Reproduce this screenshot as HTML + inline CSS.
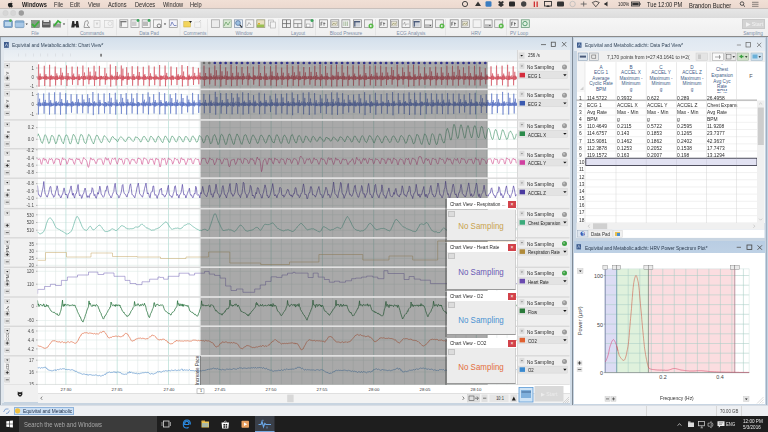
<!DOCTYPE html><html><head><meta charset="utf-8"><style>
html,body{margin:0;padding:0;width:768px;height:432px;overflow:hidden;background:#cfd9e4;font-family:"Liberation Sans", sans-serif;}
.t{position:absolute;white-space:nowrap;line-height:1;}
.r{position:absolute;box-sizing:border-box;}
svg{position:absolute;left:0;top:0;}
</style></head><body>
<div class="r" style="left:0px;top:0px;width:768px;height:8px;background:linear-gradient(#f1e0d6,#ecd9cf);"></div>
<svg width="768" height="18" style="left:0;top:0"><path d="M10.6,2.2 C10.9,1.7 11.3,1.4 11.6,1.4 C11.7,1.9 11.4,2.4 10.9,2.6 Z M8.5,3.2 C9.3,2.6 10.1,3.1 10.6,3.1 C11.1,3.1 11.9,2.6 12.7,3.3 C12.3,3.6 12.0,4.1 12.1,4.7 C12.2,5.4 12.6,5.7 12.9,5.9 C12.6,6.6 12.1,7.4 11.5,7.4 C11.0,7.4 10.9,7.1 10.5,7.1 C10.1,7.1 9.9,7.4 9.4,7.4 C8.8,7.4 8.0,6.1 7.9,5.1 C7.8,4.2 8.0,3.6 8.5,3.2 Z" fill="#222"/></svg>
<div class="t" style="left:22.00px;top:2.04px;font-size:20px;color:#1a1a1a;font-weight:bold;transform-origin:0 0;transform:scale(0.2835,0.3150);filter:grayscale(1);">Windows</div>
<div class="t" style="left:54.00px;top:2.04px;font-size:20px;color:#2a2a2a;font-weight:normal;transform-origin:0 0;transform:scale(0.2835,0.3150);filter:grayscale(1);">File</div>
<div class="t" style="left:70.00px;top:2.04px;font-size:20px;color:#2a2a2a;font-weight:normal;transform-origin:0 0;transform:scale(0.2835,0.3150);filter:grayscale(1);">Edit</div>
<div class="t" style="left:88.00px;top:2.04px;font-size:20px;color:#2a2a2a;font-weight:normal;transform-origin:0 0;transform:scale(0.2835,0.3150);filter:grayscale(1);">View</div>
<div class="t" style="left:108.00px;top:2.04px;font-size:20px;color:#2a2a2a;font-weight:normal;transform-origin:0 0;transform:scale(0.2835,0.3150);filter:grayscale(1);">Actions</div>
<div class="t" style="left:135.00px;top:2.04px;font-size:20px;color:#2a2a2a;font-weight:normal;transform-origin:0 0;transform:scale(0.2835,0.3150);filter:grayscale(1);">Devices</div>
<div class="t" style="left:163.00px;top:2.04px;font-size:20px;color:#2a2a2a;font-weight:normal;transform-origin:0 0;transform:scale(0.2835,0.3150);filter:grayscale(1);">Window</div>
<div class="t" style="left:190.00px;top:2.04px;font-size:20px;color:#2a2a2a;font-weight:normal;transform-origin:0 0;transform:scale(0.2835,0.3150);filter:grayscale(1);">Help</div>
<svg width="768" height="10" style="left:0;top:0"><circle cx="465" cy="4" r="2.6" fill="none" stroke="#333" stroke-width="0.9"/><path d="M475,6 L478,1.5 L481,6 Z" fill="#333"/><rect x="485.5" y="1.2" width="6" height="5.6" rx="1.2" fill="#3a7cc0"/><path d="M498,2 L499.5,1 L501,2 L502.5,1 L504,2 L502.5,3.5 L504,5 L501,7 L498,5 L499.5,3.5 Z" fill="#333"/><rect x="509" y="1.5" width="6" height="5" rx="1" fill="#2a2a2a"/><circle cx="523.7" cy="4" r="2.7" fill="#444"/><rect x="533.7" y="1.5" width="1.3" height="5.5" fill="#d03030"/><rect x="536.5" y="1.5" width="1.3" height="5.5" fill="#d03030"/><rect x="544.5" y="1.5" width="7" height="4.5" fill="none" stroke="#333" stroke-width="0.9"/><path d="M546,7 L548,5 L550,7Z" fill="#333"/><rect x="557.0" y="1.5" width="7" height="5" rx="1" fill="#333"/><circle cx="572.6" cy="4" r="2.7" fill="none" stroke="#bbb" stroke-width="0.8"/><path d="M580.7,4 L586.7,4 M583.7,1.5 L583.7,6.5" stroke="#555" stroke-width="0.8"/><path d="M592.3,2.5 Q595.8,0 599.3,2.5 L595.8,6.8 Z" fill="none" stroke="#333" stroke-width="0.8"/><path d="M604.5,3 L605.5,3 L607.5,1.5 L607.5,6.5 L605.5,5 L604.5,5 Z" fill="#333"/><rect x="631.5" y="2" width="8" height="4" fill="none" stroke="#333" stroke-width="0.8"/><rect x="632.3" y="2.8" width="6.4" height="2.4" fill="#333"/><rect x="639.7" y="3.2" width="0.9" height="1.6" fill="#333"/><circle cx="742" cy="3.6" r="1.8" fill="none" stroke="#333" stroke-width="0.8"/><path d="M743.3,5 L745,6.7" stroke="#333" stroke-width="0.9"/><path d="M752,2.3 H758.5 M752,4.3 H758.5 M752,6.3 H758.5" stroke="#333" stroke-width="0.55"/></svg>
<div class="t" style="left:617.70px;top:2.44px;font-size:20px;color:#222;font-weight:normal;transform-origin:0 0;transform:scale(0.2207,0.2508);">100%</div>
<div class="t" style="left:646.70px;top:1.78px;font-size:20px;color:#222;font-weight:normal;transform-origin:0 0;transform:scale(0.2829,0.3214);">Tue 12:00 PM</div>
<div class="t" style="left:688.50px;top:1.68px;font-size:20px;color:#222;font-weight:normal;transform-origin:0 0;transform:scale(0.2918,0.3316);">Brandon Bucher</div>
<div class="r" style="left:0px;top:8px;width:768px;height:9.5px;background:linear-gradient(#e6e6e6,#dcdcdc);border-top:0.5px solid #c8c0bc"></div>
<svg width="40" height="18" style="left:0;top:0"><circle cx="5.5" cy="13" r="2.7" fill="#d6d6d6" stroke="#cdcdcd" stroke-width="0.4"/><circle cx="13.2" cy="13" r="2.7" fill="#d6d6d6" stroke="#cdcdcd" stroke-width="0.4"/><circle cx="21.3" cy="13" r="2.7" fill="#9c9c9c"/></svg>
<div class="r" style="left:0px;top:17.5px;width:768px;height:19.5px;background:linear-gradient(#f6f6f6,#efefef);border-bottom:1px solid #8a8a8a"></div>
<svg width="768" height="40" style="left:0;top:0"><rect x="3.8" y="20.5" width="8.6" height="7" rx="0.8" fill="#7fa8d0" stroke="#5a7fa8" stroke-width="0.6"/><rect x="5" y="22" width="6" height="4" fill="#bcd6ec"/><circle cx="10.5" cy="20.6" r="1.4" fill="#4caf50"/><rect x="15.2" y="20.8" width="8.8" height="6.8" rx="0.8" fill="#8bb2d6" stroke="#5d86ad" stroke-width="0.6"/><rect x="15.5" y="23" width="8.2" height="3.8" fill="#a9c8e6"/><path d="M25.5,23.6 L27.9,23.6 L26.7,25 Z" fill="#333"/><rect x="31.5" y="20.5" width="8" height="7.2" fill="#8a9a8a" stroke="#607060" stroke-width="0.5"/><path d="M32,24 L34.5,26.5 L39,21.5" stroke="#3cae3c" stroke-width="1.8" fill="none"/><rect x="42" y="20.2" width="8.6" height="7.4" rx="0.8" fill="#5e5e5e"/><rect x="43.5" y="20" width="5.6" height="2" fill="#e8e8e8"/><rect x="43" y="23" width="6.6" height="2" fill="#8a8a8a"/><rect x="53" y="23.5" width="8" height="4" fill="#a0a0a0"/><path d="M54,26 L58,21 L61,23" stroke="#3cae3c" stroke-width="1.8" fill="none"/><path d="M62.8,23.6 L65.2,23.6 L64,25 Z" fill="#333"/><path d="M71.2,27.5 L72.3,21 L74.2,21 L74.6,24 L75.8,24 L76.2,21 L78.1,21 L79.2,27.5 L76,27.5 L75.5,25.5 L74.9,25.5 L74.4,27.5 Z" fill="#2a2a2a"/><path d="M84,27.5 L85,21.5 L87.5,20.5 L88.5,23 L87,25 L89.8,27.5 Z" fill="none" stroke="#8a8a8a" stroke-width="0.8"/><rect x="94" y="20.5" width="6" height="7" fill="none" stroke="#c4c4c4" stroke-width="0.6"/><path d="M95.5,22.5 L98.5,22.5 L97,25.5 Z" fill="#d0d0d0"/><rect x="104.5" y="20.5" width="8.5" height="7" fill="none" stroke="#cacaca" stroke-width="0.6"/><circle cx="110" cy="23.5" r="2" fill="none" stroke="#cfcfcf" stroke-width="0.6"/><rect x="119.8" y="19.8" width="8" height="7.6" fill="#f4f4f4" stroke="#9c9c9c" stroke-width="0.8"/><rect x="120.5" y="21" width="6" height="1.3" fill="#777"/><rect x="120.5" y="21" width="1.2" height="5.6" fill="#777"/><rect x="131.0" y="19.8" width="8" height="7.6" fill="#f4f4f4" stroke="#9c9c9c" stroke-width="0.8"/><circle cx="138" cy="20.5" r="1.4" fill="#3aa65a"/><rect x="131.5" y="21.5" width="5" height="4.5" fill="#ccc"/><rect x="142.2" y="19.8" width="8" height="7.6" fill="#f4f4f4" stroke="#9c9c9c" stroke-width="0.8"/><circle cx="149" cy="20.5" r="1.4" fill="#3aa65a"/><rect x="143" y="21.5" width="5" height="4.5" fill="#bbb"/><rect x="153.5" y="19.8" width="8" height="7.6" fill="#f4f4f4" stroke="#9c9c9c" stroke-width="0.8"/><circle cx="159" cy="25.8" r="1.8" fill="none" stroke="#666" stroke-width="0.8"/><path d="M163.8,23.6 L166.2,23.6 L165,25 Z" fill="#333"/><rect x="169.3" y="19.8" width="8" height="7.6" fill="#f2f2fa" stroke="#9c9c9c" stroke-width="0.8"/><path d="M170.5,26 L172,22 L174,25.5 L176.5,25.5" stroke="#5a6ab0" stroke-width="0.7" fill="none"/><rect x="183.8" y="21.5" width="6.5" height="5.5" fill="#f2d45c" stroke="#c8a830" stroke-width="0.5"/><path d="M189,21 L192,21 L190.5,23 Z" fill="#222"/><rect x="194.8" y="22" width="6" height="5.5" fill="none" stroke="#d4d4d4" stroke-width="0.6"/><path d="M199,22 L201,20" stroke="#bbb" stroke-width="0.6"/><rect x="211.5" y="19.8" width="8" height="7.6" fill="#ececec" stroke="#a8a8a8" stroke-width="0.8"/><rect x="223.3" y="19.8" width="8" height="7.6" fill="#d8ead2" stroke="#9aaa9a" stroke-width="0.8"/><path d="M224,26 L226,22 L228,25 L230,21.5" stroke="#4a8a4a" stroke-width="0.6" fill="none"/><rect x="234.5" y="19.8" width="8" height="7.6" fill="#e6eef6" stroke="#8a9ab0" stroke-width="0.8"/><circle cx="238" cy="23" r="2.4" fill="#9cc0e0" stroke="#4a6a9a" stroke-width="0.7"/><path d="M239.8,24.8 L242,27.3" stroke="#222" stroke-width="1.1"/><rect x="245.8" y="19.8" width="8" height="7.6" fill="#f2f2f2" stroke="#a0a0a0" stroke-width="0.8"/><path d="M247,26 L249,22.5 L251,25" stroke="#888" stroke-width="0.6" fill="none"/><rect x="256.8" y="19.8" width="8" height="7.6" fill="#e8e0c0" stroke="#9a9a7a" stroke-width="0.8"/><rect x="257" y="24.5" width="7" height="2.6" fill="#9ac050"/><rect x="258" y="23" width="2" height="1.5" fill="#e0b030"/><rect x="268.3" y="20" width="5" height="6" fill="#f0f0f0" stroke="#aaa" stroke-width="0.6"/><rect x="270.5" y="22" width="5" height="6" fill="#f4f4f4" stroke="#aaa" stroke-width="0.6"/><rect x="282.5" y="19.8" width="8" height="7.6" fill="#f0f0f0" stroke="#777" stroke-width="0.8"/><path d="M286.5,20 V27.5 M282.5,23.6 H290.5" stroke="#666" stroke-width="0.8"/><rect x="293.8" y="19.8" width="8" height="7.6" fill="#f0f0f0" stroke="#888" stroke-width="0.8"/><path d="M297.8,23.6 V27.5 M293.8,23.6 H301.8" stroke="#777" stroke-width="0.7"/><rect x="305.0" y="19.8" width="8" height="7.6" fill="#f0f0f0" stroke="#888" stroke-width="0.8"/><circle cx="312" cy="20.5" r="1.5" fill="#3aa65a"/><rect x="306.5" y="24" width="3.5" height="3" fill="#fff" stroke="#888" stroke-width="0.5"/><rect x="319.5" y="19.8" width="8" height="7.6" fill="#f2f2f2" stroke="#8c8c8c" stroke-width="0.8"/><path d="M321,25.8 V22.2 H322.6 M321,24 H322.2 M324,22.2 V25.8 M323.4,23.5 L325.4,23.5" stroke="#444" stroke-width="0.6" fill="none"/><rect x="330.8" y="19.8" width="8" height="7.6" fill="#f2f2f2" stroke="#8c8c8c" stroke-width="0.8"/><rect x="331.90000000000003" y="21.4" width="5.4" height="4.6" fill="#e8e4d0" stroke="#888" stroke-width="0.4"/><path d="M332.3,25 L333.8,23 L335.3,24.5 L336.8,22.5" stroke="#6a6a3a" stroke-width="0.5" fill="none"/><rect x="341.9" y="19.8" width="8" height="7.6" fill="#f2f2f2" stroke="#8c8c8c" stroke-width="0.8"/><path d="M343.9,21.5 V26 M345.7,21.5 V26 M347.4,21.5 V26" stroke="#7a9a6a" stroke-width="0.6"/><rect x="353.5" y="19.8" width="8" height="7.6" fill="#f2f2f2" stroke="#8c8c8c" stroke-width="0.8"/><rect x="354.2" y="21" width="6" height="5.6" fill="#d0d4dc"/><rect x="354.2" y="21" width="6" height="1.4" fill="#4a5a7a"/><rect x="354.2" y="21" width="1.2" height="5.6" fill="#4a5a7a"/><rect x="364.5" y="19.8" width="8" height="7.6" fill="#f0f0f0" stroke="#9a9a9a" stroke-width="0.8"/><circle cx="371" cy="26" r="2.5" fill="#5ab84a"/><path d="M370.2,24.8 L372.2,26 L370.2,27.2Z" fill="#fff"/><rect x="379.3" y="19.8" width="8" height="7.6" fill="#f2f2f2" stroke="#8c8c8c" stroke-width="0.8"/><path d="M380.8,25.8 V22.2 H382.40000000000003 M380.8,24 H382.0 M383.8,22.2 V25.8 M383.2,23.5 L385.2,23.5" stroke="#444" stroke-width="0.6" fill="none"/><rect x="390.5" y="19.8" width="8" height="7.6" fill="#f2f2f2" stroke="#8c8c8c" stroke-width="0.8"/><rect x="391.6" y="21.4" width="5.4" height="4.6" fill="#e8e4d0" stroke="#888" stroke-width="0.4"/><path d="M392,25 L393.5,23 L395,24.5 L396.5,22.5" stroke="#6a6a3a" stroke-width="0.5" fill="none"/><rect x="402.0" y="19.8" width="8" height="7.6" fill="#f2f2f2" stroke="#8c8c8c" stroke-width="0.8"/><path d="M402.7,24 L404.0,24 L404.7,22 L405.5,25.5 L406.3,24 L408.9,24" stroke="#888" stroke-width="0.5" fill="none"/><rect x="413.0" y="19.8" width="8" height="7.6" fill="#f2f2f2" stroke="#8c8c8c" stroke-width="0.8"/><rect x="413.7" y="21" width="6" height="5.6" fill="#d0d4dc"/><rect x="413.7" y="21" width="6" height="1.4" fill="#4a5a7a"/><rect x="413.7" y="21" width="1.2" height="5.6" fill="#4a5a7a"/><rect x="424.5" y="19.8" width="8" height="7.6" fill="#f2f2f2" stroke="#8c8c8c" stroke-width="0.8"/><rect x="425" y="24.2" width="6.5" height="2.6" fill="#bbb"/><path d="M429.5,25 L431,25 L430.25,26Z" fill="#111"/><rect x="435.5" y="19.8" width="8" height="7.6" fill="#f0f0f0" stroke="#9a9a9a" stroke-width="0.8"/><circle cx="442" cy="26" r="2.5" fill="#5ab84a"/><path d="M441.2,24.8 L443.2,26 L441.2,27.2Z" fill="#fff"/><rect x="450.2" y="19.8" width="8" height="7.6" fill="#f2f2f2" stroke="#8c8c8c" stroke-width="0.8"/><path d="M451.7,25.8 V22.2 H453.3 M451.7,24 H452.9 M454.7,22.2 V25.8 M454.09999999999997,23.5 L456.09999999999997,23.5" stroke="#444" stroke-width="0.6" fill="none"/><rect x="461.3" y="19.8" width="8" height="7.6" fill="#f2f2f2" stroke="#8c8c8c" stroke-width="0.8"/><rect x="462.40000000000003" y="21.4" width="5.4" height="4.6" fill="#e8e4d0" stroke="#888" stroke-width="0.4"/><path d="M462.8,25 L464.3,23 L465.8,24.5 L467.3,22.5" stroke="#6a6a3a" stroke-width="0.5" fill="none"/><rect x="473.1" y="19.8" width="8" height="7.6" fill="#f2f2f2" stroke="#c0c0c0" stroke-width="0.8"/><rect x="484.1" y="19.8" width="8" height="7.6" fill="#f2f2f2" stroke="#8c8c8c" stroke-width="0.8"/><rect x="484.6" y="24.2" width="6.5" height="2.6" fill="#bbb"/><path d="M489.1,25 L490.6,25 L489.85,26Z" fill="#111"/><rect x="494.7" y="19.8" width="8" height="7.6" fill="#f0f0f0" stroke="#9a9a9a" stroke-width="0.8"/><circle cx="501.2" cy="26" r="2.5" fill="#5ab84a"/><path d="M500.4,24.8 L502.4,26 L500.4,27.2Z" fill="#fff"/><rect x="510.1" y="19.8" width="8" height="7.6" fill="#f2f2f2" stroke="#8c8c8c" stroke-width="0.8"/><path d="M511.6,25.8 V22.2 H513.2 M511.6,24 H512.8000000000001 M514.6,22.2 V25.8 M514.0,23.5 L516.0,23.5" stroke="#444" stroke-width="0.6" fill="none"/><rect x="521.3" y="19.8" width="8" height="7.6" fill="#e0f0e0" stroke="#6a9a7a" stroke-width="0.8"/><circle cx="525" cy="23.6" r="2.2" fill="none" stroke="#3a8a5a" stroke-width="0.8"/><rect x="67.5" y="19" width="0.6" height="16.5" fill="#dcdcdc"/><rect x="116.3" y="19" width="0.6" height="16.5" fill="#dcdcdc"/><rect x="179.7" y="19" width="0.6" height="16.5" fill="#dcdcdc"/><rect x="207.3" y="19" width="0.6" height="16.5" fill="#dcdcdc"/><rect x="278.6" y="19" width="0.6" height="16.5" fill="#dcdcdc"/><rect x="315.2" y="19" width="0.6" height="16.5" fill="#dcdcdc"/><rect x="375.4" y="19" width="0.6" height="16.5" fill="#dcdcdc"/><rect x="445.2" y="19" width="0.6" height="16.5" fill="#dcdcdc"/><rect x="506" y="19" width="0.6" height="16.5" fill="#dcdcdc"/></svg>
<div class="t" style="left:34.75px;top:30.53px;font-size:20px;color:#7d8fa8;font-weight:normal;transform-origin:0 0;transform:scale(0.2363,0.2625) translateX(-50%);">File</div>
<div class="t" style="left:91.70px;top:30.53px;font-size:20px;color:#7d8fa8;font-weight:normal;transform-origin:0 0;transform:scale(0.2363,0.2625) translateX(-50%);">Commands</div>
<div class="t" style="left:148.50px;top:30.53px;font-size:20px;color:#7d8fa8;font-weight:normal;transform-origin:0 0;transform:scale(0.2363,0.2625) translateX(-50%);">Data Pad</div>
<div class="t" style="left:194.65px;top:30.53px;font-size:20px;color:#7d8fa8;font-weight:normal;transform-origin:0 0;transform:scale(0.2363,0.2625) translateX(-50%);">Comments</div>
<div class="t" style="left:243.60px;top:30.53px;font-size:20px;color:#7d8fa8;font-weight:normal;transform-origin:0 0;transform:scale(0.2363,0.2625) translateX(-50%);">Window</div>
<div class="t" style="left:297.75px;top:30.53px;font-size:20px;color:#7d8fa8;font-weight:normal;transform-origin:0 0;transform:scale(0.2363,0.2625) translateX(-50%);">Layout</div>
<div class="t" style="left:346.35px;top:30.53px;font-size:20px;color:#7d8fa8;font-weight:normal;transform-origin:0 0;transform:scale(0.2363,0.2625) translateX(-50%);">Blood Pressure</div>
<div class="t" style="left:411.20px;top:30.53px;font-size:20px;color:#7d8fa8;font-weight:normal;transform-origin:0 0;transform:scale(0.2363,0.2625) translateX(-50%);">ECG Analysis</div>
<div class="t" style="left:476.40px;top:30.53px;font-size:20px;color:#7d8fa8;font-weight:normal;transform-origin:0 0;transform:scale(0.2363,0.2625) translateX(-50%);">HRV</div>
<div class="t" style="left:519.20px;top:30.53px;font-size:20px;color:#7d8fa8;font-weight:normal;transform-origin:0 0;transform:scale(0.2363,0.2625) translateX(-50%);">PV Loop</div>
<div class="t" style="left:753.05px;top:30.53px;font-size:20px;color:#7d8fa8;font-weight:normal;transform-origin:0 0;transform:scale(0.2363,0.2625) translateX(-50%);">Sampling</div>
<div class="r" style="left:741.5px;top:19px;width:23.5px;height:9.5px;background:#d3d3d3;border:0.5px solid #c8c8c8"></div>
<div class="t" style="left:746.00px;top:21.21px;font-size:20px;color:#f2f2f2;font-weight:normal;transform-origin:0 0;transform:scale(0.2750,0.2750);filter:grayscale(1);">&#9654; Start</div>
<div class="r" style="left:0px;top:37px;width:572px;height:368px;background:#c6d3e0;"></div>
<div class="r" style="left:0px;top:37px;width:1px;height:368px;background:#9ba5b0;"></div>
<div class="r" style="left:1px;top:37.6px;width:570.5px;height:12px;background:linear-gradient(#d4e0ec,#e0e8f0);"></div>
<svg width="20" height="60" style="left:0;top:0"><rect x="4" y="42" width="4.8" height="5.8" fill="#3b5a8c"/><path d="M5,46.5 L6.5,43.5 L7.8,46.5" stroke="#dfe8f4" stroke-width="0.6" fill="none"/></svg>
<div class="t" style="left:12.00px;top:41.74px;font-size:20px;color:#34465a;font-weight:normal;transform-origin:0 0;transform:scale(0.2396,0.2723);">Equivital and Metabolic.adicht: Chart View*</div>
<svg width="768" height="60" style="left:0;top:0"><path d="M541,44.6 H546" stroke="#555" stroke-width="0.8"/><rect x="551.3" y="42.2" width="4" height="4.2" fill="none" stroke="#555" stroke-width="0.8"/><path d="M562,42 L566.3,46.5 M566.3,42 L562,46.5" stroke="#555" stroke-width="0.8"/></svg>
<div class="r" style="left:2px;top:49.6px;width:568px;height:12px;background:linear-gradient(#e6ecf2,#eff2f5);"></div>
<svg width="768" height="64" style="left:0;top:0"><rect x="18" y="53.5" width="0.6" height="3" fill="#d4d8dc"/><rect x="25.5" y="53.5" width="0.6" height="3" fill="#d4d8dc"/><rect x="33" y="53.5" width="0.6" height="3" fill="#d4d8dc"/><rect x="40" y="53.5" width="0.6" height="3" fill="#d4d8dc"/><rect x="47.5" y="53.5" width="0.6" height="3" fill="#d4d8dc"/><rect x="55" y="53.5" width="0.6" height="3" fill="#d4d8dc"/><rect x="62.5" y="53.5" width="0.6" height="3" fill="#d4d8dc"/><rect x="70" y="53.5" width="0.6" height="3" fill="#d4d8dc"/><rect x="100.3" y="53.8" width="1.5" height="2.8" fill="#666"/></svg>
<div class="r" style="left:3.5px;top:61.5px;width:34px;height:324px;background:#f1f1f1;"></div>
<div class="r" style="left:37.5px;top:61.5px;width:479.5px;height:323.5px;background:#ffffff;"></div>
<div class="r" style="left:517px;top:49.6px;width:52.5px;height:335.5px;background:#efefef;border-left:0.6px solid #d8d8d8"></div>
<div class="r" style="left:569.5px;top:37.6px;width:2.5px;height:367px;background:#d2dde8;"></div>
<svg width="768" height="432" style="left:0;top:0"><defs><clipPath id="pc"><rect x="37.5" y="61.5" width="479.5" height="323.5"/></clipPath></defs><g clip-path="url(#pc)"><line x1="37.5" x2="517" y1="68" y2="68" stroke="#dde9e6" stroke-width="0.6"/><line x1="37.5" x2="517" y1="77" y2="77" stroke="#dde9e6" stroke-width="0.6"/><line x1="37.5" x2="517" y1="86" y2="86" stroke="#dde9e6" stroke-width="0.6"/><line x1="37.5" x2="517" y1="94.5" y2="94.5" stroke="#dde9e6" stroke-width="0.6"/><line x1="37.5" x2="517" y1="104.5" y2="104.5" stroke="#dde9e6" stroke-width="0.6"/><line x1="37.5" x2="517" y1="114" y2="114" stroke="#dde9e6" stroke-width="0.6"/><line x1="37.5" x2="517" y1="127.6" y2="127.6" stroke="#dde9e6" stroke-width="0.6"/><line x1="37.5" x2="517" y1="139.3" y2="139.3" stroke="#dde9e6" stroke-width="0.6"/><line x1="37.5" x2="517" y1="149.8" y2="149.8" stroke="#dde9e6" stroke-width="0.6"/><line x1="37.5" x2="517" y1="158" y2="158" stroke="#dde9e6" stroke-width="0.6"/><line x1="37.5" x2="517" y1="165.2" y2="165.2" stroke="#dde9e6" stroke-width="0.6"/><line x1="37.5" x2="517" y1="172.5" y2="172.5" stroke="#dde9e6" stroke-width="0.6"/><line x1="37.5" x2="517" y1="183.6" y2="183.6" stroke="#dde9e6" stroke-width="0.6"/><line x1="37.5" x2="517" y1="191" y2="191" stroke="#dde9e6" stroke-width="0.6"/><line x1="37.5" x2="517" y1="198.2" y2="198.2" stroke="#dde9e6" stroke-width="0.6"/><line x1="37.5" x2="517" y1="205.4" y2="205.4" stroke="#dde9e6" stroke-width="0.6"/><line x1="37.5" x2="517" y1="214.8" y2="214.8" stroke="#dde9e6" stroke-width="0.6"/><line x1="37.5" x2="517" y1="222.5" y2="222.5" stroke="#dde9e6" stroke-width="0.6"/><line x1="37.5" x2="517" y1="230.2" y2="230.2" stroke="#dde9e6" stroke-width="0.6"/><line x1="37.5" x2="517" y1="244" y2="244" stroke="#dde9e6" stroke-width="0.6"/><line x1="37.5" x2="517" y1="251.2" y2="251.2" stroke="#dde9e6" stroke-width="0.6"/><line x1="37.5" x2="517" y1="258.3" y2="258.3" stroke="#dde9e6" stroke-width="0.6"/><line x1="37.5" x2="517" y1="265.3" y2="265.3" stroke="#dde9e6" stroke-width="0.6"/><line x1="37.5" x2="517" y1="271.3" y2="271.3" stroke="#dde9e6" stroke-width="0.6"/><line x1="37.5" x2="517" y1="284.2" y2="284.2" stroke="#dde9e6" stroke-width="0.6"/><line x1="37.5" x2="517" y1="306.3" y2="306.3" stroke="#dde9e6" stroke-width="0.6"/><line x1="37.5" x2="517" y1="320.5" y2="320.5" stroke="#dde9e6" stroke-width="0.6"/><line x1="37.5" x2="517" y1="331" y2="331" stroke="#dde9e6" stroke-width="0.6"/><line x1="37.5" x2="517" y1="340" y2="340" stroke="#dde9e6" stroke-width="0.6"/><line x1="37.5" x2="517" y1="348.9" y2="348.9" stroke="#dde9e6" stroke-width="0.6"/><line x1="37.5" x2="517" y1="360.2" y2="360.2" stroke="#dde9e6" stroke-width="0.6"/><line x1="37.5" x2="517" y1="372" y2="372" stroke="#dde9e6" stroke-width="0.6"/><line x1="37.5" x2="517" y1="384.4" y2="384.4" stroke="#dde9e6" stroke-width="0.6"/><line x1="45.38" x2="45.38" y1="61.5" y2="385" stroke="#dfe7e6" stroke-width="0.6"/><line x1="55.64" x2="55.64" y1="61.5" y2="385" stroke="#dfe7e6" stroke-width="0.6"/><line x1="65.90" x2="65.90" y1="61.5" y2="385" stroke="#b4dcd4" stroke-width="0.7"/><line x1="76.16" x2="76.16" y1="61.5" y2="385" stroke="#dfe7e6" stroke-width="0.6"/><line x1="86.42" x2="86.42" y1="61.5" y2="385" stroke="#dfe7e6" stroke-width="0.6"/><line x1="96.68" x2="96.68" y1="61.5" y2="385" stroke="#dfe7e6" stroke-width="0.6"/><line x1="106.94" x2="106.94" y1="61.5" y2="385" stroke="#dfe7e6" stroke-width="0.6"/><line x1="117.20" x2="117.20" y1="61.5" y2="385" stroke="#b4dcd4" stroke-width="0.7"/><line x1="127.46" x2="127.46" y1="61.5" y2="385" stroke="#dfe7e6" stroke-width="0.6"/><line x1="137.72" x2="137.72" y1="61.5" y2="385" stroke="#dfe7e6" stroke-width="0.6"/><line x1="147.98" x2="147.98" y1="61.5" y2="385" stroke="#dfe7e6" stroke-width="0.6"/><line x1="158.24" x2="158.24" y1="61.5" y2="385" stroke="#dfe7e6" stroke-width="0.6"/><line x1="168.50" x2="168.50" y1="61.5" y2="385" stroke="#b4dcd4" stroke-width="0.7"/><line x1="178.76" x2="178.76" y1="61.5" y2="385" stroke="#dfe7e6" stroke-width="0.6"/><line x1="189.02" x2="189.02" y1="61.5" y2="385" stroke="#dfe7e6" stroke-width="0.6"/><line x1="199.28" x2="199.28" y1="61.5" y2="385" stroke="#dfe7e6" stroke-width="0.6"/><line x1="209.54" x2="209.54" y1="61.5" y2="385" stroke="#dfe7e6" stroke-width="0.6"/><line x1="219.80" x2="219.80" y1="61.5" y2="385" stroke="#b4dcd4" stroke-width="0.7"/><line x1="230.06" x2="230.06" y1="61.5" y2="385" stroke="#dfe7e6" stroke-width="0.6"/><line x1="240.32" x2="240.32" y1="61.5" y2="385" stroke="#dfe7e6" stroke-width="0.6"/><line x1="250.58" x2="250.58" y1="61.5" y2="385" stroke="#dfe7e6" stroke-width="0.6"/><line x1="260.84" x2="260.84" y1="61.5" y2="385" stroke="#dfe7e6" stroke-width="0.6"/><line x1="271.10" x2="271.10" y1="61.5" y2="385" stroke="#b4dcd4" stroke-width="0.7"/><line x1="281.36" x2="281.36" y1="61.5" y2="385" stroke="#dfe7e6" stroke-width="0.6"/><line x1="291.62" x2="291.62" y1="61.5" y2="385" stroke="#dfe7e6" stroke-width="0.6"/><line x1="301.88" x2="301.88" y1="61.5" y2="385" stroke="#dfe7e6" stroke-width="0.6"/><line x1="312.14" x2="312.14" y1="61.5" y2="385" stroke="#dfe7e6" stroke-width="0.6"/><line x1="322.40" x2="322.40" y1="61.5" y2="385" stroke="#b4dcd4" stroke-width="0.7"/><line x1="332.66" x2="332.66" y1="61.5" y2="385" stroke="#dfe7e6" stroke-width="0.6"/><line x1="342.92" x2="342.92" y1="61.5" y2="385" stroke="#dfe7e6" stroke-width="0.6"/><line x1="353.18" x2="353.18" y1="61.5" y2="385" stroke="#dfe7e6" stroke-width="0.6"/><line x1="363.44" x2="363.44" y1="61.5" y2="385" stroke="#dfe7e6" stroke-width="0.6"/><line x1="373.70" x2="373.70" y1="61.5" y2="385" stroke="#b4dcd4" stroke-width="0.7"/><line x1="383.96" x2="383.96" y1="61.5" y2="385" stroke="#dfe7e6" stroke-width="0.6"/><line x1="394.22" x2="394.22" y1="61.5" y2="385" stroke="#dfe7e6" stroke-width="0.6"/><line x1="404.48" x2="404.48" y1="61.5" y2="385" stroke="#dfe7e6" stroke-width="0.6"/><line x1="414.74" x2="414.74" y1="61.5" y2="385" stroke="#dfe7e6" stroke-width="0.6"/><line x1="425.00" x2="425.00" y1="61.5" y2="385" stroke="#b4dcd4" stroke-width="0.7"/><line x1="435.26" x2="435.26" y1="61.5" y2="385" stroke="#dfe7e6" stroke-width="0.6"/><line x1="445.52" x2="445.52" y1="61.5" y2="385" stroke="#dfe7e6" stroke-width="0.6"/><line x1="455.78" x2="455.78" y1="61.5" y2="385" stroke="#dfe7e6" stroke-width="0.6"/><line x1="466.04" x2="466.04" y1="61.5" y2="385" stroke="#dfe7e6" stroke-width="0.6"/><line x1="476.30" x2="476.30" y1="61.5" y2="385" stroke="#b4dcd4" stroke-width="0.7"/><line x1="486.56" x2="486.56" y1="61.5" y2="385" stroke="#dfe7e6" stroke-width="0.6"/><line x1="496.82" x2="496.82" y1="61.5" y2="385" stroke="#dfe7e6" stroke-width="0.6"/><line x1="507.08" x2="507.08" y1="61.5" y2="385" stroke="#dfe7e6" stroke-width="0.6"/><path d="M36.9,78.2 37.2,76.3 37.5,79.3 37.9,77.4 38.3,79.6 38.6,64.4 39.0,86.7 39.3,75.8 39.6,80.0 39.9,76.8 40.2,73.6 40.5,79.7 40.8,76.2 41.2,79.3 41.6,76.8 41.9,79.2 42.6,78.1 42.6,77.8 42.9,76.3 43.2,79.1 43.6,77.1 44.0,79.0 44.3,65.8 44.7,86.0 45.0,75.7 45.3,79.6 45.6,76.9 45.9,74.1 46.2,79.5 46.5,76.1 46.9,79.7 47.3,76.7 47.6,78.8 47.9,78.4 47.9,78.1 48.2,76.6 48.5,78.8 48.9,77.4 49.3,79.5 49.6,64.8 50.0,86.6 50.3,76.0 50.6,80.0 50.9,76.9 51.2,74.9 51.5,79.3 51.8,76.2 52.2,79.6 52.6,76.4 52.9,79.1 53.4,78.2 53.4,78.4 53.8,76.0 54.0,79.3 54.4,77.4 54.8,79.5 55.2,66.5 55.6,85.5 55.9,76.0 56.2,79.8 56.5,77.0 56.8,73.4 57.1,80.0 57.4,75.6 57.7,79.6 58.1,76.9 58.5,79.0 59.1,78.0 59.1,78.6 59.4,75.5 59.7,79.1 60.1,77.1 60.5,79.5 60.8,67.9 61.2,85.2 61.5,75.4 61.8,79.7 62.1,77.0 62.4,72.7 62.7,79.7 63.0,75.8 63.4,79.5 63.8,76.8 64.1,78.9 64.8,78.1 64.8,78.2 65.1,75.9 65.4,79.1 65.8,77.7 66.2,79.4 66.5,65.5 66.9,86.0 67.2,75.9 67.5,80.3 67.8,76.8 68.1,73.0 68.4,79.2 68.7,76.3 69.1,80.0 69.5,76.6 69.8,78.8 70.3,78.4 70.3,78.3 70.7,76.6 70.9,79.2 71.3,77.6 71.7,79.3 72.1,66.6 72.5,84.8 72.8,75.4 73.1,80.0 73.4,76.7 73.7,73.6 74.0,79.7 74.3,76.3 74.6,79.6 75.0,77.1 75.4,79.0 75.7,78.1 75.7,78.2 76.1,76.7 76.3,79.3 76.7,77.3 77.1,78.9 77.5,66.7 77.9,85.2 78.2,76.1 78.5,79.9 78.8,76.6 79.1,74.3 79.4,80.1 79.7,76.2 80.0,79.9 80.4,77.3 80.8,78.8 81.1,78.4 81.1,78.4 81.5,76.0 81.7,78.8 82.1,77.4 82.5,79.2 82.9,65.6 83.3,85.8 83.6,76.0 83.9,80.0 84.2,76.9 84.5,72.5 84.8,79.6 85.1,75.9 85.4,79.4 85.8,76.7 86.2,79.1 86.7,78.3 86.7,78.1 87.1,75.6 87.3,79.2 87.7,77.3 88.1,79.5 88.5,67.5 88.9,84.3 89.2,75.6 89.5,80.1 89.8,76.8 90.1,71.7 90.4,79.6 90.7,75.6 91.0,79.8 91.4,76.4 91.8,79.1 92.3,78.4 92.3,78.4 92.7,75.8 92.9,79.4 93.3,77.4 93.7,79.5 94.1,65.8 94.5,85.9 94.8,75.6 95.1,80.0 95.4,76.7 95.7,71.5 96.0,79.7 96.3,76.4 96.6,79.6 97.0,76.7 97.4,79.2 97.7,78.2 97.7,78.3 98.0,77.0 98.3,79.0 98.7,77.0 99.1,79.0 99.4,65.9 99.8,85.8 100.1,76.2 100.4,79.8 100.7,77.1 101.0,75.8 101.3,79.1 101.6,76.0 102.0,79.5 102.4,76.7 102.7,79.1 103.2,78.4 103.2,78.2 103.5,76.2 103.8,79.4 104.2,77.8 104.6,79.3 104.9,67.9 105.3,84.7 105.6,76.0 105.9,80.1 106.2,76.7 106.5,73.5 106.8,80.1 107.1,76.2 107.5,79.2 107.9,77.0 108.2,79.3 108.6,78.4 108.6,78.4 108.9,76.8 109.2,78.9 109.6,77.7 110.0,79.5 110.3,64.5 110.7,86.6 111.0,75.7 111.3,79.3 111.6,76.6 111.9,74.7 112.2,79.8 112.5,76.0 112.9,79.4 113.3,76.9 113.6,78.9 114.0,78.6 114.0,78.0 114.3,75.8 114.6,79.6 115.0,77.5 115.4,79.3 115.7,66.0 116.1,85.6 116.4,75.9 116.7,79.6 117.0,76.9 117.3,72.0 117.6,79.9 117.9,75.9 118.3,79.0 118.7,76.7 119.0,78.9 119.5,78.3 119.5,78.0 119.9,74.7 120.1,79.1 120.5,77.4 120.9,78.9 121.3,65.5 121.7,85.9 122.0,75.8 122.3,80.2 122.6,76.6 122.9,68.6 123.2,80.3 123.5,75.8 123.8,79.2 124.2,76.8 124.6,79.0 124.9,78.5 124.9,79.0 125.3,76.4 125.5,78.5 125.9,77.4 126.3,79.2 126.7,67.2 127.1,84.9 127.4,76.3 127.7,80.0 128.0,77.0 128.3,72.8 128.6,79.6 128.9,76.1 129.2,79.7 129.6,76.9 130.0,78.9 130.4,78.6 130.4,78.2 130.8,76.4 131.0,78.5 131.4,77.7 131.8,79.5 132.2,66.2 132.6,85.7 132.9,75.9 133.2,79.9 133.5,76.2 133.8,74.0 134.1,79.7 134.4,76.4 134.7,79.9 135.1,77.2 135.5,78.7 136.0,77.8 136.0,78.3 136.3,75.8 136.6,78.8 137.0,77.5 137.4,79.3 137.7,66.3 138.1,85.6 138.4,75.8 138.7,79.9 139.0,76.8 139.3,72.0 139.6,79.7 139.9,75.9 140.3,79.3 140.7,77.2 141.0,79.0 141.6,78.5 141.6,78.3 141.9,76.6 142.2,79.4 142.6,77.1 143.0,79.3 143.3,66.8 143.7,85.5 144.0,75.2 144.3,79.9 144.6,76.7 144.9,74.1 145.2,79.5 145.5,76.1 145.9,79.8 146.3,76.9 146.6,79.1 147.2,78.4 147.2,78.1 147.5,76.3 147.8,79.1 148.2,77.6 148.6,79.4 148.9,65.5 149.3,86.2 149.6,76.0 149.9,80.1 150.2,77.0 150.5,73.3 150.8,79.5 151.1,75.9 151.5,79.6 151.9,76.8 152.2,78.6 152.6,78.3 152.6,78.0 152.9,76.8 153.2,79.2 153.6,77.0 154.0,79.6 154.3,66.6 154.7,85.2 155.0,76.3 155.3,79.6 155.6,76.7 155.9,74.5 156.2,79.2 156.5,76.3 156.9,79.5 157.3,76.6 157.6,78.9 157.9,77.9 157.9,78.2 158.2,77.0 158.5,79.5 158.9,77.7 159.3,79.3 159.6,65.0 160.0,86.2 160.3,75.7 160.6,79.7 160.9,77.1 161.2,75.6 161.5,79.7 161.8,76.0 162.2,79.5 162.6,76.3 162.9,79.0 163.4,78.0 163.4,78.3 163.7,75.5 164.0,79.4 164.4,77.8 164.8,79.2 165.1,65.6 165.5,86.2 165.8,75.4 166.1,80.0 166.4,77.1 166.7,72.9 167.0,79.6 167.3,76.2 167.7,79.0 168.1,76.8 168.4,79.3 169.2,78.0 169.2,78.3 169.6,76.9 169.8,79.3 170.2,77.1 170.6,79.7 171.0,66.5 171.4,85.3 171.7,75.7 172.0,79.7 172.3,77.1 172.6,75.7 172.9,79.5 173.2,75.7 173.5,79.7 173.9,77.0 174.3,78.9 174.9,78.4 174.9,78.4 175.2,76.6 175.5,79.0 175.9,77.6 176.3,79.6 176.6,67.3 177.0,85.1 177.3,75.7 177.6,79.8 177.9,76.9 178.2,74.1 178.5,79.8 178.8,75.7 179.2,79.8 179.6,76.6 179.9,79.0 180.3,78.0 180.3,78.5 180.6,75.3 180.9,79.0 181.3,77.3 181.7,79.2 182.0,65.1 182.4,86.4 182.7,75.8 183.0,79.9 183.3,76.6 183.6,71.5 183.9,79.4 184.2,76.1 184.6,79.5 185.0,76.9 185.3,79.3 185.9,78.0 185.9,78.2 186.2,77.1 186.5,79.5 186.9,77.7 187.3,79.4 187.6,66.0 188.0,85.9 188.3,75.7 188.6,79.9 188.9,77.1 189.2,74.6 189.5,79.4 189.8,76.0 190.2,79.5 190.6,76.9 190.9,79.0 191.3,78.4 191.3,78.1 191.7,75.8 191.9,78.9 192.3,77.2 192.7,79.4 193.1,66.9 193.5,85.0 193.8,76.2 194.1,79.8 194.4,77.1 194.7,72.9 195.0,79.3 195.3,75.9 195.6,79.2 196.0,77.0 196.4,78.7 196.6,78.6 196.6,78.7 197.0,75.6 197.2,79.4 197.6,77.0 198.0,79.5 198.4,67.9 198.8,84.3 199.1,75.4 199.4,79.1 199.7,76.9 200.0,72.6 200.3,79.5 200.6,76.2 200.9,79.4 201.3,76.7 201.7,79.2 202.2,78.7 202.2,77.9 202.6,76.4 202.8,79.7 203.2,77.2 203.6,79.8 204.0,65.6 204.4,85.8 204.7,76.2 205.0,79.9 205.3,76.9 205.6,73.0 205.9,79.9 206.2,76.2 206.5,79.0 206.9,76.4 207.3,79.3 207.6,78.1 207.6,78.0 207.9,76.7 208.2,78.9 208.6,77.4 209.0,79.4 209.3,67.6 209.7,84.4 210.0,75.8 210.3,79.7 210.6,76.9 210.9,73.4 211.2,79.5 211.5,76.1 211.9,79.3 212.3,76.9 212.6,79.0 213.1,78.1 213.1,78.2 213.4,75.3 213.7,79.6 214.1,76.9 214.5,79.0 214.8,65.5 215.2,85.7 215.5,76.4 215.8,79.9 216.1,77.1 216.4,70.2 216.7,79.0 217.0,75.4 217.4,79.7 217.8,76.8 218.1,78.7 218.6,78.6 218.6,78.1 219.0,75.3 219.2,79.4 219.6,77.1 220.0,79.6 220.4,64.7 220.8,86.5 221.1,75.8 221.4,79.7 221.7,76.6 222.0,71.3 222.3,79.1 222.6,75.9 222.9,79.3 223.3,77.0 223.7,78.7 223.9,78.7 223.9,78.7 224.3,75.5 224.5,79.0 224.9,77.4 225.3,79.2 225.7,67.3 226.1,85.1 226.4,75.9 226.7,79.8 227.0,76.9 227.3,71.3 227.6,79.8 227.9,76.2 228.2,79.3 228.6,76.8 229.0,79.6 229.4,78.4 229.4,78.0 229.7,76.4 230.0,79.0 230.4,77.3 230.8,79.5 231.1,64.8 231.5,86.2 231.8,75.7 232.1,79.7 232.4,77.1 232.7,72.9 233.0,79.5 233.3,76.5 233.7,79.3 234.1,77.2 234.4,79.3 234.9,78.3 234.9,78.5 235.2,75.9 235.5,79.5 235.9,77.7 236.3,79.1 236.6,66.1 237.0,85.8 237.3,75.7 237.6,79.7 237.9,77.3 238.2,72.5 238.5,79.2 238.8,76.0 239.2,79.4 239.6,76.8 239.9,78.9 240.2,77.9 240.2,78.1 240.6,76.2 240.8,79.4 241.2,77.5 241.6,79.2 242.0,67.0 242.4,84.7 242.7,76.0 243.0,79.8 243.3,76.9 243.6,73.4 243.9,79.5 244.2,76.1 244.5,78.9 244.9,77.2 245.3,78.8 245.8,78.2 245.8,78.2 246.2,75.8 246.4,79.2 246.8,77.7 247.2,79.2 247.6,66.3 248.0,85.4 248.3,75.6 248.6,79.9 248.9,76.8 249.2,73.2 249.5,79.4 249.8,75.7 250.1,78.9 250.5,76.5 250.9,78.7 251.6,77.9 251.6,78.9 251.9,76.9 252.2,78.9 252.6,77.7 253.0,79.7 253.3,66.6 253.7,84.7 254.0,75.5 254.3,80.1 254.6,76.7 254.9,75.3 255.2,79.6 255.5,76.3 255.9,79.1 256.3,76.7 256.6,78.7 257.1,78.8 257.1,78.5 257.5,75.7 257.7,79.3 258.1,77.1 258.5,79.1 258.9,65.0 259.3,86.1 259.6,75.9 259.9,80.0 260.2,76.9 260.5,73.0 260.8,79.8 261.1,76.0 261.4,79.7 261.8,76.6 262.2,78.3 262.9,78.2 262.9,78.5 263.2,76.4 263.5,79.3 263.9,77.3 264.3,79.4 264.6,65.8 265.0,85.7 265.3,75.5 265.6,79.8 265.9,77.0 266.2,73.4 266.5,79.7 266.8,76.1 267.2,80.0 267.6,76.9 267.9,79.3 268.7,78.8 268.7,78.7 269.1,75.8 269.3,79.3 269.7,77.4 270.1,79.1 270.5,66.2 270.9,85.6 271.2,75.4 271.5,79.8 271.8,76.4 272.1,71.5 272.4,79.6 272.7,75.8 273.0,79.7 273.4,76.4 273.8,79.1 274.2,78.4 274.2,78.3 274.6,76.1 274.8,79.5 275.2,77.2 275.6,79.5 276.0,65.2 276.4,86.2 276.7,75.7 277.0,80.3 277.3,76.6 277.6,72.8 277.9,79.7 278.2,76.2 278.5,79.5 278.9,76.9 279.3,79.2 280.0,77.9 280.0,78.0 280.3,75.9 280.6,79.2 281.0,77.8 281.4,79.5 281.7,67.6 282.1,85.0 282.4,75.6 282.7,79.3 283.0,76.7 283.3,72.7 283.6,79.9 283.9,76.5 284.3,79.1 284.7,77.4 285.0,79.4 285.5,78.5 285.5,78.2 285.8,76.2 286.1,78.9 286.5,77.5 286.9,79.4 287.2,64.9 287.6,86.5 287.9,75.5 288.2,80.1 288.5,76.5 288.8,73.2 289.1,79.2 289.4,76.1 289.8,79.2 290.2,76.8 290.5,78.8 291.0,77.8 291.0,77.9 291.4,75.4 291.6,79.0 292.0,77.4 292.4,79.2 292.8,65.9 293.2,85.8 293.5,76.0 293.8,80.0 294.1,76.6 294.4,72.3 294.7,79.6 295.0,75.6 295.3,79.6 295.7,76.8 296.1,78.9 296.4,78.7 296.4,78.5 296.8,75.3 297.0,79.1 297.4,77.7 297.8,79.2 298.2,65.3 298.6,86.2 298.9,76.2 299.2,80.1 299.5,77.0 299.8,71.5 300.1,79.8 300.4,76.1 300.7,79.4 301.1,77.1 301.5,79.1 302.0,78.1 302.0,77.9 302.4,75.9 302.6,79.0 303.0,77.2 303.4,78.9 303.8,67.0 304.2,85.3 304.5,75.9 304.8,80.1 305.1,76.8 305.4,72.4 305.7,79.3 306.0,76.1 306.3,79.3 306.7,76.9 307.1,79.0 307.7,78.0 307.7,78.4 308.1,76.0 308.3,78.7 308.7,76.7 309.1,79.2 309.5,67.2 309.9,84.7 310.2,75.9 310.5,79.8 310.8,76.5 311.1,71.9 311.4,79.6 311.7,76.0 312.0,79.4 312.4,77.4 312.8,78.9 313.0,78.3 313.0,78.4 313.4,75.9 313.6,79.3 314.0,77.4 314.4,78.9 314.8,65.8 315.2,85.8 315.5,76.0 315.8,79.8 316.1,76.4 316.4,72.1 316.7,79.9 317.0,75.3 317.3,79.3 317.7,77.0 318.1,79.0 318.4,78.5 318.4,78.0 318.7,76.7 319.0,79.6 319.4,77.4 319.8,79.7 320.1,64.7 320.5,86.1 320.8,76.1 321.1,80.2 321.4,77.2 321.7,74.2 322.0,79.3 322.3,75.7 322.7,79.3 323.1,76.9 323.4,79.1 323.9,77.9 323.9,78.3 324.2,76.1 324.5,79.3 324.9,77.4 325.3,79.5 325.6,66.0 326.0,85.6 326.3,75.8 326.6,79.3 326.9,76.9 327.2,72.9 327.5,79.8 327.8,76.0 328.2,79.4 328.6,76.9 328.9,79.0 329.4,78.2 329.4,78.2 329.8,77.1 330.0,79.3 330.4,77.5 330.8,79.6 331.2,65.1 331.6,86.5 331.9,76.5 332.2,79.5 332.5,76.9 332.8,74.9 333.1,79.5 333.4,76.1 333.7,79.8 334.1,76.6 334.5,78.8 334.7,78.5 334.7,78.4 335.1,75.7 335.3,79.3 335.7,77.4 336.1,79.1 336.5,64.8 336.9,86.4 337.2,75.7 337.5,79.7 337.8,77.2 338.1,71.9 338.4,79.8 338.7,75.8 339.0,79.1 339.4,76.7 339.8,79.1 340.3,78.2 340.3,78.1 340.7,76.0 340.9,79.0 341.3,77.4 341.7,79.1 342.1,65.1 342.5,86.3 342.8,75.8 343.1,79.6 343.4,76.6 343.7,72.7 344.0,79.7 344.3,76.2 344.6,79.4 345.0,76.5 345.4,79.4 345.8,78.4 345.8,78.2 346.2,76.7 346.4,79.5 346.8,77.4 347.2,78.6 347.6,65.8 348.0,85.8 348.3,76.1 348.6,80.0 348.9,77.4 349.2,74.7 349.5,79.9 349.8,76.2 350.1,79.1 350.5,77.0 350.9,79.1 351.4,78.2 351.4,78.3 351.7,76.3 352.0,79.3 352.4,77.3 352.8,79.5 353.1,65.3 353.5,85.7 353.8,75.4 354.1,79.7 354.4,76.9 354.7,73.6 355.0,79.6 355.3,76.0 355.7,79.8 356.1,76.5 356.4,79.2 357.0,77.9 357.0,78.4 357.3,76.8 357.6,78.9 358.0,77.4 358.4,79.3 358.7,65.5 359.1,85.6 359.4,75.6 359.7,80.1 360.0,76.6 360.3,74.5 360.6,79.5 360.9,76.5 361.3,79.5 361.7,76.9 362.0,79.2 362.4,78.5 362.4,78.0 362.8,75.7 363.0,79.1 363.4,77.6 363.8,79.5 364.2,64.8 364.6,86.3 364.9,75.6 365.2,79.7 365.5,76.9 365.8,73.0 366.1,79.8 366.4,75.6 366.7,79.4 367.1,76.6 367.5,78.9 368.1,78.0 368.1,78.9 368.5,76.6 368.7,79.0 369.1,77.3 369.5,79.1 369.9,65.8 370.3,85.3 370.6,75.9 370.9,79.4 371.2,76.8 371.5,74.1 371.8,79.6 372.1,76.1 372.4,79.5 372.8,76.9 373.2,78.8 373.5,78.5 373.5,78.2 373.9,75.6 374.1,79.4 374.5,77.1 374.9,79.2 375.3,65.6 375.7,85.9 376.0,75.8 376.3,79.2 376.6,77.0 376.9,72.7 377.2,80.0 377.5,75.9 377.8,79.4 378.2,76.9 378.6,79.2 379.0,78.3 379.0,78.0 379.3,75.8 379.6,79.3 380.0,77.4 380.4,79.5 380.7,65.6 381.1,86.1 381.4,75.8 381.7,79.5 382.0,77.0 382.3,72.6 382.6,80.1 382.9,76.0 383.3,79.4 383.7,77.2 384.0,79.4 384.3,78.4 384.3,78.1 384.7,75.9 384.9,79.2 385.3,77.3 385.7,78.9 386.1,66.8 386.5,85.1 386.8,75.8 387.1,79.7 387.4,76.9 387.7,72.5 388.0,79.8 388.3,75.8 388.6,79.4 389.0,76.7 389.4,78.8 389.9,77.9 389.9,78.3 390.3,75.2 390.5,79.1 390.9,77.9 391.3,79.2 391.7,67.1 392.1,84.7 392.4,75.8 392.7,79.8 393.0,77.1 393.3,70.0 393.6,79.6 393.9,76.4 394.2,79.3 394.6,76.8 395.0,78.8 395.5,77.6 395.5,77.8 395.8,76.5 396.1,79.2 396.5,77.6 396.9,79.6 397.2,64.9 397.6,86.4 397.9,75.3 398.2,80.1 398.5,76.8 398.8,73.9 399.1,79.9 399.4,75.9 399.8,79.4 400.2,76.6 400.5,78.5 401.0,78.3 401.0,78.3 401.3,76.0 401.6,79.0 402.0,77.0 402.4,79.6 402.7,67.5 403.1,84.7 403.4,75.7 403.7,79.7 404.0,76.8 404.3,72.1 404.6,79.1 404.9,76.2 405.3,79.0 405.7,76.7 406.0,78.9 406.5,78.4 406.5,78.5 406.8,76.2 407.1,79.0 407.5,76.6 407.9,79.5 408.2,65.3 408.6,86.6 408.9,75.7 409.2,79.8 409.5,76.9 409.8,71.8 410.1,79.4 410.4,75.8 410.8,79.8 411.2,76.6 411.5,79.4 411.8,78.3 411.8,78.5 412.1,77.1 412.4,79.1 412.8,77.1 413.2,79.7 413.5,64.8 413.9,86.1 414.2,75.5 414.5,79.7 414.8,77.0 415.1,74.2 415.4,79.8 415.7,76.4 416.1,79.7 416.5,77.2 416.8,79.3 417.1,77.9 417.1,78.0 417.4,75.9 417.7,78.9 418.1,77.4 418.5,79.1 418.8,65.6 419.2,85.6 419.5,76.0 419.8,79.7 420.1,76.8 420.4,73.5 420.7,79.5 421.0,76.1 421.4,79.1 421.8,76.9 422.1,79.0 422.8,78.3 422.8,78.2 423.1,76.6 423.4,79.4 423.8,77.1 424.2,79.6 424.5,67.2 424.9,84.9 425.2,75.7 425.5,79.4 425.8,77.1 426.1,73.5 426.4,79.3 426.7,75.5 427.1,79.3 427.5,76.5 427.8,78.9 428.2,78.5 428.2,78.6 428.6,75.5 428.8,78.8 429.2,77.6 429.6,79.6 430.0,67.2 430.4,85.6 430.7,76.0 431.0,80.2 431.3,76.5 431.6,71.4 431.9,79.5 432.2,76.4 432.5,79.5 432.9,76.0 433.3,79.3 433.9,78.1 433.9,78.5 434.3,76.1 434.5,79.0 434.9,77.8 435.3,79.5 435.7,66.7 436.1,85.4 436.4,75.7 436.7,80.3 437.0,76.9 437.3,72.8 437.6,79.7 437.9,75.8 438.2,79.1 438.6,76.9 439.0,79.1 439.6,78.6 439.6,78.5 439.9,76.2 440.2,79.3 440.6,77.1 441.0,79.7 441.3,67.2 441.7,84.9 442.0,75.4 442.3,80.0 442.6,76.6 442.9,72.6 443.2,80.0 443.5,76.3 443.9,79.1 444.3,76.6 444.6,78.8 445.2,78.5 445.2,78.4 445.5,76.2 445.8,79.6 446.2,77.4 446.6,79.5 446.9,65.6 447.3,85.3 447.6,75.6 447.9,79.5 448.2,76.9 448.5,72.9 448.8,79.5 449.1,75.9 449.5,79.3 449.9,76.8 450.2,78.9 450.7,78.4 450.7,78.3 451.1,75.9 451.3,79.6 451.7,77.4 452.1,79.6 452.5,65.8 452.9,85.6 453.2,75.7 453.5,79.6 453.8,76.8 454.1,71.9 454.4,79.5 454.7,76.3 455.0,79.4 455.4,77.1 455.8,79.1 456.3,78.5 456.3,78.5 456.6,75.3 456.9,79.3 457.3,77.6 457.7,79.1 458.0,65.8 458.4,85.7 458.7,76.0 459.0,79.7 459.3,76.8 459.6,69.7 459.9,79.6 460.2,75.7 460.6,79.0 461.0,76.8 461.3,78.6 461.7,78.1 461.7,78.2 462.1,76.1 462.3,78.9 462.7,77.2 463.1,79.5 463.5,67.4 463.9,84.7 464.2,75.9 464.5,79.8 464.8,76.8 465.1,73.2 465.4,79.5 465.7,76.1 466.0,79.5 466.4,76.7 466.8,78.7 467.2,78.5 467.2,78.3 467.5,76.0 467.8,79.3 468.2,76.9 468.6,79.4 468.9,65.8 469.3,85.4 469.6,76.0 469.9,79.7 470.2,76.7 470.5,73.2 470.8,79.5 471.1,75.9 471.5,79.3 471.9,77.2 472.2,79.2 472.7,78.4 472.7,78.4 473.1,76.5 473.3,79.7 473.7,77.0 474.1,79.7 474.5,65.8 474.9,85.4 475.2,75.7 475.5,80.1 475.8,77.1 476.1,74.3 476.4,79.5 476.7,75.7 477.0,79.1 477.4,76.6 477.8,79.4 478.1,78.3 478.1,78.5 478.4,75.7 478.7,79.6 479.1,77.1 479.5,79.3 479.8,66.7 480.2,85.6 480.5,75.7 480.8,79.9 481.1,77.1 481.4,72.4 481.7,79.9 482.0,76.2 482.4,79.4 482.8,76.9 483.1,79.2 483.5,78.3 483.5,78.6 483.9,76.7 484.1,79.0 484.5,77.5 484.9,79.7 485.3,68.2 485.7,84.3 486.0,75.8 486.3,79.8 486.6,76.8 486.9,74.5 487.2,79.3 487.5,75.9 487.8,79.5 488.2,76.5 488.6,78.6 489.3,78.4 489.3,78.0 489.6,76.9 489.9,78.9 490.3,77.3 490.7,79.0 491.0,66.3 491.4,85.7 491.7,75.8 492.0,79.9 492.3,76.7 492.6,73.4 492.9,79.6 493.2,75.7 493.6,79.6 494.0,76.7 494.3,79.1 494.8,78.3 494.8,77.9 495.1,76.9 495.4,79.2 495.8,77.5 496.2,79.3 496.5,65.6 496.9,85.2 497.2,76.1 497.5,79.6 497.8,76.7 498.1,73.9 498.4,79.5 498.7,75.9 499.1,79.3 499.5,76.8 499.8,78.8 500.3,78.1 500.3,78.7 500.7,76.3 500.9,79.2 501.3,77.2 501.7,79.6 502.1,65.7 502.5,85.3 502.8,75.5 503.1,79.9 503.4,76.5 503.7,73.6 504.0,79.6 504.3,75.6 504.6,79.3 505.0,77.2 505.4,78.8 505.8,78.0 505.8,78.2 506.2,75.8 506.4,79.3 506.8,77.7 507.2,79.9 507.6,64.8 508.0,86.6 508.3,75.7 508.6,79.9 508.9,76.5 509.2,71.7 509.5,79.7 509.8,75.8 510.1,79.6 510.5,76.6 510.9,79.0 511.4,78.3 511.4,79.1 511.8,75.4 512.0,79.3 512.4,77.3 512.8,79.2 513.2,66.2 513.6,85.3 513.9,75.8 514.2,80.1 514.5,76.3 514.8,71.8 515.1,79.7 515.4,75.7 515.7,79.5 516.1,76.9 516.5,78.9 516.9,78.6 516.9,78.0 517.2,76.3 517.5,79.1 517.9,77.6 518.3,79.0 518.6,65.5 519.0,85.8 519.3,76.2 519.6,79.5 519.9,77.0 520.2,73.0 520.5,79.7 520.8,75.9 521.2,79.5 521.6,76.6 521.9,78.5 522.2,77.9 522.2,78.5 522.6,76.4 522.8,79.0 523.2,77.1 523.6,79.7 524.0,66.5 524.4,85.3 524.7,75.9 525.0,80.0 525.3,77.3 525.6,73.6 525.9,79.6 526.2,76.1 526.5,79.0 526.9,76.9 527.3,79.0 527.9,78.5" fill="none" stroke="#cc3646" stroke-width="0.5" stroke-linejoin="round"/><path d="M36.2,105.1 36.6,102.0 36.8,105.4 37.2,103.5 37.6,105.8 38.0,92.9 38.4,114.5 38.7,102.3 39.0,105.7 39.3,103.2 39.6,98.7 39.9,106.4 40.2,102.6 40.5,106.0 40.9,103.2 41.3,105.6 41.9,104.9 41.9,104.5 42.3,102.5 42.5,105.5 42.9,103.6 43.3,106.0 43.7,93.5 44.1,113.7 44.4,102.0 44.7,106.1 45.0,102.9 45.3,99.9 45.6,105.9 45.9,102.4 46.2,105.7 46.6,103.2 47.0,105.9 47.4,104.8 47.4,104.8 47.7,102.8 48.0,105.5 48.4,103.3 48.8,105.7 49.1,92.6 49.5,114.6 49.8,102.3 50.1,106.4 50.4,103.1 50.7,100.2 51.0,106.4 51.3,102.7 51.7,106.1 52.1,103.5 52.4,106.0 52.8,104.7 52.8,104.3 53.2,102.8 53.4,105.7 53.8,103.9 54.2,105.4 54.6,92.3 55.0,114.3 55.3,102.2 55.6,106.2 55.9,103.4 56.2,101.1 56.5,106.1 56.8,102.6 57.1,105.5 57.5,102.9 57.9,105.5 58.3,104.9 58.3,104.9 58.7,101.8 58.9,105.4 59.3,103.9 59.7,105.9 60.1,92.4 60.5,114.7 60.8,102.1 61.1,106.1 61.4,103.3 61.7,99.1 62.0,105.6 62.3,102.6 62.6,105.8 63.0,103.0 63.4,105.3 64.0,104.2 64.0,104.6 64.3,102.9 64.6,105.6 65.0,104.1 65.4,105.8 65.7,93.2 66.1,114.2 66.4,102.7 66.7,106.1 67.0,103.3 67.3,100.2 67.6,106.3 67.9,102.6 68.3,106.1 68.7,103.2 69.0,105.1 69.4,104.9 69.4,104.8 69.7,103.2 70.0,106.3 70.4,103.6 70.8,105.7 71.1,94.2 71.5,112.7 71.8,102.0 72.1,106.6 72.4,103.2 72.7,101.3 73.0,105.7 73.3,102.5 73.7,106.0 74.1,103.3 74.4,105.3 75.0,104.8 75.0,104.2 75.4,102.0 75.6,105.5 76.0,103.8 76.4,105.5 76.8,94.2 77.2,113.6 77.5,102.3 77.8,106.3 78.1,103.4 78.4,99.2 78.7,105.7 79.0,102.3 79.3,106.1 79.7,102.9 80.1,105.4 80.6,104.6 80.6,104.8 80.9,102.6 81.2,105.2 81.6,103.7 82.0,105.9 82.3,94.6 82.7,113.2 83.0,102.4 83.3,106.5 83.6,103.4 83.9,99.5 84.2,106.0 84.5,102.2 84.9,105.2 85.3,102.8 85.6,105.9 86.0,104.4 86.0,104.7 86.3,102.0 86.6,105.5 87.0,103.8 87.4,106.1 87.7,94.2 88.1,113.4 88.4,102.4 88.7,106.5 89.0,103.1 89.3,98.1 89.6,106.1 89.9,102.2 90.3,106.1 90.7,103.2 91.0,105.2 91.2,104.3 91.2,104.8 91.5,103.0 91.8,105.7 92.2,104.0 92.6,105.6 92.9,92.0 93.3,115.1 93.6,102.2 93.9,106.2 94.2,103.1 94.5,101.3 94.8,106.3 95.1,102.5 95.5,105.6 95.9,103.3 96.2,105.4 96.5,104.8 96.5,104.5 96.9,102.5 97.1,105.5 97.5,104.2 97.9,105.9 98.3,93.5 98.7,114.2 99.0,101.9 99.3,106.4 99.6,103.5 99.9,99.9 100.2,105.9 100.5,102.4 100.8,105.7 101.2,103.4 101.6,104.8 102.3,104.6 102.3,104.6 102.7,103.2 102.9,105.8 103.3,104.1 103.7,105.8 104.1,93.5 104.5,113.4 104.8,102.0 105.1,106.4 105.4,103.6 105.7,102.0 106.0,106.5 106.3,102.8 106.6,106.0 107.0,103.0 107.4,105.5 107.9,104.4 107.9,104.8 108.2,101.5 108.5,105.8 108.9,104.1 109.3,106.3 109.6,93.0 110.0,113.9 110.3,102.3 110.6,106.0 110.9,102.9 111.2,97.8 111.5,106.7 111.8,102.3 112.2,105.6 112.6,103.1 112.9,105.4 113.5,105.0 113.5,104.8 113.9,102.4 114.1,105.2 114.5,104.3 114.9,105.7 115.3,92.8 115.7,114.6 116.0,102.2 116.3,106.2 116.6,102.9 116.9,99.6 117.2,106.1 117.5,102.6 117.8,105.9 118.2,103.5 118.6,105.5 119.2,104.7 119.2,104.8 119.6,102.1 119.8,105.6 120.2,103.7 120.6,106.3 121.0,94.0 121.4,113.9 121.7,102.4 122.0,106.1 122.3,102.7 122.6,97.9 122.9,105.6 123.2,101.9 123.5,106.1 123.9,103.4 124.3,105.6 124.5,104.7 124.5,104.7 124.8,102.7 125.1,105.0 125.5,104.0 125.9,105.7 126.2,93.1 126.6,114.6 126.9,102.0 127.2,106.4 127.5,103.4 127.8,99.3 128.1,105.9 128.4,102.4 128.8,105.2 129.2,103.1 129.5,105.5 130.0,104.6 130.0,105.0 130.3,101.9 130.6,105.4 131.0,103.8 131.4,105.8 131.7,93.6 132.1,113.5 132.4,102.4 132.7,106.4 133.0,102.6 133.3,98.3 133.6,106.0 133.9,102.7 134.3,105.8 134.7,103.3 135.0,105.8 135.3,104.0 135.3,104.0 135.6,103.5 135.9,105.3 136.3,104.1 136.7,105.9 137.0,93.2 137.4,114.3 137.7,102.2 138.0,106.4 138.3,103.4 138.6,102.0 138.9,106.2 139.2,102.6 139.6,105.5 140.0,103.1 140.3,105.4 141.0,104.6 141.0,104.7 141.4,102.8 141.6,105.4 142.0,103.7 142.4,105.7 142.8,93.9 143.2,113.3 143.5,101.7 143.8,106.3 144.1,103.4 144.4,99.7 144.7,105.7 145.0,102.4 145.3,106.3 145.7,103.2 146.1,105.5 146.3,104.7 146.3,104.8 146.7,101.7 146.9,105.3 147.3,103.7 147.7,105.6 148.1,92.4 148.5,114.4 148.8,102.5 149.1,105.9 149.4,103.3 149.7,96.8 150.0,106.1 150.3,102.8 150.6,105.6 151.0,103.3 151.4,105.4 152.0,104.8 152.0,104.6 152.3,102.5 152.6,105.3 153.0,104.0 153.4,105.6 153.7,94.2 154.1,113.5 154.4,102.0 154.7,106.5 155.0,103.0 155.3,100.1 155.6,106.4 155.9,102.2 156.3,105.6 156.7,103.0 157.0,106.0 157.6,104.6 157.6,104.7 157.9,102.4 158.2,105.0 158.6,103.6 159.0,105.5 159.3,92.2 159.7,114.3 160.0,102.0 160.3,106.4 160.6,103.4 160.9,100.1 161.2,105.9 161.5,102.1 161.9,105.9 162.3,103.3 162.6,105.6 162.9,104.7 162.9,104.5 163.3,103.2 163.5,105.3 163.9,103.8 164.3,106.0 164.7,93.2 165.1,114.3 165.4,101.9 165.7,106.2 166.0,103.1 166.3,101.0 166.6,106.1 166.9,102.4 167.2,106.3 167.6,103.3 168.0,105.3 168.4,104.5 168.4,104.8 168.8,101.8 169.0,105.4 169.4,103.5 169.8,105.7 170.2,94.3 170.6,113.6 170.9,102.2 171.2,106.2 171.5,102.7 171.8,98.1 172.1,106.0 172.4,102.8 172.7,105.8 173.1,103.1 173.5,105.5 173.9,104.5 173.9,104.8 174.3,102.3 174.5,105.7 174.9,103.9 175.3,106.3 175.7,93.1 176.1,114.3 176.4,102.1 176.7,106.1 177.0,103.1 177.3,99.7 177.6,106.0 177.9,102.7 178.2,105.8 178.6,103.1 179.0,104.9 179.6,104.9 179.6,104.9 180.0,101.8 180.2,105.8 180.6,103.6 181.0,105.7 181.4,93.9 181.8,113.8 182.1,101.9 182.4,106.6 182.7,103.0 183.0,98.0 183.3,105.9 183.6,102.4 183.9,105.6 184.3,102.8 184.7,105.9 185.5,104.5 185.5,105.0 185.8,102.9 186.1,106.3 186.5,104.2 186.9,105.9 187.2,95.6 187.6,112.4 187.9,102.2 188.2,106.3 188.5,103.0 188.8,99.6 189.1,106.5 189.4,102.4 189.8,105.9 190.2,102.6 190.5,105.8 190.9,104.8 190.9,104.4 191.2,103.1 191.5,105.6 191.9,103.6 192.3,105.8 192.6,92.9 193.0,114.4 193.3,102.1 193.6,105.9 193.9,103.2 194.2,100.5 194.5,106.4 194.8,102.3 195.2,105.5 195.6,103.2 195.9,105.3 196.6,104.8 196.6,104.7 196.9,102.3 197.2,105.4 197.6,103.8 198.0,105.4 198.3,94.2 198.7,112.9 199.0,102.2 199.3,106.3 199.6,102.8 199.9,99.9 200.2,106.1 200.5,102.8 200.9,105.7 201.3,103.0 201.6,105.0 202.1,104.8 202.1,104.9 202.5,102.7 202.7,105.5 203.1,103.9 203.5,105.8 203.9,93.9 204.3,113.3 204.6,102.3 204.9,106.0 205.2,103.3 205.5,99.9 205.8,105.6 206.1,102.6 206.4,106.0 206.8,103.2 207.2,105.5 207.8,104.6 207.8,104.2 208.2,102.7 208.4,105.7 208.8,103.4 209.2,105.6 209.6,94.4 210.0,113.0 210.3,101.9 210.6,105.6 210.9,103.3 211.2,100.4 211.5,105.9 211.8,102.5 212.1,105.9 212.5,103.2 212.9,105.4 213.5,104.7 213.5,104.8 213.9,101.8 214.1,105.4 214.5,103.7 214.9,106.1 215.3,91.8 215.7,114.7 216.0,102.3 216.3,105.7 216.6,103.6 216.9,96.9 217.2,106.1 217.5,102.6 217.8,105.6 218.2,103.0 218.6,105.6 218.9,104.9 218.9,105.0 219.3,102.5 219.5,105.4 219.9,103.7 220.3,105.4 220.7,93.1 221.1,113.6 221.4,102.5 221.7,106.7 222.0,103.3 222.3,100.0 222.6,105.8 222.9,102.4 223.2,105.7 223.6,103.1 224.0,105.5 224.5,104.2 224.5,104.8 224.8,102.3 225.1,105.6 225.5,103.6 225.9,105.8 226.2,93.1 226.6,113.9 226.9,102.5 227.2,106.5 227.5,103.1 227.8,99.1 228.1,106.3 228.4,102.5 228.8,105.8 229.2,103.3 229.5,105.0 229.9,104.4 229.9,104.6 230.3,102.3 230.5,105.9 230.9,104.3 231.3,105.6 231.7,93.0 232.1,114.3 232.4,102.3 232.7,106.0 233.0,103.1 233.3,97.8 233.6,106.6 233.9,102.4 234.2,105.8 234.6,103.1 235.0,105.4 235.5,104.9 235.5,104.9 235.9,101.7 236.1,105.5 236.5,103.8 236.9,105.6 237.3,93.5 237.7,113.8 238.0,102.0 238.3,106.1 238.6,102.9 238.9,97.3 239.2,106.6 239.5,102.3 239.8,105.4 240.2,103.4 240.6,105.4 241.0,105.2 241.0,104.3 241.3,102.9 241.6,105.8 242.0,103.6 242.4,105.4 242.7,92.3 243.1,114.6 243.4,102.1 243.7,106.2 244.0,103.8 244.3,100.7 244.6,105.9 244.9,102.1 245.3,106.0 245.7,102.8 246.0,105.7 246.6,104.7 246.6,105.0 246.9,102.3 247.2,105.6 247.6,103.8 248.0,106.0 248.3,93.0 248.7,113.8 249.0,102.7 249.3,106.3 249.6,102.8 249.9,100.1 250.2,105.8 250.5,102.2 250.9,105.5 251.3,103.4 251.6,105.2 251.9,104.7 251.9,104.9 252.2,102.6 252.5,105.6 252.9,103.8 253.3,105.9 253.6,95.1 254.0,112.7 254.3,102.2 254.6,106.2 254.9,103.0 255.2,100.6 255.5,106.2 255.8,102.2 256.2,106.0 256.6,103.4 256.9,105.2 257.4,104.8 257.4,104.8 257.7,103.0 258.0,105.3 258.4,104.3 258.8,106.0 259.1,92.7 259.5,114.2 259.8,102.1 260.1,106.7 260.4,103.2 260.7,100.8 261.0,105.9 261.3,102.5 261.7,105.7 262.1,103.0 262.4,105.3 262.8,104.6 262.8,104.6 263.1,102.6 263.4,105.6 263.8,103.3 264.2,105.7 264.5,93.6 264.9,113.8 265.2,102.0 265.5,106.2 265.8,103.0 266.1,100.1 266.4,106.2 266.7,102.2 267.1,106.3 267.5,103.3 267.8,105.4 268.4,104.5 268.4,104.9 268.7,102.6 269.0,105.5 269.4,103.9 269.8,106.0 270.1,95.6 270.5,112.1 270.8,102.5 271.1,106.3 271.4,103.1 271.7,99.5 272.0,106.0 272.3,102.0 272.7,105.8 273.1,103.2 273.4,104.9 273.9,104.3 273.9,104.6 274.2,102.4 274.5,105.7 274.9,103.6 275.3,105.9 275.6,93.7 276.0,114.6 276.3,102.3 276.6,106.1 276.9,103.0 277.2,98.4 277.5,106.3 277.8,102.4 278.2,105.8 278.6,103.4 278.9,105.5 279.6,104.8 279.6,104.7 280.0,102.4 280.2,105.7 280.6,103.7 281.0,105.9 281.4,93.9 281.8,113.4 282.1,102.3 282.4,106.1 282.7,103.6 283.0,97.5 283.3,106.0 283.6,102.0 283.9,105.5 284.3,103.2 284.7,105.2 284.9,104.6 284.9,104.7 285.3,103.4 285.5,105.4 285.9,103.5 286.3,105.6 286.7,93.3 287.1,114.4 287.4,102.6 287.7,106.1 288.0,103.5 288.3,101.0 288.6,105.9 288.9,102.4 289.2,106.2 289.6,103.3 290.0,105.7 290.5,104.6 290.5,105.0 290.8,102.3 291.1,105.5 291.5,104.3 291.9,105.8 292.2,92.5 292.6,115.2 292.9,101.8 293.2,105.7 293.5,102.8 293.8,98.1 294.1,106.3 294.4,102.3 294.8,106.0 295.2,102.9 295.5,105.2 296.0,104.5 296.0,104.8 296.3,102.5 296.6,105.4 297.0,103.7 297.4,105.5 297.7,94.3 298.1,113.1 298.4,102.3 298.7,105.8 299.0,103.1 299.3,100.0 299.6,106.2 299.9,102.6 300.3,106.0 300.7,103.2 301.0,105.4 301.5,104.6 301.5,105.0 301.8,101.6 302.1,105.2 302.5,103.5 302.9,105.6 303.2,92.7 303.6,114.3 303.9,101.7 304.2,106.2 304.5,103.4 304.8,97.9 305.1,106.4 305.4,102.4 305.8,105.7 306.2,103.1 306.5,105.1 307.2,104.5 307.2,104.8 307.5,102.0 307.8,105.7 308.2,103.3 308.6,105.9 308.9,92.3 309.3,115.0 309.6,102.2 309.9,105.8 310.2,103.4 310.5,98.5 310.8,105.3 311.1,102.2 311.5,105.9 311.9,103.6 312.2,105.2 312.8,104.7 312.8,104.6 313.2,102.7 313.4,105.4 313.8,104.0 314.2,105.6 314.6,93.1 315.0,114.5 315.3,102.5 315.6,106.2 315.9,103.2 316.2,100.2 316.5,106.0 316.8,102.7 317.1,105.8 317.5,103.7 317.9,106.1 318.6,104.6 318.6,104.8 318.9,102.2 319.2,105.4 319.6,103.8 320.0,106.3 320.3,94.9 320.7,113.1 321.0,102.1 321.3,106.2 321.6,103.0 321.9,98.5 322.2,105.8 322.5,102.6 322.9,105.9 323.3,103.3 323.6,105.1 324.2,104.4 324.2,104.5 324.5,102.3 324.8,105.7 325.2,103.7 325.6,105.7 325.9,94.2 326.3,113.9 326.6,102.1 326.9,106.3 327.2,102.8 327.5,98.8 327.8,106.4 328.1,102.3 328.5,105.9 328.9,102.5 329.2,105.7 329.8,104.8 329.8,104.5 330.2,102.3 330.4,105.6 330.8,104.0 331.2,105.8 331.6,92.4 332.0,114.7 332.3,101.9 332.6,106.7 332.9,103.3 333.2,99.2 333.5,106.0 333.8,102.7 334.1,105.9 334.5,103.7 334.9,105.0 335.4,105.1 335.4,104.4 335.7,101.5 336.0,105.5 336.4,103.4 336.8,105.3 337.1,92.5 337.5,114.9 337.8,102.1 338.1,106.3 338.4,104.1 338.7,97.9 339.0,105.9 339.3,102.4 339.7,105.9 340.1,103.1 340.4,105.6 340.9,104.8 340.9,104.5 341.2,102.3 341.5,105.5 341.9,103.7 342.3,105.9 342.6,93.2 343.0,113.9 343.3,102.8 343.6,106.3 343.9,103.5 344.2,99.6 344.5,106.3 344.8,102.7 345.2,105.9 345.6,103.0 345.9,105.7 346.5,104.5 346.5,104.6 346.9,102.8 347.1,105.8 347.5,104.1 347.9,105.9 348.3,95.0 348.7,112.5 349.0,102.0 349.3,106.0 349.6,103.0 349.9,99.8 350.2,105.8 350.5,102.4 350.8,106.1 351.2,102.6 351.6,105.2 351.9,104.4 351.9,105.3 352.2,102.6 352.5,105.6 352.9,103.8 353.3,105.7 353.6,94.6 354.0,112.9 354.3,101.7 354.6,105.9 354.9,103.1 355.2,100.4 355.5,106.3 355.8,102.3 356.2,106.3 356.6,103.2 356.9,105.8 357.4,104.8 357.4,104.5 357.7,102.1 358.0,105.4 358.4,103.3 358.8,105.9 359.1,93.9 359.5,113.3 359.8,102.3 360.1,106.1 360.4,102.7 360.7,98.4 361.0,106.1 361.3,102.6 361.7,105.9 362.1,103.9 362.4,105.5 362.8,104.5 362.8,104.6 363.2,102.6 363.4,105.4 363.8,103.7 364.2,105.9 364.6,92.2 365.0,115.1 365.3,102.4 365.6,106.1 365.9,102.9 366.2,100.4 366.5,105.5 366.8,102.6 367.1,105.9 367.5,103.3 367.9,105.1 368.1,104.6 368.1,104.6 368.5,103.1 368.7,105.4 369.1,104.1 369.5,106.4 369.9,94.6 370.3,113.0 370.6,102.1 370.9,106.6 371.2,103.3 371.5,101.2 371.8,106.1 372.1,102.3 372.4,106.2 372.8,103.1 373.2,105.4 373.7,104.2 373.7,104.5 374.0,102.5 374.3,105.2 374.7,103.9 375.1,105.6 375.4,92.8 375.8,114.7 376.1,102.7 376.4,106.3 376.7,103.3 377.0,100.0 377.3,105.8 377.6,102.3 378.0,105.9 378.4,103.5 378.7,105.6 379.5,104.6 379.5,105.1 379.8,103.3 380.1,105.5 380.5,103.5 380.9,105.7 381.2,94.2 381.6,113.6 381.9,102.8 382.2,106.2 382.5,103.5 382.8,101.5 383.1,105.9 383.4,102.3 383.8,105.8 384.2,102.9 384.5,105.1 385.2,104.8 385.2,104.5 385.5,102.8 385.8,105.9 386.2,103.5 386.6,105.8 386.9,93.1 387.3,113.8 387.6,102.6 387.9,106.5 388.2,103.3 388.5,100.0 388.8,105.9 389.1,102.5 389.5,106.2 389.9,103.1 390.2,105.5 390.9,104.5 390.9,104.5 391.2,103.0 391.5,106.0 391.9,103.7 392.3,105.6 392.6,92.1 393.0,115.3 393.3,101.8 393.6,106.2 393.9,103.5 394.2,100.8 394.5,105.9 394.8,102.6 395.2,105.5 395.6,103.7 395.9,105.5 396.5,104.6 396.5,104.4 396.9,102.7 397.1,105.2 397.5,104.1 397.9,105.5 398.3,93.2 398.7,113.7 399.0,102.4 399.3,106.2 399.6,103.6 399.9,100.0 400.2,106.0 400.5,102.4 400.8,105.7 401.2,103.5 401.6,105.7 402.0,105.0 402.0,104.4 402.4,102.7 402.6,105.4 403.0,103.9 403.4,106.1 403.8,93.5 404.2,114.0 404.5,102.0 404.8,106.3 405.1,103.2 405.4,101.1 405.7,105.6 406.0,102.4 406.3,105.9 406.7,103.3 407.1,105.4 407.4,104.5 407.4,105.0 407.7,102.8 408.0,105.3 408.4,104.0 408.8,105.9 409.1,92.4 409.5,115.0 409.8,102.1 410.1,106.0 410.4,103.2 410.7,99.1 411.0,106.0 411.3,102.5 411.7,105.7 412.1,103.0 412.4,105.3 412.9,104.6 412.9,104.1 413.2,102.9 413.5,105.6 413.9,103.6 414.3,105.7 414.6,92.7 415.0,114.6 415.3,101.9 415.6,106.2 415.9,102.4 416.2,100.1 416.5,106.2 416.8,102.5 417.2,105.9 417.6,103.1 417.9,105.3 418.5,105.4 418.5,104.8 418.8,103.3 419.1,105.6 419.5,103.2 419.9,105.7 420.2,92.5 420.6,115.1 420.9,102.0 421.2,106.4 421.5,102.7 421.8,101.4 422.1,106.1 422.4,102.2 422.8,105.5 423.2,102.8 423.5,105.3 424.0,105.1 424.0,104.5 424.4,102.3 424.6,104.9 425.0,103.7 425.4,105.7 425.8,93.0 426.2,114.2 426.5,102.3 426.8,106.0 427.1,103.4 427.4,98.7 427.7,106.2 428.0,102.4 428.3,106.0 428.7,103.3 429.1,105.2 429.6,104.7 429.6,104.6 430.0,102.4 430.2,105.8 430.6,104.1 431.0,106.1 431.4,93.3 431.8,113.8 432.1,102.4 432.4,106.4 432.7,102.7 433.0,99.9 433.3,106.3 433.6,102.1 433.9,106.1 434.3,103.1 434.7,105.4 435.0,104.4 435.0,104.4 435.3,102.6 435.6,105.4 436.0,103.7 436.4,105.6 436.7,93.7 437.1,113.9 437.4,101.8 437.7,105.9 438.0,103.2 438.3,99.6 438.6,105.7 438.9,102.5 439.3,105.5 439.7,103.2 440.0,105.6 440.4,104.8 440.4,104.8 440.7,102.3 441.0,105.9 441.4,104.0 441.8,106.3 442.1,93.6 442.5,114.1 442.8,101.4 443.1,106.1 443.4,103.7 443.7,99.7 444.0,105.9 444.3,102.6 444.7,105.8 445.1,103.3 445.4,105.2 445.8,104.8 445.8,104.5 446.2,102.5 446.4,105.5 446.8,103.4 447.2,105.7 447.6,93.1 448.0,114.2 448.3,102.4 448.6,106.1 448.9,103.1 449.2,99.5 449.5,105.8 449.8,102.3 450.1,105.7 450.5,103.1 450.9,105.2 451.6,105.1 451.6,104.6 451.9,103.4 452.2,105.1 452.6,104.4 453.0,105.8 453.3,93.6 453.7,113.9 454.0,101.8 454.3,106.2 454.6,103.2 454.9,101.7 455.2,105.7 455.5,102.5 455.9,106.1 456.3,103.3 456.6,105.3 457.2,104.5 457.2,105.1 457.6,102.6 457.8,105.9 458.2,103.7 458.6,105.7 459.0,93.6 459.4,113.2 459.7,101.9 460.0,106.1 460.3,103.4 460.6,99.2 460.9,105.9 461.2,102.6 461.5,106.2 461.9,103.5 462.3,105.0 462.5,105.1 462.5,104.9 462.8,102.1 463.1,105.9 463.5,103.8 463.9,105.9 464.2,94.5 464.6,112.5 464.9,101.9 465.2,106.5 465.5,103.0 465.8,100.3 466.1,105.8 466.4,102.0 466.8,106.0 467.2,103.5 467.5,105.8 467.9,104.6 467.9,104.7 468.3,103.0 468.5,105.5 468.9,104.0 469.3,105.7 469.7,93.1 470.1,114.4 470.4,101.9 470.7,106.4 471.0,103.2 471.3,99.3 471.6,105.9 471.9,102.2 472.2,105.9 472.6,103.3 473.0,105.8 473.4,104.5 473.4,105.1 473.8,102.8 474.0,105.7 474.4,103.3 474.8,105.9 475.2,92.8 475.6,114.3 475.9,101.7 476.2,106.0 476.5,103.5 476.8,101.6 477.1,106.0 477.4,102.4 477.7,105.6 478.1,103.6 478.5,105.4 479.2,105.0 479.2,104.5 479.5,101.9 479.8,105.7 480.2,104.0 480.6,106.0 480.9,95.1 481.3,113.0 481.6,102.3 481.9,106.4 482.2,103.2 482.5,98.2 482.8,106.5 483.1,102.3 483.5,105.2 483.9,103.2 484.2,105.5 484.5,105.2 484.5,105.2 484.8,102.4 485.1,105.9 485.5,103.9 485.9,106.0 486.2,94.3 486.6,113.0 486.9,102.0 487.2,106.2 487.5,103.0 487.8,99.9 488.1,105.9 488.4,102.3 488.8,105.2 489.2,102.9 489.5,106.0 489.9,104.6 489.9,104.6 490.3,102.6 490.5,105.5 490.9,104.0 491.3,105.5 491.7,93.5 492.1,114.1 492.4,102.0 492.7,106.8 493.0,103.2 493.3,100.1 493.6,105.8 493.9,102.6 494.2,105.4 494.6,103.3 495.0,105.9 495.2,104.8 495.2,104.5 495.6,102.1 495.8,105.6 496.2,104.3 496.6,105.7 497.0,93.9 497.4,113.1 497.7,102.4 498.0,106.4 498.3,103.3 498.6,99.2 498.9,106.2 499.2,102.6 499.5,105.7 499.9,102.8 500.3,105.8 500.9,104.5 500.9,104.6 501.2,103.2 501.5,105.9 501.9,103.6 502.3,105.7 502.6,91.9 503.0,114.7 503.3,102.2 503.6,106.1 503.9,102.7 504.2,101.2 504.5,105.9 504.8,102.3 505.2,105.5 505.6,103.4 505.9,105.5 506.6,104.8 506.6,104.8 506.9,101.9 507.2,105.5 507.6,104.0 508.0,105.7 508.3,92.8 508.7,114.5 509.0,102.2 509.3,106.0 509.6,103.0 509.9,97.8 510.2,105.7 510.5,102.8 510.9,106.0 511.3,102.9 511.6,105.7 512.1,104.6 512.1,104.8 512.4,102.6 512.7,105.8 513.1,103.2 513.5,105.7 513.8,93.7 514.2,113.5 514.5,101.8 514.8,106.1 515.1,103.1 515.4,98.7 515.7,105.8 516.0,102.6 516.4,105.6 516.8,103.1 517.1,105.4 517.7,104.8 517.7,104.7 518.0,102.5 518.3,105.6 518.7,103.8 519.1,106.0 519.4,92.6 519.8,114.4 520.1,101.6 520.4,106.3 520.7,103.1 521.0,99.3 521.3,106.2 521.6,102.8 522.0,105.5 522.4,103.0 522.7,105.2 523.3,104.5" fill="none" stroke="#4460bc" stroke-width="0.5" stroke-linejoin="round"/><path d="M37.5,136.4 38.2,133.8 38.9,135.4 39.6,136.7 40.3,138.9 41.0,141.3 41.7,142.7 42.4,143.4 43.1,141.1 43.8,139.1 44.5,135.6 45.2,134.7 45.9,135.6 46.6,137.1 47.3,139.0 48.0,141.5 48.7,143.5 49.4,143.1 50.1,141.2 50.8,137.7 51.5,135.5 52.2,135.4 52.9,136.0 53.6,137.3 54.3,139.4 55.0,141.9 55.7,143.9 56.4,143.1 57.1,140.9 57.8,138.1 58.5,135.2 59.2,134.8 59.9,136.0 60.6,137.4 61.3,139.3 62.0,141.7 62.7,142.5 63.4,143.8 64.1,141.3 64.8,137.9 65.5,135.9 66.2,134.9 66.9,135.1 67.6,136.3 68.3,138.6 69.0,140.8 69.7,143.4 70.4,144.1 71.1,142.8 71.8,140.2 72.5,136.7 73.2,134.5 73.9,134.7 74.6,135.8 75.3,137.3 76.0,139.3 76.7,141.9 77.4,142.9 78.1,144.1 78.8,142.2 79.5,138.5 80.2,136.1 80.9,134.3 81.6,134.9 82.3,135.3 83.0,137.4 83.7,140.0 84.4,142.4 85.1,143.0 85.8,143.6 86.5,142.0 87.2,138.7 87.9,136.7 88.6,134.4 89.3,135.0 90.0,135.6 90.7,138.0 91.4,139.5 92.1,141.4 92.8,142.6 93.5,144.0 94.2,142.4 94.9,139.8 95.6,137.3 96.3,135.5 97.0,135.0 97.7,135.8 98.4,137.1 99.1,139.2 99.8,140.0 100.5,141.9 101.2,142.8 101.9,142.4 102.6,140.6 103.3,137.7 104.0,135.8 104.7,135.8 105.4,136.7 106.1,137.4 106.8,138.3 107.5,139.4 108.2,140.9 108.9,141.9 109.6,142.4 110.3,140.8 111.0,139.2 111.7,137.3 112.4,136.7 113.1,136.7 113.8,138.1 114.5,138.5 115.2,139.3 115.9,139.2 116.6,140.9 117.3,141.5 118.0,141.4 118.7,139.2 119.4,138.5 120.1,137.4 120.8,136.5 121.5,137.1 122.2,137.8 122.9,138.6 123.6,139.5 124.3,141.0 125.0,141.2 125.7,141.6 126.4,140.3 127.1,139.1 127.8,137.5 128.5,137.3 129.2,136.9 129.9,137.8 130.6,138.2 131.3,139.7 132.0,140.5 132.7,141.2 133.4,141.4 134.1,140.6 134.8,138.5 135.5,136.9 136.2,136.8 136.9,137.8 137.6,137.6 138.3,138.3 139.0,139.1 139.7,140.3 140.4,141.9 141.1,141.9 141.8,140.3 142.5,138.3 143.2,136.8 143.9,136.4 144.6,136.5 145.3,137.6 146.0,138.8 146.7,139.8 147.4,141.4 148.1,142.0 148.8,141.3 149.5,139.6 150.2,137.1 150.9,136.1 151.6,136.6 152.3,137.4 153.0,138.8 153.7,139.0 154.4,141.5 155.1,142.2 155.8,142.0 156.5,140.2 157.2,137.9 157.9,136.5 158.6,136.2 159.3,137.5 160.0,138.0 160.7,139.4 161.4,141.3 162.1,142.1 162.8,142.7 163.5,140.4 164.2,138.4 164.9,136.2 165.6,136.1 166.3,137.1 167.0,138.3 167.7,139.3 168.4,141.1 169.1,142.2 169.8,142.3 170.5,139.7 171.2,137.9 171.9,136.1 172.6,136.2 173.3,137.1 174.0,138.0 174.7,139.6 175.4,141.4 176.1,142.1 176.8,141.6 177.5,139.9 178.2,137.4 178.9,136.4 179.6,136.7 180.3,137.1 181.0,138.8 181.7,139.3 182.4,141.5 183.1,142.0 183.8,141.4 184.5,138.9 185.2,136.7 185.9,136.5 186.6,136.7 187.3,137.7 188.0,138.8 188.7,140.2 189.4,141.6 190.1,141.9 190.8,140.8 191.5,137.9 192.2,136.6 192.9,135.8 193.6,137.1 194.3,138.1 195.0,138.4 195.7,140.7 196.4,142.1 197.1,142.1 197.8,141.0 198.5,138.2 199.2,135.8 199.9,135.6 200.6,136.3 201.3,137.5 202.0,138.6 202.7,141.1 203.4,142.8 204.1,142.6 204.8,141.2 205.5,138.5 206.2,135.9 206.9,135.6 207.6,135.6 208.3,136.6 209.0,138.4 209.7,140.8 210.4,143.6 211.1,143.6 211.8,142.5 212.5,139.7 213.2,136.5 213.9,135.4 214.6,134.5 215.3,136.0 216.0,137.7 216.7,140.2 217.4,142.1 218.1,144.6 218.8,143.8 219.5,141.5 220.2,137.8 220.9,135.0 221.6,134.2 222.3,134.8 223.0,136.3 223.7,138.6 224.4,141.0 225.1,143.2 225.8,144.7 226.5,143.9 227.2,141.0 227.9,137.8 228.6,135.3 229.3,134.0 230.0,134.4 230.7,136.4 231.4,138.9 232.1,140.8 232.8,143.1 233.5,144.4 234.2,144.2 234.9,140.7 235.6,138.1 236.3,135.7 237.0,133.9 237.7,135.0 238.4,136.1 239.1,137.7 239.8,140.2 240.5,141.9 241.2,143.7 241.9,144.4 242.6,141.8 243.3,139.6 244.0,136.2 244.7,135.0 245.4,134.7 246.1,135.0 246.8,137.1 247.5,139.2 248.2,140.9 248.9,142.6 249.6,143.8 250.3,142.5 251.0,139.8 251.7,137.3 252.4,135.8 253.1,134.8 253.8,135.7 254.5,137.1 255.2,138.2 255.9,139.7 256.6,141.6 257.3,143.2 258.0,143.4 258.7,141.6 259.4,139.0 260.1,136.3 260.8,135.3 261.5,135.1 262.2,136.1 262.9,137.2 263.6,138.7 264.3,140.9 265.0,142.4 265.7,143.0 266.4,142.5 267.1,139.9 267.8,138.1 268.5,135.8 269.2,134.9 269.9,136.0 270.6,137.2 271.3,138.5 272.0,140.9 272.7,142.2 273.4,142.5 274.1,143.0 274.8,140.3 275.5,138.1 276.2,135.4 276.9,134.6 277.6,136.0 278.3,136.5 279.0,138.6 279.7,141.1 280.4,142.6 281.1,143.5 281.8,142.8 282.5,140.6 283.2,137.1 283.9,135.5 284.6,135.0 285.3,136.4 286.0,137.0 286.7,138.7 287.4,141.4 288.1,142.9 288.8,143.6 289.5,142.2 290.2,139.6 290.9,136.3 291.6,135.0 292.3,134.4 293.0,136.1 293.7,138.5 294.4,139.8 295.1,141.9 295.8,142.9 296.5,142.9 297.2,140.5 297.9,137.1 298.6,135.8 299.3,135.4 300.0,136.5 300.7,137.5 301.4,139.9 302.1,141.4 302.8,142.7 303.5,142.4 304.2,140.6 304.9,138.2 305.6,136.0 306.3,136.1 307.0,136.8 307.7,138.2 308.4,139.4 309.1,140.8 309.8,141.5 310.5,142.2 311.2,140.6 311.9,138.1 312.6,136.7 313.3,136.3 314.0,137.1 314.7,137.9 315.4,139.6 316.1,140.6 316.8,141.5 317.5,141.1 318.2,139.8 318.9,138.3 319.6,137.0 320.3,136.8 321.0,138.2 321.7,138.9 322.4,139.6 323.1,140.7 323.8,141.7 324.5,141.1 325.2,139.6 325.9,137.5 326.6,137.5 327.3,137.5 328.0,138.7 328.7,138.0 329.4,139.6 330.1,140.8 330.8,141.1 331.5,140.8 332.2,139.2 332.9,137.7 333.6,136.9 334.3,137.5 335.0,138.5 335.7,139.1 336.4,139.6 337.1,140.8 337.8,141.4 338.5,140.9 339.2,138.5 339.9,136.9 340.6,136.9 341.3,137.1 342.0,137.9 342.7,138.8 343.4,140.0 344.1,140.8 344.8,141.9 345.5,140.2 346.2,138.9 346.9,136.6 347.6,136.1 348.3,137.2 349.0,137.6 349.7,138.4 350.4,139.8 351.1,141.6 351.8,142.1 352.5,141.3 353.2,139.5 353.9,136.9 354.6,136.0 355.3,136.2 356.0,137.6 356.7,138.6 357.4,140.0 358.1,141.2 358.8,142.3 359.5,142.4 360.2,140.2 360.9,138.1 361.6,136.4 362.3,135.6 363.0,136.5 363.7,137.5 364.4,139.4 365.1,141.2 365.8,142.0 366.5,142.7 367.2,141.1 367.9,139.6 368.6,137.2 369.3,135.6 370.0,136.1 370.7,136.2 371.4,137.7 372.1,139.1 372.8,140.3 373.5,142.4 374.2,143.0 374.9,141.2 375.6,139.1 376.3,137.4 377.0,136.0 377.7,135.6 378.4,136.6 379.1,137.6 379.8,138.9 380.5,140.6 381.2,142.0 381.9,143.1 382.6,142.3 383.3,140.2 384.0,138.1 384.7,136.7 385.4,136.2 386.1,136.1 386.8,137.7 387.5,138.5 388.2,140.3 388.9,141.3 389.6,142.5 390.3,142.3 391.0,141.3 391.7,138.7 392.4,136.7 393.1,136.0 393.8,136.0 394.5,137.0 395.2,138.0 395.9,139.3 396.6,141.3 397.3,142.0 398.0,142.7 398.7,141.7 399.4,139.9 400.1,137.1 400.8,135.8 401.5,135.6 402.2,136.4 402.9,137.2 403.6,138.4 404.3,139.9 405.0,142.0 405.7,143.4 406.4,142.9 407.1,141.0 407.8,138.5 408.5,135.9 409.2,135.0 409.9,135.3 410.6,136.4 411.3,137.8 412.0,139.3 412.7,142.1 413.4,143.8 414.1,143.5 414.8,142.2 415.5,139.3 416.2,136.6 416.9,134.3 417.6,135.1 418.3,135.4 419.0,137.6 419.7,139.4 420.4,141.7 421.1,143.7 421.8,144.5 422.5,142.4 423.2,139.4 423.9,136.2 424.6,133.8 425.3,134.5 426.0,135.4 426.7,137.2 427.4,140.0 428.1,142.0 428.8,144.2 429.5,144.9 430.2,142.6 430.9,138.2 431.6,134.6 432.3,133.6 433.0,134.4 433.7,135.5 434.4,137.9 435.1,140.8 435.8,143.0 436.5,144.7 437.2,144.0 437.9,140.8 438.6,137.1 439.3,134.1 440.0,133.8 440.7,134.4 441.4,136.9 442.1,139.8 442.8,141.5 443.5,142.9 444.2,143.0 444.9,140.2 445.6,135.8 446.3,131.5 447.0,128.6 447.7,128.6 448.4,131.0 449.1,133.4 449.8,137.6 450.5,139.8 451.2,139.9 451.9,136.5 452.6,131.3 453.3,126.7 454.0,124.3 454.7,125.5 455.4,128.2 456.1,132.1 456.8,136.3 457.5,138.4 458.2,138.2 458.9,134.9 459.6,130.1 460.3,126.5 461.0,124.7 461.7,126.4 462.4,128.9 463.1,132.3 463.8,135.5 464.5,138.2 465.2,137.7 465.9,133.5 466.6,129.8 467.3,126.7 468.0,125.5 468.7,127.0 469.4,130.4 470.1,133.4 470.8,136.0 471.5,138.0 472.2,136.8 472.9,133.0 473.6,128.0 474.3,126.2 475.0,125.6 475.7,127.6 476.4,130.3 477.1,134.0 477.8,136.8 478.5,137.9 479.2,136.6 479.9,132.9 480.6,128.3 481.3,126.6 482.0,126.5 482.7,128.3 483.4,131.9 484.1,134.6 484.8,138.1 485.5,138.7 486.2,137.3 486.9,133.1 487.6,129.6 488.3,128.4 489.0,128.6 489.7,130.5 490.4,133.1 491.1,136.4 491.8,138.4 492.5,139.5 493.2,138.4 493.9,134.8 494.6,131.4 495.3,129.7 496.0,129.7 496.7,131.2 497.4,134.0 498.1,136.4 498.8,139.0 499.5,140.0 500.2,139.0 500.9,135.9 501.6,132.8 502.3,129.9 503.0,129.8 503.7,131.2 504.4,133.3 505.1,135.3 505.8,137.1 506.5,139.3 507.2,139.2 507.9,138.0 508.6,134.7 509.3,132.2 510.0,131.4 510.7,131.1 511.4,132.7 512.1,133.7 512.8,135.4 513.5,137.8 514.2,139.3 514.9,138.5 515.6,136.9 516.3,133.8" fill="none" stroke="#3c9064" stroke-width="0.6" stroke-linejoin="round"/><path d="M37.5,158.2 38.2,159.7 38.9,159.4 39.6,158.8 40.3,159.8 41.0,163.5 41.7,164.4 42.4,161.6 43.1,158.7 43.8,157.9 44.5,160.3 45.2,159.3 45.9,159.1 46.6,161.4 47.3,162.8 48.0,163.8 48.7,160.7 49.4,158.6 50.1,159.2 50.8,159.7 51.5,158.4 52.2,159.0 52.9,161.2 53.6,163.8 54.3,163.3 55.0,160.3 55.7,158.8 56.4,158.6 57.1,159.4 57.8,158.6 58.5,159.8 59.2,159.1 59.9,162.9 60.6,165.2 61.3,162.2 62.0,159.4 62.7,157.7 63.4,159.6 64.1,159.0 64.8,159.2 65.5,159.4 66.2,161.0 66.9,164.3 67.6,163.3 68.3,161.0 69.0,158.8 69.7,158.1 70.4,159.4 71.1,160.0 71.8,158.9 72.5,159.2 73.2,161.4 73.9,163.7 74.6,164.3 75.3,161.4 76.0,159.1 76.7,158.2 77.4,158.7 78.1,160.0 78.8,158.7 79.5,159.2 80.2,161.7 80.9,163.0 81.6,164.2 82.3,161.6 83.0,159.3 83.7,157.5 84.4,158.6 85.1,159.3 85.8,159.6 86.5,160.6 87.2,162.7 87.9,166.7 88.6,167.3 89.3,164.6 90.0,160.6 90.7,157.8 91.4,158.4 92.1,160.0 92.8,159.8 93.5,158.8 94.2,160.1 94.9,161.1 95.6,163.4 96.3,163.6 97.0,161.6 97.7,159.2 98.4,159.1 99.1,158.8 99.8,159.1 100.5,159.0 101.2,159.0 101.9,159.7 102.6,163.1 103.3,164.6 104.0,162.9 104.7,160.2 105.4,157.7 106.1,157.9 106.8,160.1 107.5,159.8 108.2,158.3 108.9,160.4 109.6,162.9 110.3,164.5 111.0,162.9 111.7,159.6 112.4,158.3 113.1,158.8 113.8,159.5 114.5,158.4 115.2,157.8 115.9,160.5 116.6,162.8 117.3,164.2 118.0,162.1 118.7,159.0 119.4,158.1 120.1,159.3 120.8,160.0 121.5,158.7 122.2,160.3 122.9,162.8 123.6,164.4 124.3,163.4 125.0,159.3 125.7,158.6 126.4,158.6 127.1,159.2 127.8,158.6 128.5,159.8 129.2,161.8 129.9,164.3 130.6,162.4 131.3,160.1 132.0,159.0 132.7,159.1 133.4,160.3 134.1,159.3 134.8,160.8 135.5,162.7 136.2,163.6 136.9,163.0 137.6,159.1 138.3,157.8 139.0,159.0 139.7,158.7 140.4,158.9 141.1,160.1 141.8,164.1 142.5,164.3 143.2,160.4 143.9,157.8 144.6,158.3 145.3,158.7 146.0,159.2 146.7,159.3 147.4,161.4 148.1,163.9 148.8,163.3 149.5,160.4 150.2,158.9 150.9,159.1 151.6,159.9 152.3,158.7 153.0,160.3 153.7,162.6 154.4,164.5 155.1,161.2 155.8,158.3 156.5,158.4 157.2,159.7 157.9,158.8 158.6,159.6 159.3,163.3 160.0,167.0 160.7,165.4 161.4,161.4 162.1,158.3 162.8,159.4 163.5,159.8 164.2,158.6 164.9,158.4 165.6,161.8 166.3,164.7 167.0,163.3 167.7,160.4 168.4,158.0 169.1,158.3 169.8,159.9 170.5,159.2 171.2,159.7 171.9,161.2 172.6,164.2 173.3,163.0 174.0,160.6 174.7,158.0 175.4,158.5 176.1,159.3 176.8,159.8 177.5,159.2 178.2,160.8 178.9,163.3 179.6,163.5 180.3,162.0 181.0,157.9 181.7,157.9 182.4,159.6 183.1,160.0 183.8,158.9 184.5,160.2 185.2,162.7 185.9,164.7 186.6,163.3 187.3,161.1 188.0,158.5 188.7,159.2 189.4,159.0 190.1,159.8 190.8,158.4 191.5,159.4 192.2,162.8 192.9,163.9 193.6,163.5 194.3,160.0 195.0,159.1 195.7,158.5 196.4,158.9 197.1,159.6 197.8,159.4 198.5,159.3 199.2,162.2 199.9,165.0 200.6,164.2 201.3,161.3 202.0,158.6 202.7,158.5 203.4,158.4 204.1,158.2 204.8,158.9 205.5,158.7 206.2,161.7 206.9,163.4 207.6,163.8 208.3,162.0 209.0,160.0 209.7,157.9 210.4,158.4 211.1,159.5 211.8,159.5 212.5,159.1 213.2,160.0 213.9,162.9 214.6,164.9 215.3,162.9 216.0,162.2 216.7,158.7 217.4,158.9 218.1,158.9 218.8,159.7 219.5,159.2 220.2,159.4 220.9,161.8 221.6,164.0 222.3,163.6 223.0,161.8 223.7,159.5 224.4,158.6 225.1,158.9 225.8,159.5 226.5,159.1 227.2,158.8 227.9,160.7 228.6,165.3 229.3,166.8 230.0,165.9 230.7,161.6 231.4,159.9 232.1,160.1 232.8,159.5 233.5,159.4 234.2,159.1 234.9,162.5 235.6,164.5 236.3,163.3 237.0,161.4 237.7,158.7 238.4,158.7 239.1,159.6 239.8,159.1 240.5,158.8 241.2,160.8 241.9,163.2 242.6,163.8 243.3,162.9 244.0,158.9 244.7,158.0 245.4,159.0 246.1,159.8 246.8,159.5 247.5,160.2 248.2,163.3 248.9,163.6 249.6,162.0 250.3,158.9 251.0,158.3 251.7,159.5 252.4,158.6 253.1,160.4 253.8,160.0 254.5,163.4 255.2,164.5 255.9,162.0 256.6,158.8 257.3,157.1 258.0,159.0 258.7,159.7 259.4,158.8 260.1,161.5 260.8,166.2 261.5,171.7 262.2,169.4 262.9,163.0 263.6,160.3 264.3,159.8 265.0,158.6 265.7,159.5 266.4,162.5 267.1,164.5 267.8,163.0 268.5,159.2 269.2,158.1 269.9,159.5 270.6,159.2 271.3,158.5 272.0,161.2 272.7,163.4 273.4,164.0 274.1,161.3 274.8,157.9 275.5,158.9 276.2,159.8 276.9,159.1 277.6,159.5 278.3,161.4 279.0,163.2 279.7,163.0 280.4,159.4 281.1,158.6 281.8,159.1 282.5,159.3 283.2,159.1 283.9,160.4 284.6,163.0 285.3,164.4 286.0,162.7 286.7,159.2 287.4,158.2 288.1,159.4 288.8,159.5 289.5,159.2 290.2,159.4 290.9,161.9 291.6,163.5 292.3,162.4 293.0,160.1 293.7,158.7 294.4,158.6 295.1,158.9 295.8,159.4 296.5,159.7 297.2,161.3 297.9,164.6 298.6,163.4 299.3,160.6 300.0,157.0 300.7,156.2 301.4,157.0 302.1,157.6 302.8,158.6 303.5,160.1 304.2,163.5 304.9,163.8 305.6,161.7 306.3,159.8 307.0,158.7 307.7,159.5 308.4,160.1 309.1,158.5 309.8,158.8 310.5,160.5 311.2,163.3 311.9,163.3 312.6,162.3 313.3,159.6 314.0,157.8 314.7,158.9 315.4,160.1 316.1,159.3 316.8,159.5 317.5,160.8 318.2,163.1 318.9,164.4 319.6,162.9 320.3,160.8 321.0,158.1 321.7,158.2 322.4,159.7 323.1,159.2 323.8,159.2 324.5,160.1 325.2,161.9 325.9,164.0 326.6,164.3 327.3,161.8 328.0,158.3 328.7,157.6 329.4,159.6 330.1,159.8 330.8,158.3 331.5,158.5 332.2,160.7 332.9,162.7 333.6,164.5 334.3,162.8 335.0,160.2 335.7,157.8 336.4,158.9 337.1,160.3 337.8,159.1 338.5,159.6 339.2,160.3 339.9,162.6 340.6,164.1 341.3,163.0 342.0,160.4 342.7,158.9 343.4,158.8 344.1,159.9 344.8,159.9 345.5,159.4 346.2,159.4 346.9,161.4 347.6,164.3 348.3,164.4 349.0,162.9 349.7,161.6 350.4,161.8 351.1,160.4 351.8,160.0 352.5,158.6 353.2,159.9 353.9,162.7 354.6,164.3 355.3,163.6 356.0,159.5 356.7,157.3 357.4,159.2 358.1,160.2 358.8,159.9 359.5,159.3 360.2,161.4 360.9,163.9 361.6,163.3 362.3,160.8 363.0,158.8 363.7,158.2 364.4,160.3 365.1,158.7 365.8,158.9 366.5,161.2 367.2,163.3 367.9,163.5 368.6,160.7 369.3,158.3 370.0,159.1 370.7,159.7 371.4,159.6 372.1,158.9 372.8,161.4 373.5,163.8 374.2,163.4 374.9,160.6 375.6,158.5 376.3,159.2 377.0,159.5 377.7,159.4 378.4,160.3 379.1,161.5 379.8,163.6 380.5,163.5 381.2,159.9 381.9,158.2 382.6,159.2 383.3,159.4 384.0,159.3 384.7,159.9 385.4,163.4 386.1,163.7 386.8,161.3 387.5,158.8 388.2,158.2 388.9,159.8 389.6,159.3 390.3,158.9 391.0,161.4 391.7,163.7 392.4,162.8 393.1,159.7 393.8,157.9 394.5,158.7 395.2,159.6 395.9,159.5 396.6,159.9 397.3,163.3 398.0,164.9 398.7,162.4 399.4,160.0 400.1,158.8 400.8,159.1 401.5,159.6 402.2,159.5 402.9,160.4 403.6,163.6 404.3,164.4 405.0,162.1 405.7,158.7 406.4,158.5 407.1,159.2 407.8,159.7 408.5,158.3 409.2,160.6 409.9,163.9 410.6,164.4 411.3,161.8 412.0,159.1 412.7,157.9 413.4,158.9 414.1,159.3 414.8,159.0 415.5,160.5 416.2,162.3 416.9,164.7 417.6,161.9 418.3,158.9 419.0,156.7 419.7,156.6 420.4,156.6 421.1,156.9 421.8,159.1 422.5,161.2 423.2,163.3 423.9,163.5 424.6,161.2 425.3,158.9 426.0,158.6 426.7,158.5 427.4,160.6 428.1,159.1 428.8,159.3 429.5,162.0 430.2,164.0 430.9,164.9 431.6,161.8 432.3,158.6 433.0,158.1 433.7,158.9 434.4,159.4 435.1,159.4 435.8,159.0 436.5,162.0 437.2,163.6 437.9,164.1 438.6,162.5 439.3,158.4 440.0,157.8 440.7,159.1 441.4,159.6 442.1,159.3 442.8,159.2 443.5,160.1 444.2,162.7 444.9,163.7 445.6,162.3 446.3,161.0 447.0,158.0 447.7,158.1 448.4,160.0 449.1,160.0 449.8,158.8 450.5,159.3 451.2,161.6 451.9,163.4 452.6,164.3 453.3,161.8 454.0,159.2 454.7,158.6 455.4,159.3 456.1,160.4 456.8,159.9 457.5,158.4 458.2,161.1 458.9,162.7 459.6,163.6 460.3,163.0 461.0,159.5 461.7,158.1 462.4,159.2 463.1,159.2 463.8,159.0 464.5,159.2 465.2,160.8 465.9,163.1 466.6,163.6 467.3,162.6 468.0,159.9 468.7,159.1 469.4,159.1 470.1,159.9 470.8,159.9 471.5,158.9 472.2,160.8 472.9,163.5 473.6,163.8 474.3,162.1 475.0,159.5 475.7,157.7 476.4,159.5 477.1,159.9 477.8,159.5 478.5,159.2 479.2,162.1 479.9,164.8 480.6,163.7 481.3,159.9 482.0,158.4 482.7,159.4 483.4,159.5 484.1,159.4 484.8,160.4 485.5,161.5 486.2,163.9 486.9,163.1 487.6,160.2 488.3,159.0 489.0,158.7 489.7,159.0 490.4,158.8 491.1,159.3 491.8,162.0 492.5,163.8 493.2,163.6 493.9,159.8 494.6,158.4 495.3,159.2 496.0,159.9 496.7,158.9 497.4,159.6 498.1,162.8 498.8,163.7 499.5,162.5 500.2,159.4 500.9,158.7 501.6,159.3 502.3,159.4 503.0,159.1 503.7,160.3 504.4,163.5 505.1,164.1 505.8,161.1 506.5,157.9 507.2,158.5 507.9,158.6 508.6,159.5 509.3,159.1 510.0,162.0 510.7,163.7 511.4,162.9 512.1,159.8 512.8,158.6 513.5,158.5 514.2,159.9 514.9,158.9 515.6,159.8 516.3,163.3" fill="none" stroke="#d04a8c" stroke-width="0.6" stroke-linejoin="round"/><path d="M37.5,185.5 38.2,193.1 38.9,195.2 39.6,195.3 40.3,196.9 41.0,196.9 41.7,193.0 42.4,190.3 43.1,186.9 43.8,181.5 44.5,189.4 45.2,194.0 45.9,194.7 46.6,196.7 47.3,197.1 48.0,194.8 48.7,192.6 49.4,189.4 50.1,186.6 50.8,186.6 51.5,192.3 52.2,194.7 52.9,194.7 53.6,197.3 54.3,196.7 55.0,195.0 55.7,191.1 56.4,189.9 57.1,185.8 57.8,188.8 58.5,195.1 59.2,194.6 59.9,195.9 60.6,198.0 61.3,197.3 62.0,194.5 62.7,194.2 63.4,190.6 64.1,187.9 64.8,191.3 65.5,194.9 66.2,194.0 66.9,195.0 67.6,198.2 68.3,193.9 69.0,193.5 69.7,191.2 70.4,188.5 71.1,185.9 71.8,190.6 72.5,195.2 73.2,193.1 73.9,196.3 74.6,198.1 75.3,194.2 76.0,194.0 76.7,192.0 77.4,187.8 78.1,184.5 78.8,191.4 79.5,195.8 80.2,194.9 80.9,195.1 81.6,198.4 82.3,197.0 83.0,193.9 83.7,193.5 84.4,190.2 85.1,188.0 85.8,190.6 86.5,195.6 87.2,197.5 87.9,195.6 88.6,197.1 89.3,197.7 90.0,193.6 90.7,193.8 91.4,192.6 92.1,187.7 92.8,188.7 93.5,192.7 94.2,195.7 94.9,194.4 95.6,197.7 96.3,198.3 97.0,195.5 97.7,192.5 98.4,194.2 99.1,190.5 99.8,186.1 100.5,188.9 101.2,194.3 101.9,194.7 102.6,196.5 103.3,197.3 104.0,196.4 104.7,194.1 105.4,190.6 106.1,191.1 106.8,186.4 107.5,185.9 108.2,190.6 108.9,193.8 109.6,195.3 110.3,196.0 111.0,198.0 111.7,196.8 112.4,194.7 113.1,192.8 113.8,191.6 114.5,185.6 115.2,183.3 115.9,189.7 116.6,194.2 117.3,194.3 118.0,195.0 118.7,197.9 119.4,197.5 120.1,195.2 120.8,193.6 121.5,191.0 122.2,185.5 122.9,184.5 123.6,191.0 124.3,193.6 125.0,194.1 125.7,194.5 126.4,196.6 127.1,197.0 127.8,193.6 128.5,193.1 129.2,190.0 129.9,185.2 130.6,183.8 131.3,188.5 132.0,194.7 132.7,194.8 133.4,195.5 134.1,197.0 134.8,197.8 135.5,194.7 136.2,192.2 136.9,187.9 137.6,185.5 138.3,183.1 139.0,188.0 139.7,193.9 140.4,194.7 141.1,195.2 141.8,196.6 142.5,197.1 143.2,194.5 143.9,191.7 144.6,188.3 145.3,185.8 146.0,183.1 146.7,188.9 147.4,193.9 148.1,192.8 148.8,194.3 149.5,197.3 150.2,197.9 150.9,192.4 151.6,191.9 152.3,191.7 153.0,186.1 153.7,186.0 154.4,193.1 155.1,195.3 155.8,194.6 156.5,196.5 157.2,198.4 157.9,195.3 158.6,194.9 159.3,191.9 160.0,189.1 160.7,189.3 161.4,188.2 162.1,194.9 162.8,194.5 163.5,194.7 164.2,196.6 164.9,197.1 165.6,195.0 166.3,194.6 167.0,192.1 167.7,187.6 168.4,185.3 169.1,193.3 169.8,195.6 170.5,195.8 171.2,196.0 171.9,197.6 172.6,196.3 173.3,193.6 174.0,191.7 174.7,186.4 175.4,185.8 176.1,190.8 176.8,195.5 177.5,194.4 178.2,195.7 178.9,198.1 179.6,194.9 180.3,194.2 181.0,192.8 181.7,189.1 182.4,184.4 183.1,189.9 183.8,194.8 184.5,194.4 185.2,195.2 185.9,198.0 186.6,195.8 187.3,193.7 188.0,191.7 188.7,190.7 189.4,188.2 190.1,193.6 190.8,195.4 191.5,194.9 192.2,196.9 192.9,197.8 193.6,195.8 194.3,193.5 195.0,194.0 195.7,186.3 196.4,187.5 197.1,194.5 197.8,195.3 198.5,194.6 199.2,195.8 199.9,198.0 200.6,192.6 201.3,193.8 202.0,190.4 202.7,186.4 203.4,190.0 204.1,193.8 204.8,194.3 205.5,195.2 206.2,196.4 206.9,196.6 207.6,192.9 208.3,192.0 209.0,185.4 209.7,185.3 210.4,190.1 211.1,194.7 211.8,193.8 212.5,197.2 213.2,197.1 213.9,192.7 214.6,193.0 215.3,189.3 216.0,184.2 216.7,187.8 217.4,193.1 218.1,194.0 218.8,194.5 219.5,197.6 220.2,196.6 220.9,194.6 221.6,192.8 222.3,187.3 223.0,185.6 223.7,189.0 224.4,194.3 225.1,194.4 225.8,196.3 226.5,198.0 227.2,194.7 227.9,192.7 228.6,191.4 229.3,186.3 230.0,183.5 230.7,191.2 231.4,194.0 232.1,193.8 232.8,196.5 233.5,195.9 234.2,194.0 234.9,192.7 235.6,188.1 236.3,183.1 237.0,184.5 237.7,191.7 238.4,194.6 239.1,194.8 239.8,196.2 240.5,197.7 241.2,194.2 241.9,193.9 242.6,188.4 243.3,182.3 244.0,183.1 244.7,190.8 245.4,193.6 246.1,194.0 246.8,197.8 247.5,196.5 248.2,194.1 248.9,193.2 249.6,191.3 250.3,185.4 251.0,186.6 251.7,190.3 252.4,196.0 253.1,195.1 253.8,196.0 254.5,198.3 255.2,195.9 255.9,192.4 256.6,193.8 257.3,187.9 258.0,187.6 258.7,188.9 259.4,193.3 260.1,194.0 260.8,195.2 261.5,198.0 262.2,198.0 262.9,193.9 263.6,192.1 264.3,188.3 265.0,184.8 265.7,187.0 266.4,190.6 267.1,196.0 267.8,195.5 268.5,198.0 269.2,197.0 269.9,195.5 270.6,193.1 271.3,190.4 272.0,187.6 272.7,183.6 273.4,188.0 274.1,194.3 274.8,196.0 275.5,194.6 276.2,195.8 276.9,197.8 277.6,195.2 278.3,193.6 279.0,192.9 279.7,187.6 280.4,187.5 281.1,188.5 281.8,194.9 282.5,195.7 283.2,194.9 283.9,197.3 284.6,196.4 285.3,194.4 286.0,193.7 286.7,191.9 287.4,189.5 288.1,189.4 288.8,191.3 289.5,194.7 290.2,194.5 290.9,196.1 291.6,194.9 292.3,197.2 293.0,195.4 293.7,193.3 294.4,193.6 295.1,188.1 295.8,187.5 296.5,190.6 297.2,195.0 297.9,195.3 298.6,194.9 299.3,197.7 300.0,197.2 300.7,194.5 301.4,193.0 302.1,192.5 302.8,187.7 303.5,183.9 304.2,187.6 304.9,194.6 305.6,194.5 306.3,194.5 307.0,198.9 307.7,198.3 308.4,194.7 309.1,192.6 309.8,192.7 310.5,186.8 311.2,186.5 311.9,189.1 312.6,194.9 313.3,194.4 314.0,195.5 314.7,195.5 315.4,197.2 316.1,195.5 316.8,193.3 317.5,190.5 318.2,188.6 318.9,186.5 319.6,190.2 320.3,194.3 321.0,194.7 321.7,194.7 322.4,198.0 323.1,197.3 323.8,195.0 324.5,193.2 325.2,190.4 325.9,187.2 326.6,188.4 327.3,190.7 328.0,195.4 328.7,194.1 329.4,195.2 330.1,197.8 330.8,196.4 331.5,193.8 332.2,192.0 332.9,187.7 333.6,182.1 334.3,188.3 335.0,193.7 335.7,194.6 336.4,194.9 337.1,196.5 337.8,197.8 338.5,193.2 339.2,190.8 339.9,187.9 340.6,182.4 341.3,183.6 342.0,192.5 342.7,194.5 343.4,194.6 344.1,198.3 344.8,196.3 345.5,194.7 346.2,193.0 346.9,190.4 347.6,185.4 348.3,183.5 349.0,191.3 349.7,194.7 350.4,194.2 351.1,195.9 351.8,196.4 352.5,194.8 353.2,192.9 353.9,189.3 354.6,185.8 355.3,185.2 356.0,191.5 356.7,193.1 357.4,195.5 358.1,197.3 358.8,197.1 359.5,194.0 360.2,191.6 360.9,190.6 361.6,185.5 362.3,187.2 363.0,193.7 363.7,193.9 364.4,193.7 365.1,197.6 365.8,195.5 366.5,193.8 367.2,192.7 367.9,186.4 368.6,183.5 369.3,187.9 370.0,194.5 370.7,194.3 371.4,195.5 372.1,198.0 372.8,197.1 373.5,193.2 374.2,192.0 374.9,185.1 375.6,184.4 376.3,190.1 377.0,194.7 377.7,194.9 378.4,197.3 379.1,197.9 379.8,194.6 380.5,192.8 381.2,191.9 381.9,184.8 382.6,188.3 383.3,195.1 384.0,195.0 384.7,195.7 385.4,198.1 386.1,198.2 386.8,194.8 387.5,192.3 388.2,191.0 388.9,187.9 389.6,191.6 390.3,195.8 391.0,196.4 391.7,196.7 392.4,196.8 393.1,195.0 393.8,192.4 394.5,194.3 395.2,189.8 395.9,188.4 396.6,192.3 397.3,195.1 398.0,195.1 398.7,196.3 399.4,197.1 400.1,194.1 400.8,194.6 401.5,190.7 402.2,185.8 402.9,188.2 403.6,192.9 404.3,195.0 405.0,194.6 405.7,196.2 406.4,196.8 407.1,194.2 407.8,191.6 408.5,191.5 409.2,186.1 409.9,186.6 410.6,193.6 411.3,195.7 412.0,195.9 412.7,198.6 413.4,195.4 414.1,193.0 414.8,192.6 415.5,190.5 416.2,184.3 416.9,188.5 417.6,194.5 418.3,195.8 419.0,193.9 419.7,197.2 420.4,197.2 421.1,194.0 421.8,194.4 422.5,190.9 423.2,189.1 423.9,186.5 424.6,194.6 425.3,196.6 426.0,194.0 426.7,196.7 427.4,197.8 428.1,194.4 428.8,194.0 429.5,192.4 430.2,187.6 430.9,185.5 431.6,190.2 432.3,194.5 433.0,194.2 433.7,196.6 434.4,196.8 435.1,196.8 435.8,194.5 436.5,192.5 437.2,187.5 437.9,183.0 438.6,184.7 439.3,190.9 440.0,195.0 440.7,194.9 441.4,196.3 442.1,197.9 442.8,196.2 443.5,193.6 444.2,189.5 444.9,188.0 445.6,181.3 446.3,187.2 447.0,191.2 447.7,194.5 448.4,193.7 449.1,197.5 449.8,198.3 450.5,195.2 451.2,192.7 451.9,191.4 452.6,185.6 453.3,184.1 454.0,187.2 454.7,193.3 455.4,194.9 456.1,193.8 456.8,197.0 457.5,198.0 458.2,196.1 458.9,192.5 459.6,192.4 460.3,188.7 461.0,184.4 461.7,187.7 462.4,193.7 463.1,194.6 463.8,194.8 464.5,196.3 465.2,197.0 465.9,195.9 466.6,192.5 467.3,190.2 468.0,186.5 468.7,182.9 469.4,186.8 470.1,193.4 470.8,196.2 471.5,193.7 472.2,196.3 472.9,196.3 473.6,195.5 474.3,193.4 475.0,190.3 475.7,186.6 476.4,183.0 477.1,185.3 477.8,193.5 478.5,196.4 479.2,193.8 479.9,197.7 480.6,197.6 481.3,194.4 482.0,193.5 482.7,192.7 483.4,189.5 484.1,185.2 484.8,189.8 485.5,193.5 486.2,195.8 486.9,195.3 487.6,196.0 488.3,196.1 489.0,193.8 489.7,193.2 490.4,193.1 491.1,188.8 491.8,187.8 492.5,192.1 493.2,193.9 493.9,195.5 494.6,195.4 495.3,197.9 496.0,195.9 496.7,194.6 497.4,192.3 498.1,192.6 498.8,186.7 499.5,187.7 500.2,191.9 500.9,195.5 501.6,193.6 502.3,196.2 503.0,198.1 503.7,195.7 504.4,194.5 505.1,192.1 505.8,188.2 506.5,185.9 507.2,190.5 507.9,194.0 508.6,194.7 509.3,195.0 510.0,197.9 510.7,196.8 511.4,194.4 512.1,193.1 512.8,189.7 513.5,185.9 514.2,188.4 514.9,192.3 515.6,196.2 516.3,194.5" fill="none" stroke="#5a4aa8" stroke-width="0.7" stroke-linejoin="round"/><path d="M37.5,232.2 38.1,232.4 38.7,233.0 39.3,233.5 39.9,233.9 40.5,233.8 41.1,233.6 41.7,233.1 42.3,232.9 42.9,232.6 43.5,231.8 44.1,230.7 44.7,229.5 45.3,228.1 45.9,225.8 46.5,223.5 47.1,222.0 47.7,220.4 48.3,219.4 48.9,218.5 49.5,217.9 50.1,217.9 50.7,218.2 51.3,218.7 51.9,219.7 52.5,220.6 53.1,221.3 53.7,222.8 54.3,224.1 54.9,225.6 55.5,226.6 56.1,227.7 56.7,228.3 57.3,228.6 57.9,228.8 58.5,229.2 59.1,229.4 59.7,229.7 60.3,230.2 60.9,230.4 61.5,231.1 62.1,231.3 62.7,231.3 63.3,232.0 63.9,232.2 64.5,232.8 65.1,233.2 65.7,233.3 66.3,233.9 66.9,234.0 67.5,234.1 68.1,233.5 68.7,233.5 69.3,232.8 69.9,232.5 70.5,231.9 71.1,231.6 71.7,230.4 72.3,229.2 72.9,227.3 73.5,225.5 74.1,223.6 74.7,221.6 75.3,219.8 75.9,218.4 76.5,216.8 77.1,216.4 77.7,216.7 78.3,217.7 78.9,218.8 79.5,220.2 80.1,221.7 80.7,223.1 81.3,224.5 81.9,226.2 82.5,227.2 83.1,228.3 83.7,229.0 84.3,229.8 84.9,229.9 85.5,230.1 86.1,230.2 86.7,230.4 87.3,229.8 87.9,229.0 88.5,228.3 89.1,227.1 89.7,226.5 90.3,226.3 90.9,226.7 91.5,227.7 92.1,229.0 92.7,229.6 93.3,229.8 93.9,229.6 94.5,229.4 95.1,228.8 95.7,228.3 96.3,227.6 96.9,227.0 97.5,226.4 98.1,225.8 98.7,225.4 99.3,225.1 99.9,225.2 100.5,225.9 101.1,226.4 101.7,227.0 102.3,228.3 102.9,229.0 103.5,229.7 104.1,230.7 104.7,231.2 105.3,231.5 105.9,231.6 106.5,231.5 107.1,231.5 107.7,231.5 108.3,231.1 108.9,231.0 109.5,230.9 110.1,230.0 110.7,229.8 111.3,229.3 111.9,228.9 112.5,228.8 113.1,229.1 113.7,229.4 114.3,229.6 114.9,230.1 115.5,230.5 116.1,230.5 116.7,230.4 117.3,229.9 117.9,229.3 118.5,228.9 119.1,228.1 119.7,227.4 120.3,226.9 120.9,226.1 121.5,225.7 122.1,225.7 122.7,225.8 123.3,226.2 123.9,226.4 124.5,226.6 125.1,227.5 125.7,227.9 126.3,227.9 126.9,228.7 127.5,228.8 128.1,228.6 128.7,228.9 129.3,228.8 129.9,229.1 130.5,228.7 131.1,228.8 131.7,228.7 132.3,228.7 132.9,228.5 133.5,228.4 134.1,228.2 134.7,227.7 135.3,227.0 135.9,226.8 136.5,227.0 137.1,227.1 137.7,227.2 138.3,226.9 138.9,227.0 139.5,226.2 140.1,225.2 140.7,224.8 141.3,224.5 141.9,223.9 142.5,224.4 143.1,224.9 143.7,225.5 144.3,225.9 144.9,226.4 145.5,226.9 146.1,227.6 146.7,228.0 147.3,227.9 147.9,228.2 148.5,229.0 149.1,228.8 149.7,229.2 150.3,229.6 150.9,229.9 151.5,230.3 152.1,230.3 152.7,230.0 153.3,230.1 153.9,229.9 154.5,229.9 155.1,229.4 155.7,229.0 156.3,228.8 156.9,229.0 157.5,228.4 158.1,228.0 158.7,227.9 159.3,227.6 159.9,227.2 160.5,226.3 161.1,226.0 161.7,225.4 162.3,224.6 162.9,224.1 163.5,223.8 164.1,223.2 164.7,222.5 165.3,222.0 165.9,222.0 166.5,222.1 167.1,222.8 167.7,223.5 168.3,224.6 168.9,225.5 169.5,226.8 170.1,227.3 170.7,228.3 171.3,228.9 171.9,229.0 172.5,229.3 173.1,228.7 173.7,228.9 174.3,228.9 174.9,228.2 175.5,228.2 176.1,228.4 176.7,228.2 177.3,228.0 177.9,228.2 178.5,228.3 179.1,228.6 179.7,228.7 180.3,228.7 180.9,228.5 181.5,228.2 182.1,227.9 182.7,227.1 183.3,226.5 183.9,225.8 184.5,225.2 185.1,225.0 185.7,225.0 186.3,224.6 186.9,224.3 187.5,223.9 188.1,224.0 188.7,223.8 189.3,223.8 189.9,224.0 190.5,224.5 191.1,225.0 191.7,225.5 192.3,226.0 192.9,226.5 193.5,226.9 194.1,227.2 194.7,227.7 195.3,228.2 195.9,228.4 196.5,228.9 197.1,229.3 197.7,229.4 198.3,229.6 198.9,230.3 199.5,230.4 200.1,230.6 200.7,230.3 201.3,230.6 201.9,230.2 202.5,229.9 203.1,229.6 203.7,229.5 204.3,229.3 204.9,229.3 205.5,229.3 206.1,230.0 206.7,230.2 207.3,230.5 207.9,230.6 208.5,229.8 209.1,229.2 209.7,227.6 210.3,225.8 210.9,224.1 211.5,222.1 212.1,220.5 212.7,218.4 213.3,216.6 213.9,215.0 214.5,213.9 215.1,213.6 215.7,214.1 216.3,215.3 216.9,217.4 217.5,218.8 218.1,220.8 218.7,222.1 219.3,223.4 219.9,224.7 220.5,226.1 221.1,227.3 221.7,228.3 222.3,229.5 222.9,230.5 223.5,230.5 224.1,230.5 224.7,230.4 225.3,230.2 225.9,230.2 226.5,230.0 227.1,229.8 227.7,229.9 228.3,229.3 228.9,229.4 229.5,229.9 230.1,229.9 230.7,229.9 231.3,230.0 231.9,230.5 232.5,230.7 233.1,231.1 233.7,231.3 234.3,231.7 234.9,231.4 235.5,230.9 236.1,230.2 236.7,229.5 237.3,228.6 237.9,228.0 238.5,226.8 239.1,226.2 239.7,225.8 240.3,225.0 240.9,225.2 241.5,225.5 242.1,226.2 242.7,226.9 243.3,227.5 243.9,228.5 244.5,229.3 245.1,229.9 245.7,230.7 246.3,230.9 246.9,230.9 247.5,231.2 248.1,231.0 248.7,230.8 249.3,230.6 249.9,230.5 250.5,230.4 251.1,230.3 251.7,230.1 252.3,229.9 252.9,229.7 253.5,229.3 254.1,228.9 254.7,228.3 255.3,227.8 255.9,227.7 256.5,227.4 257.1,227.5 257.7,227.5 258.3,228.0 258.9,229.1 259.5,229.7 260.1,230.2 260.7,230.2 261.3,229.6 261.9,228.7 262.5,227.4 263.1,226.6 263.7,225.4 264.3,224.8 264.9,224.4 265.5,224.3 266.1,224.5 266.7,224.5 267.3,224.6 267.9,224.6 268.5,224.6 269.1,224.7 269.7,224.1 270.3,224.0 270.9,223.6 271.5,223.4 272.1,223.2 272.7,222.9 273.3,223.4 273.9,224.2 274.5,224.6 275.1,225.4 275.7,226.1 276.3,227.0 276.9,227.5 277.5,228.4 278.1,228.5 278.7,228.6 279.3,229.4 279.9,229.6 280.5,229.8 281.1,230.1 281.7,230.3 282.3,230.5 282.9,230.8 283.5,230.9 284.1,230.8 284.7,230.5 285.3,230.2 285.9,230.1 286.5,230.1 287.1,230.0 287.7,229.7 288.3,229.7 288.9,230.2 289.5,230.4 290.1,230.7 290.7,230.7 291.3,231.1 291.9,231.3 292.5,231.5 293.1,231.2 293.7,231.2 294.3,230.5 294.9,229.9 295.5,228.9 296.1,228.4 296.7,227.9 297.3,226.8 297.9,226.4 298.5,225.7 299.1,224.8 299.7,224.4 300.3,223.7 300.9,223.6 301.5,223.5 302.1,223.9 302.7,224.8 303.3,225.3 303.9,226.2 304.5,226.6 305.1,227.4 305.7,228.4 306.3,229.1 306.9,229.4 307.5,229.8 308.1,229.5 308.7,229.6 309.3,229.3 309.9,229.3 310.5,229.1 311.1,228.9 311.7,228.8 312.3,229.0 312.9,228.6 313.5,228.8 314.1,229.3 314.7,229.3 315.3,230.0 315.9,230.1 316.5,230.4 317.1,230.7 317.7,231.3 318.3,231.4 318.9,231.7 319.5,231.8 320.1,231.5 320.7,231.1 321.3,230.4 321.9,229.0 322.5,227.8 323.1,227.1 323.7,226.6 324.3,226.9 324.9,227.0 325.5,227.5 326.1,227.7 326.7,228.2 327.3,228.6 327.9,228.9 328.5,229.4 329.1,229.7 329.7,230.0 330.3,230.3 330.9,229.9 331.5,229.7 332.1,229.8 332.7,229.6 333.3,229.5 333.9,229.0 334.5,228.7 335.1,228.1 335.7,228.1 336.3,227.8 336.9,227.3 337.5,227.3 338.1,227.5 338.7,227.9 339.3,227.8 339.9,228.6 340.5,228.7 341.1,228.4 341.7,227.7 342.3,226.6 342.9,225.1 343.5,224.0 344.1,222.6 344.7,221.1 345.3,220.0 345.9,218.9 346.5,217.4 347.1,216.6 347.7,216.6 348.3,217.7 348.9,218.4 349.5,219.7 350.1,220.8 350.7,222.0 351.3,223.1 351.9,224.7 352.5,225.9 353.1,226.7 353.7,227.9 354.3,228.6 354.9,229.2 355.5,229.5 356.1,229.9 356.7,230.1 357.3,230.3 357.9,230.5 358.5,230.4 359.1,230.7 359.7,231.1 360.3,231.1 360.9,231.2 361.5,230.8 362.1,230.7 362.7,230.9 363.3,230.6 363.9,230.3 364.5,229.9 365.1,229.2 365.7,228.9 366.3,228.1 366.9,227.3 367.5,226.2 368.1,225.2 368.7,224.2 369.3,223.8 369.9,223.5 370.5,223.3 371.1,223.9 371.7,224.6 372.3,225.3 372.9,225.8 373.5,226.9 374.1,227.8 374.7,228.3 375.3,229.0 375.9,229.0 376.5,229.9 377.1,229.7 377.7,229.5 378.3,229.3 378.9,229.0 379.5,229.0 380.1,228.8 380.7,228.6 381.3,228.5 381.9,228.4 382.5,228.5 383.1,228.1 383.7,228.5 384.3,228.6 384.9,228.8 385.5,228.9 386.1,229.6 386.7,229.7 387.3,230.0 387.9,230.5 388.5,230.5 389.1,230.9 389.7,230.8 390.3,230.4 390.9,229.5 391.5,228.0 392.1,227.0 392.7,225.5 393.3,224.2 393.9,222.8 394.5,221.7 395.1,220.2 395.7,219.7 396.3,219.5 396.9,219.6 397.5,220.5 398.1,220.8 398.7,221.7 399.3,222.4 399.9,223.2 400.5,223.9 401.1,224.7 401.7,225.4 402.3,225.9 402.9,226.6 403.5,227.0 404.1,226.9 404.7,227.5 405.3,227.8 405.9,228.1 406.5,228.7 407.1,228.8 407.7,229.0 408.3,229.3 408.9,229.2 409.5,229.9 410.1,229.9 410.7,230.2 411.3,230.4 411.9,230.7 412.5,231.1 413.1,231.2 413.7,231.4 414.3,231.4 414.9,231.6 415.5,231.6 416.1,230.9 416.7,230.7 417.3,229.2 417.9,228.0 418.5,227.3 419.1,226.2 419.7,224.7 420.3,224.0 420.9,224.3 421.5,223.9 422.1,223.9 422.7,224.3 423.3,224.7 423.9,224.3 424.5,224.0 425.1,223.6 425.7,223.1 426.3,222.7 426.9,222.6 427.5,223.3 428.1,223.9 428.7,225.1 429.3,226.4 429.9,227.3 430.5,228.3 431.1,229.3 431.7,230.2 432.3,230.9 432.9,230.9 433.5,231.4 434.1,231.8 434.7,231.8 435.3,231.7 435.9,231.9 436.5,231.8 437.1,232.2 437.7,232.7 438.3,232.6 438.9,232.5 439.5,232.5 440.1,232.3 440.7,231.6 441.3,230.7 441.9,229.7 442.5,229.0 443.1,228.5 443.7,227.8 444.3,228.0 444.9,228.8 445.5,229.0 446.1,229.8 446.7,230.3 447.3,230.8 447.9,230.9 448.5,230.8 449.1,231.0 449.7,230.7 450.3,230.6 450.9,230.6 451.5,231.0 452.1,230.6 452.7,230.9 453.3,230.9 453.9,230.9 454.5,230.8 455.1,230.7 455.7,230.8 456.3,230.6 456.9,230.5 457.5,230.9 458.1,230.5 458.7,230.9 459.3,230.7 459.9,230.6 460.5,230.7 461.1,230.8 461.7,230.4 462.3,230.4 462.9,230.4 463.5,230.6 464.1,230.6 464.7,230.5 465.3,230.4 465.9,230.4 466.5,230.6 467.1,230.6 467.7,230.4 468.3,230.2 468.9,230.5 469.5,230.4 470.1,230.4 470.7,230.6 471.3,230.4 471.9,230.1 472.5,230.1 473.1,230.5 473.7,230.3 474.3,230.4 474.9,230.2 475.5,230.0 476.1,230.2 476.7,230.4 477.3,230.2 477.9,230.0 478.5,230.1 479.1,230.0 479.7,230.1 480.3,230.2 480.9,230.3 481.5,230.1 482.1,229.9 482.7,230.0 483.3,230.0 483.9,229.9 484.5,229.9 485.1,229.9 485.7,229.7 486.3,230.0 486.9,229.8 487.5,229.7 488.1,229.9 488.7,229.7 489.3,230.1 489.9,229.9 490.5,229.8 491.1,229.6 491.7,229.7 492.3,229.8 492.9,229.6 493.5,229.8 494.1,229.4 494.7,229.7 495.3,229.8 495.9,229.7 496.5,229.6 497.1,229.7 497.7,229.4 498.3,229.4 498.9,229.5 499.5,229.7 500.1,229.6 500.7,229.4 501.3,229.5 501.9,229.5 502.5,229.2 503.1,229.0 503.7,229.2 504.3,229.1 504.9,229.3 505.5,229.2 506.1,229.2 506.7,229.4 507.3,229.3 507.9,229.3 508.5,229.5 509.1,229.2 509.7,229.2 510.3,229.4 510.9,229.0 511.5,228.9 512.1,229.3 512.7,229.2 513.3,229.2 513.9,229.2 514.5,229.2 515.1,229.0 515.7,229.0 516.3,228.9 516.9,229.0" fill="none" stroke="#4aaa94" stroke-width="0.6" stroke-linejoin="round"/><path d="M37.5,260.3 45.5,260.3 45.5,252.5 66.5,252.5 66.5,257.0 91.0,257.0 91.0,253.0 112.5,253.0 112.5,256.5 137.0,256.5 137.0,257.0 160.5,257.0 160.5,258.5 186.0,258.5 186.0,257.0 208.6,257.0 208.6,252.0 229.8,252.0 229.8,263.0 260.7,263.0 260.7,264.5 289.5,264.5 289.5,262.0 318.9,262.0 318.9,254.5 362.8,254.5 362.8,260.0 389.0,260.0 389.0,256.0 412.7,256.0 412.7,260.0 437.7,260.0 437.7,241.0 517.0,241.0 517.0,241.0 517.0,241.0" fill="none" stroke="#c4a460" stroke-width="0.5" stroke-linejoin="round"/><path d="M37.5,293.6 37.7,293.6 37.7,289.4 44.5,289.4 44.5,286.5 50.4,286.5 50.4,284.3 55.5,284.3 55.5,285.5 61.4,285.5 61.4,280.4 67.4,280.4 67.4,277.0 77.5,277.0 77.5,275.0 88.5,275.0 88.5,272.1 97.9,272.1 97.9,274.5 103.8,274.5 103.8,273.0 114.0,273.0 114.0,276.3 125.0,276.3 125.0,280.4 130.0,280.4 130.0,283.5 136.0,283.5 136.0,284.6 142.0,284.6 142.0,281.8 149.6,281.8 149.6,279.2 158.0,279.2 158.0,277.0 160.0,277.0 160.0,277.4 163.6,277.4 163.6,279.2 168.2,279.2 168.2,276.3 179.1,276.3 179.1,273.2 189.1,273.2 189.1,275.0 194.6,275.0 194.6,273.2 204.6,273.2 204.6,271.4 209.2,271.4 209.2,274.1 214.6,274.1 214.6,275.4 220.1,275.4 220.1,278.1 225.6,278.1 225.6,286.0 231.0,286.0 231.0,290.5 236.5,290.5 236.5,289.0 242.9,289.0 242.9,292.3 254.7,292.3 254.7,289.0 260.2,289.0 260.2,285.0 265.6,285.0 265.6,281.4 271.1,281.4 271.1,276.8 276.6,276.8 276.6,277.4 282.0,277.4 282.0,275.0 287.5,275.0 287.5,273.2 293.0,273.2 293.0,272.3 295.0,272.3 295.0,273.1 308.1,273.1 308.1,277.5 313.2,277.5 313.2,273.1 318.2,273.1 318.2,277.1 324.3,277.1 324.3,279.5 329.3,279.5 329.3,282.2 334.4,282.2 334.4,281.2 339.4,281.2 339.4,282.2 345.5,282.2 345.5,280.8 351.6,280.8 351.6,278.7 355.6,278.7 355.6,278.1 361.7,278.1 361.7,277.1 366.7,277.1 366.7,276.1 372.8,276.1 372.8,277.1 377.8,277.1 377.8,278.7 383.9,278.7 383.9,270.7 387.9,270.7 387.9,273.5 404.1,273.5 404.1,279.5 409.1,279.5 409.1,276.5 414.2,276.5 414.2,279.1 420.3,279.1 420.3,280.2 430.4,280.2 430.4,283.6 447.0,283.6 447.0,283.6 517.0,283.6" fill="none" stroke="#7262b4" stroke-width="0.5" stroke-linejoin="round"/><path d="M37.5,300.4 38.0,305.2 38.5,303.9 39.0,306.5 39.5,305.2 40.0,304.6 40.5,304.6 41.0,304.4 41.5,305.1 42.0,305.9 42.5,305.7 43.0,305.8 43.5,304.0 44.0,304.1 44.5,306.5 45.0,306.1 45.5,307.0 46.0,306.3 46.5,304.6 47.0,306.3 47.5,305.9 48.0,305.2 48.5,306.7 49.0,307.7 49.5,308.2 50.0,309.3 50.5,310.1 51.0,311.0 51.5,311.3 52.0,311.4 52.5,311.9 53.0,312.6 53.5,312.4 54.0,311.9 54.5,312.7 55.0,312.9 55.5,313.6 56.0,313.8 56.5,314.2 57.0,313.5 57.5,315.0 58.0,314.7 58.5,315.4 59.0,315.5 59.5,314.8 60.0,312.9 60.5,311.6 61.0,310.0 61.5,307.3 62.0,303.8 62.5,300.1 63.0,306.2 63.5,306.3 64.0,304.3 64.5,306.1 65.0,303.9 65.5,304.7 66.0,305.1 66.5,305.3 67.0,304.5 67.5,304.7 68.0,305.3 68.5,304.8 69.0,304.8 69.5,305.8 70.0,306.0 70.5,305.3 71.0,305.3 71.5,305.3 72.0,305.0 72.5,305.0 73.0,304.6 73.5,305.9 74.0,305.3 74.5,305.3 75.0,305.1 75.5,306.8 76.0,308.1 76.5,308.6 77.0,310.0 77.5,311.6 78.0,312.6 78.5,313.8 79.0,314.5 79.5,315.8 80.0,317.0 80.5,317.1 81.0,319.0 81.5,319.9 82.0,321.1 82.5,321.4 83.0,322.1 83.5,320.7 84.0,319.1 84.5,318.3 85.0,316.5 85.5,314.6 86.0,313.7 86.5,311.8 87.0,310.1 87.5,308.9 88.0,307.9 88.5,306.5 89.0,300.9 89.5,304.3 90.0,303.0 90.5,304.2 91.0,305.4 91.5,305.9 92.0,306.6 92.5,305.6 93.0,304.7 93.5,306.0 94.0,305.3 94.5,305.2 95.0,305.3 95.5,306.3 96.0,304.7 96.5,304.6 97.0,305.3 97.5,305.6 98.0,306.3 98.5,307.9 99.0,309.1 99.5,310.0 100.0,312.0 100.5,312.5 101.0,313.1 101.5,315.4 102.0,316.0 102.5,317.5 103.0,318.6 103.5,319.1 104.0,318.2 104.5,316.4 105.0,316.4 105.5,315.2 106.0,314.9 106.5,313.5 107.0,312.7 107.5,312.1 108.0,310.7 108.5,310.0 109.0,309.2 109.5,308.6 110.0,307.0 110.5,307.0 111.0,302.0 111.5,302.8 112.0,304.8 112.5,305.6 113.0,305.1 113.5,304.9 114.0,305.1 114.5,306.1 115.0,304.8 115.5,306.4 116.0,304.4 116.5,304.9 117.0,306.0 117.5,305.7 118.0,304.7 118.5,305.3 119.0,304.8 119.5,306.0 120.0,305.2 120.5,307.5 121.0,307.4 121.5,308.8 122.0,310.2 122.5,311.1 123.0,311.4 123.5,312.5 124.0,312.1 124.5,313.6 125.0,314.5 125.5,314.8 126.0,314.9 126.5,315.3 127.0,316.5 127.5,316.0 128.0,316.3 128.5,315.2 129.0,314.9 129.5,314.8 130.0,313.1 130.5,312.8 131.0,311.2 131.5,310.5 132.0,309.7 132.5,309.4 133.0,307.8 133.5,307.1 134.0,306.5 134.5,301.5 135.0,304.1 135.5,305.7 136.0,305.5 136.5,304.7 137.0,305.5 137.5,304.8 138.0,303.6 138.5,304.7 139.0,304.8 139.5,306.0 140.0,306.1 140.5,304.5 141.0,305.4 141.5,305.4 142.0,304.3 142.5,303.8 143.0,305.3 143.5,305.5 144.0,304.9 144.5,303.3 145.0,305.4 145.5,305.6 146.0,307.8 146.5,310.6 147.0,311.6 147.5,312.7 148.0,314.9 148.5,316.0 149.0,317.3 149.5,317.5 150.0,315.9 150.5,313.7 151.0,313.2 151.5,311.9 152.0,310.9 152.5,308.9 153.0,308.3 153.5,306.8 154.0,302.6 154.5,302.8 155.0,305.6 155.5,306.7 156.0,305.0 156.5,304.6 157.0,304.9 157.5,304.2 158.0,304.3 158.5,305.4 159.0,305.0 159.5,305.5 160.0,305.7 160.5,304.8 161.0,305.2 161.5,305.2 162.0,304.9 162.5,304.8 163.0,305.5 163.5,306.9 164.0,308.4 164.5,309.8 165.0,310.7 165.5,311.1 166.0,311.2 166.5,311.6 167.0,312.4 167.5,312.7 168.0,313.0 168.5,313.2 169.0,314.0 169.5,313.6 170.0,314.2 170.5,314.9 171.0,315.2 171.5,313.6 172.0,312.9 172.5,312.2 173.0,312.3 173.5,311.6 174.0,311.2 174.5,310.8 175.0,308.8 175.5,308.5 176.0,307.7 176.5,306.8 177.0,306.5 177.5,300.7 178.0,304.2 178.5,303.6 179.0,305.3 179.5,306.0 180.0,303.7 180.5,304.8 181.0,305.9 181.5,305.2 182.0,303.9 182.5,306.2 183.0,304.2 183.5,306.3 184.0,304.9 184.5,304.8 185.0,305.4 185.5,305.3 186.0,305.8 186.5,305.7 187.0,305.3 187.5,306.4 188.0,305.5 188.5,306.7 189.0,308.2 189.5,310.2 190.0,311.2 190.5,311.4 191.0,311.6 191.5,312.3 192.0,312.5 192.5,312.3 193.0,313.3 193.5,313.4 194.0,313.5 194.5,314.6 195.0,314.7 195.5,314.3 196.0,315.5 196.5,315.7 197.0,315.8 197.5,316.2 198.0,315.2 198.5,313.5 199.0,312.7 199.5,311.2 200.0,309.4 200.5,308.1 201.0,306.3 201.5,300.8 202.0,304.3 202.5,305.5 203.0,304.4 203.5,305.7 204.0,305.7 204.5,305.3 205.0,305.8 205.5,305.8 206.0,305.0 206.5,305.7 207.0,305.5 207.5,305.5 208.0,305.0 208.5,305.0 209.0,305.4 209.5,306.4 210.0,307.1 210.5,305.1 211.0,304.6 211.5,305.1 212.0,304.8 212.5,305.1 213.0,305.7 213.5,306.0 214.0,307.6 214.5,308.4 215.0,309.2 215.5,310.8 216.0,310.6 216.5,310.4 217.0,311.8 217.5,312.0 218.0,312.4 218.5,312.8 219.0,312.9 219.5,313.7 220.0,313.7 220.5,313.9 221.0,314.3 221.5,313.9 222.0,315.2 222.5,313.8 223.0,314.0 223.5,313.2 224.0,312.7 224.5,311.8 225.0,312.2 225.5,310.2 226.0,310.3 226.5,309.5 227.0,308.6 227.5,309.2 228.0,308.2 228.5,308.4 229.0,307.2 229.5,305.6 230.0,300.0 230.5,304.7 231.0,305.7 231.5,304.8 232.0,305.1 232.5,306.3 233.0,305.1 233.5,305.9 234.0,305.1 234.5,304.5 235.0,305.3 235.5,305.1 236.0,303.8 236.5,304.5 237.0,305.1 237.5,306.5 238.0,305.0 238.5,305.4 239.0,306.6 239.5,307.9 240.0,308.9 240.5,310.1 241.0,311.5 241.5,311.2 242.0,311.9 242.5,311.9 243.0,312.4 243.5,312.5 244.0,312.2 244.5,312.7 245.0,313.5 245.5,313.2 246.0,313.8 246.5,314.2 247.0,315.0 247.5,315.5 248.0,314.4 248.5,315.7 249.0,315.6 249.5,313.7 250.0,313.2 250.5,313.5 251.0,312.4 251.5,311.5 252.0,311.2 252.5,310.8 253.0,309.9 253.5,309.4 254.0,308.7 254.5,308.2 255.0,307.5 255.5,306.9 256.0,303.1 256.5,302.4 257.0,305.0 257.5,303.6 258.0,304.9 258.5,305.9 259.0,306.1 259.5,306.1 260.0,305.6 260.5,304.5 261.0,305.9 261.5,305.6 262.0,305.5 262.5,304.4 263.0,305.6 263.5,306.3 264.0,305.8 264.5,305.1 265.0,305.7 265.5,305.3 266.0,305.4 266.5,305.9 267.0,305.6 267.5,305.4 268.0,305.6 268.5,304.7 269.0,304.6 269.5,305.7 270.0,304.9 270.5,305.8 271.0,304.0 271.5,306.2 272.0,305.3 272.5,306.6 273.0,303.5 273.5,304.1 274.0,306.4 274.5,305.5 275.0,305.6 275.5,305.5 276.0,305.8 276.5,307.9 277.0,309.2 277.5,310.8 278.0,311.2 278.5,311.9 279.0,312.2 279.5,312.6 280.0,313.6 280.5,314.9 281.0,315.6 281.5,315.4 282.0,315.2 282.5,314.3 283.0,313.4 283.5,312.3 284.0,311.6 284.5,311.2 285.0,310.4 285.5,309.8 286.0,308.2 286.5,306.6 287.0,306.3 287.5,300.5 288.0,304.0 288.5,304.9 289.0,305.1 289.5,306.4 290.0,306.2 290.5,305.3 291.0,304.4 291.5,304.3 292.0,305.0 292.5,305.1 293.0,305.5 293.5,304.5 294.0,305.2 294.5,305.7 295.0,304.1 295.5,307.1 296.0,305.8 296.5,305.8 297.0,304.4 297.5,304.6 298.0,306.2 298.5,306.1 299.0,303.6 299.5,306.5 300.0,307.0 300.5,309.6 301.0,310.2 301.5,311.3 302.0,311.7 302.5,312.5 303.0,314.0 303.5,314.5 304.0,315.4 304.5,315.5 305.0,316.7 305.5,317.2 306.0,318.4 306.5,319.4 307.0,320.2 307.5,318.9 308.0,317.2 308.5,316.5 309.0,314.8 309.5,314.3 310.0,312.4 310.5,311.7 311.0,309.9 311.5,309.0 312.0,307.6 312.5,304.8 313.0,300.1 313.5,304.8 314.0,304.7 314.5,305.4 315.0,304.7 315.5,307.5 316.0,305.4 316.5,304.5 317.0,304.2 317.5,306.4 318.0,305.8 318.5,305.6 319.0,304.3 319.5,304.9 320.0,304.5 320.5,306.2 321.0,305.0 321.5,306.9 322.0,305.8 322.5,305.2 323.0,306.2 323.5,307.7 324.0,309.2 324.5,310.7 325.0,311.4 325.5,311.0 326.0,311.7 326.5,312.2 327.0,312.6 327.5,313.5 328.0,313.9 328.5,313.8 329.0,315.1 329.5,315.1 330.0,314.7 330.5,313.5 331.0,313.2 331.5,312.1 332.0,311.1 332.5,310.8 333.0,309.6 333.5,308.9 334.0,308.7 334.5,308.1 335.0,306.8 335.5,305.7 336.0,300.2 336.5,305.6 337.0,305.4 337.5,304.2 338.0,304.7 338.5,304.1 339.0,305.5 339.5,306.5 340.0,306.2 340.5,304.3 341.0,304.0 341.5,305.7 342.0,306.6 342.5,305.4 343.0,306.1 343.5,304.3 344.0,305.3 344.5,305.7 345.0,305.1 345.5,305.2 346.0,305.9 346.5,304.9 347.0,305.6 347.5,307.5 348.0,308.9 348.5,309.8 349.0,311.1 349.5,311.9 350.0,311.9 350.5,313.0 351.0,312.4 351.5,314.0 352.0,314.3 352.5,315.7 353.0,315.4 353.5,315.9 354.0,315.3 354.5,314.2 355.0,313.3 355.5,312.8 356.0,311.7 356.5,310.8 357.0,309.9 357.5,308.6 358.0,308.7 358.5,306.7 359.0,304.6 359.5,300.8 360.0,305.6 360.5,304.4 361.0,304.7 361.5,304.9 362.0,305.2 362.5,306.2 363.0,304.6 363.5,304.6 364.0,304.4 364.5,305.0 365.0,305.7 365.5,304.8 366.0,305.1 366.5,304.9 367.0,305.4 367.5,303.8 368.0,305.8 368.5,306.1 369.0,304.8 369.5,305.3 370.0,304.7 370.5,306.3 371.0,307.5 371.5,309.4 372.0,310.2 372.5,310.9 373.0,310.7 373.5,310.9 374.0,311.8 374.5,311.5 375.0,312.6 375.5,311.8 376.0,313.0 376.5,312.7 377.0,313.3 377.5,313.6 378.0,312.9 378.5,314.0 379.0,313.9 379.5,314.0 380.0,315.0 380.5,315.0 381.0,315.2 381.5,315.9 382.0,316.0 382.5,315.9 383.0,315.3 383.5,314.1 384.0,311.3 384.5,308.8 385.0,308.1 385.5,304.0 386.0,301.4 386.5,305.4 387.0,306.5 387.5,304.4 388.0,304.9 388.5,305.4 389.0,307.6 389.5,304.7 390.0,305.2 390.5,305.9 391.0,304.8 391.5,305.6 392.0,305.7 392.5,305.1 393.0,305.6 393.5,306.7 394.0,305.5 394.5,305.1 395.0,304.8 395.5,305.6 396.0,306.2 396.5,305.5 397.0,305.7 397.5,307.4 398.0,304.9 398.5,305.5 399.0,307.5 399.5,308.9 400.0,310.5 400.5,312.7 401.0,314.1 401.5,316.0 402.0,317.1 402.5,319.0 403.0,318.4 403.5,317.3 404.0,316.6 404.5,315.1 405.0,314.7 405.5,314.2 406.0,313.4 406.5,313.6 407.0,312.3 407.5,310.8 408.0,311.3 408.5,309.2 409.0,308.5 409.5,307.9 410.0,307.4 410.5,307.6 411.0,302.0 411.5,303.3 412.0,306.4 412.5,304.5 413.0,304.8 413.5,306.5 414.0,305.3 414.5,305.3 415.0,305.8 415.5,305.8 416.0,304.9 416.5,305.2 417.0,305.8 417.5,305.6 418.0,304.8 418.5,306.3 419.0,306.0 419.5,305.2 420.0,305.0 420.5,306.1 421.0,303.6 421.5,305.5 422.0,305.0 422.5,304.9 423.0,306.1 423.5,305.7 424.0,305.9 424.5,307.2 425.0,308.2 425.5,310.6 426.0,311.9 426.5,313.5 427.0,314.6 427.5,316.3 428.0,316.8 428.5,315.4 429.0,314.2 429.5,313.3 430.0,312.7 430.5,311.9 431.0,311.3 431.5,309.5 432.0,308.7 432.5,308.0 433.0,306.1 433.5,301.2 434.0,304.0 434.5,305.9 435.0,306.1 435.5,304.8 436.0,304.6 436.5,304.7 437.0,305.8 437.5,306.5 438.0,304.6 438.5,304.3 439.0,305.5 439.5,305.6 440.0,306.0 440.5,304.9 441.0,306.0 441.5,305.2 442.0,307.6 442.5,307.9 443.0,309.7 443.5,310.6 444.0,310.7 444.5,311.2 445.0,312.2 445.5,312.0 446.0,311.7 446.5,313.5 447.0,312.9 447.5,313.5 448.0,314.5 448.5,313.7 449.0,314.5 449.5,315.4 450.0,315.7 450.5,316.1 451.0,315.9 451.5,317.0 452.0,316.8 452.5,316.1 453.0,314.7 453.5,314.8 454.0,313.0 454.5,312.1 455.0,311.0 455.5,310.4 456.0,308.7 456.5,308.2 457.0,307.2 457.5,306.0 458.0,299.7 458.5,305.2 459.0,305.2 459.5,305.3 460.0,305.0 460.5,304.4 461.0,305.1 461.5,305.8 462.0,306.1 462.5,305.3 463.0,305.6 463.5,304.6 464.0,305.2 464.5,305.2 465.0,305.3 465.5,305.4 466.0,305.6 466.5,306.3 467.0,306.0 467.5,305.8 468.0,304.5 468.5,304.8 469.0,305.5 469.5,305.5 470.0,305.7 470.5,307.1 471.0,308.2 471.5,309.6 472.0,310.1 472.5,311.5 473.0,312.1 473.5,311.6 474.0,311.6 474.5,311.9 475.0,312.1 475.5,313.2 476.0,313.6 476.5,314.3 477.0,313.5 477.5,314.7 478.0,314.9 478.5,314.9 479.0,315.0 479.5,315.8 480.0,316.9 480.5,314.6 481.0,314.0 481.5,313.2 482.0,312.5 482.5,312.1 483.0,310.6 483.5,309.0 484.0,308.5 484.5,307.6 485.0,307.3 485.5,305.5 486.0,299.4 486.5,305.5 487.0,305.6 487.5,304.3 488.0,305.2 488.5,304.0 489.0,304.8 489.5,305.1 490.0,305.1 490.5,304.6 491.0,306.3 491.5,306.1 492.0,305.0 492.5,304.5 493.0,305.0 493.5,306.1 494.0,304.0 494.5,306.0 495.0,305.3 495.5,305.1 496.0,306.2 496.5,305.5 497.0,305.8 497.5,306.4 498.0,307.7 498.5,309.0 499.0,310.7 499.5,310.4 500.0,311.9 500.5,312.9 501.0,312.9 501.5,313.2 502.0,313.9 502.5,314.5 503.0,314.7 503.5,315.3 504.0,315.8 504.5,316.7 505.0,317.8 505.5,316.1 506.0,315.9 506.5,313.7 507.0,313.4 507.5,311.9 508.0,311.2 508.5,310.2 509.0,308.5 509.5,308.2 510.0,307.4 510.5,305.5 511.0,299.2 511.5,304.6 512.0,304.7 512.5,305.7 513.0,304.3 513.5,305.6 514.0,305.1 514.5,305.5 515.0,305.3 515.5,306.1 516.0,305.1 516.5,305.2" fill="none" stroke="#23703a" stroke-width="0.75" stroke-linejoin="round"/><path d="M37.5,345.6 38.3,345.9 39.1,346.0 39.9,346.6 40.7,346.2 41.5,347.0 42.3,347.0 43.1,347.8 43.9,348.0 44.7,348.3 45.5,348.2 46.3,347.8 47.1,347.6 47.9,347.0 48.7,345.4 49.5,344.6 50.3,343.3 51.1,342.7 51.9,341.2 52.7,340.8 53.5,340.8 54.3,340.9 55.1,340.5 55.9,341.4 56.7,341.6 57.5,341.8 58.3,341.9 59.1,342.1 59.9,341.6 60.7,342.7 61.5,342.0 62.3,341.6 63.1,342.3 63.9,342.8 64.7,342.3 65.5,342.9 66.3,342.9 67.1,342.1 67.9,341.6 68.7,341.9 69.5,342.6 70.3,342.0 71.1,341.7 71.9,341.8 72.7,342.2 73.5,342.5 74.3,343.1 75.1,343.5 75.9,343.0 76.7,342.6 77.5,341.2 78.3,340.1 79.1,338.1 79.9,336.5 80.7,336.0 81.5,334.1 82.3,333.5 83.1,333.6 83.9,333.0 84.7,332.7 85.5,332.8 86.3,332.6 87.1,333.2 87.9,332.8 88.7,333.5 89.5,333.0 90.3,333.1 91.1,333.1 91.9,333.5 92.7,333.5 93.5,333.9 94.3,333.4 95.1,333.7 95.9,334.3 96.7,333.7 97.5,333.9 98.3,334.1 99.1,333.5 99.9,332.8 100.7,331.9 101.5,332.7 102.3,331.6 103.1,331.6 103.9,331.1 104.7,332.4 105.5,333.1 106.3,334.4 107.1,335.6 107.9,337.2 108.7,337.7 109.5,337.9 110.3,337.4 111.1,337.4 111.9,337.2 112.7,336.4 113.5,336.5 114.3,336.5 115.1,336.1 115.9,336.1 116.7,336.2 117.5,336.7 118.3,336.1 119.1,336.5 119.9,336.6 120.7,336.8 121.5,336.6 122.3,335.9 123.1,336.3 123.9,335.0 124.7,333.9 125.5,333.4 126.3,333.5 127.1,334.0 127.9,334.3 128.7,336.2 129.5,337.1 130.3,338.7 131.1,340.3 131.9,341.2 132.7,340.9 133.5,340.6 134.3,340.6 135.1,339.4 135.9,339.3 136.7,338.8 137.5,338.7 138.3,338.3 139.1,338.1 139.9,338.4 140.7,338.0 141.5,338.6 142.3,338.3 143.1,338.3 143.9,338.5 144.7,338.7 145.5,339.0 146.3,338.7 147.1,338.8 147.9,338.6 148.7,337.8 149.5,337.0 150.3,337.0 151.1,336.2 151.9,335.1 152.7,335.2 153.5,335.6 154.3,335.6 155.1,336.5 155.9,337.1 156.7,338.5 157.5,339.1 158.3,339.5 159.1,340.1 159.9,339.6 160.7,339.5 161.5,340.1 162.3,339.0 163.1,339.5 163.9,338.9 164.7,339.6 165.5,340.5 166.3,340.6 167.1,341.0 167.9,342.7 168.7,342.6 169.5,343.4 170.3,343.9 171.1,343.5 171.9,343.9 172.7,343.5 173.5,342.6 174.3,341.9 175.1,341.3 175.9,341.4 176.7,340.1 177.5,341.0 178.3,341.1 179.1,340.4 179.9,341.1 180.7,341.0 181.5,341.0 182.3,341.0 183.1,341.2 183.9,341.1 184.7,340.7 185.5,340.9 186.3,340.9 187.1,340.9 187.9,340.6 188.7,341.0 189.5,341.1 190.3,341.1 191.1,341.1 191.9,340.9 192.7,340.2 193.5,340.1 194.3,340.1 195.1,340.3 195.9,340.1 196.7,340.5 197.5,340.8 198.3,340.3 199.1,340.9 199.9,340.6 200.7,340.5 201.5,340.5 202.3,340.8 203.1,340.3 203.9,341.0 204.7,341.2 205.5,340.4 206.3,340.6 207.1,341.1 207.9,340.8 208.7,340.8 209.5,341.0 210.3,341.8 211.1,342.3 211.9,342.6 212.7,342.9 213.5,343.6 214.3,345.3 215.1,345.8 215.9,346.9 216.7,346.9 217.5,346.3 218.3,346.2 219.1,345.5 219.9,343.9 220.7,343.1 221.5,343.2 222.3,341.8 223.1,341.9 223.9,342.5 224.7,342.3 225.5,341.9 226.3,341.9 227.1,342.5 227.9,342.8 228.7,342.7 229.5,342.7 230.3,343.0 231.1,342.7 231.9,342.4 232.7,343.3 233.5,342.4 234.3,342.8 235.1,342.9 235.9,343.6 236.7,343.4 237.5,344.2 238.3,344.7 239.1,346.4 239.9,347.5 240.7,348.4 241.5,348.4 242.3,348.8 243.1,348.1 243.9,347.5 244.7,346.9 245.5,346.7 246.3,345.7 247.1,345.7 247.9,345.5 248.7,345.8 249.5,346.1 250.3,346.6 251.1,347.2 251.9,347.0 252.7,347.7 253.5,347.4 254.3,347.7 255.1,347.3 255.9,347.2 256.7,346.9 257.5,347.1 258.3,346.6 259.1,346.7 259.9,346.1 260.7,346.0 261.5,346.5 262.3,345.5 263.1,345.7 263.9,345.9 264.7,346.5 265.5,345.8 266.3,346.2 267.1,346.3 267.9,345.5 268.7,345.0 269.5,344.9 270.3,343.5 271.1,342.5 271.9,342.3 272.7,341.1 273.5,341.0 274.3,340.3 275.1,339.4 275.9,340.2 276.7,340.6 277.5,341.1 278.3,342.2 279.1,342.0 279.9,342.7 280.7,343.4 281.5,344.0 282.3,343.4 283.1,343.6 283.9,343.6 284.7,343.3 285.5,343.6 286.3,343.3 287.1,343.5 287.9,343.6 288.7,343.2 289.5,343.2 290.3,343.1 291.1,343.1 291.9,342.8 292.7,342.9 293.5,343.3 294.3,342.9 295.1,344.1 295.9,343.0 296.7,343.7 297.5,343.7 298.3,345.0 299.1,346.2 299.9,347.7 300.7,349.3 301.5,349.7 302.3,349.4 303.1,349.0 303.9,347.2 304.7,345.7 305.5,344.4 306.3,342.6 307.1,341.5 307.9,340.7 308.7,340.2 309.5,339.7 310.3,340.1 311.1,340.1 311.9,340.5 312.7,340.7 313.5,340.6 314.3,340.2 315.1,341.1 315.9,341.0 316.7,340.6 317.5,340.7 318.3,340.9 319.1,340.8 319.9,340.8 320.7,341.1 321.5,341.0 322.3,341.3 323.1,341.1 323.9,341.3 324.7,342.3 325.5,340.7 326.3,340.4 327.1,339.2 327.9,338.0 328.7,336.7 329.5,336.7 330.3,336.5 331.1,336.7 331.9,337.1 332.7,338.3 333.5,339.1 334.3,339.7 335.1,340.9 335.9,341.6 336.7,342.0 337.5,342.0 338.3,341.9 339.1,342.3 339.9,342.2 340.7,342.7 341.5,342.2 342.3,341.7 343.1,342.3 343.9,342.7 344.7,342.1 345.5,342.0 346.3,341.8 347.1,342.6 347.9,341.9 348.7,341.9 349.5,341.9 350.3,341.0 351.1,340.7 351.9,339.5 352.7,338.7 353.5,337.8 354.3,336.8 355.1,335.6 355.9,335.4 356.7,334.8 357.5,334.4 358.3,335.1 359.1,335.0 359.9,335.3 360.7,334.6 361.5,335.5 362.3,335.7 363.1,335.8 363.9,336.2 364.7,335.9 365.5,336.8 366.3,336.5 367.1,336.5 367.9,335.8 368.7,336.0 369.5,337.3 370.3,337.2 371.1,337.9 371.9,338.3 372.7,339.4 373.5,340.7 374.3,341.1 375.1,342.1 375.9,341.2 376.7,341.1 377.5,340.2 378.3,339.6 379.1,339.1 379.9,337.9 380.7,338.0 381.5,337.8 382.3,338.1 383.1,337.9 383.9,337.8 384.7,338.2 385.5,338.5 386.3,338.4 387.1,338.3 387.9,338.5 388.7,338.0 389.5,338.4 390.3,338.5 391.1,338.5 391.9,338.6 392.7,338.9 393.5,339.2 394.3,339.9 395.1,339.6 395.9,340.2 396.7,341.5 397.5,342.0 398.3,342.2 399.1,343.2 399.9,342.5 400.7,341.8 401.5,340.8 402.3,339.7 403.1,339.2 403.9,338.4 404.7,339.2 405.5,338.6 406.3,338.6 407.1,338.6 407.9,339.0 408.7,339.4 409.5,339.4 410.3,339.1 411.1,339.5 411.9,339.3 412.7,340.4 413.5,340.3 414.3,340.3 415.1,340.5 415.9,340.5 416.7,340.8 417.5,341.5 418.3,341.6 419.1,342.4 419.9,343.1 420.7,343.9 421.5,344.7 422.3,345.6 423.1,345.7 423.9,346.2 424.7,345.4 425.5,344.9 426.3,344.0 427.1,343.5 427.9,342.2 428.7,341.8 429.5,340.3 430.3,340.1 431.1,339.2 431.9,339.7 432.7,339.1 433.5,339.5 434.3,339.3 435.1,339.4 435.9,339.8 436.7,339.3 437.5,339.5 438.3,340.5 439.1,339.9 439.9,340.5 440.7,340.1 441.5,339.9 442.3,340.4 443.1,340.9 443.9,340.7 444.7,340.7 445.5,341.2 446.3,340.7 447.1,341.2 447.9,341.1 448.7,340.7 449.5,341.3 450.3,341.4 451.1,341.0 451.9,341.1 452.7,340.9 453.5,340.7 454.3,341.3 455.1,340.7 455.9,341.2 456.7,340.9 457.5,340.7 458.3,341.2 459.1,341.1 459.9,341.6 460.7,341.0 461.5,341.1 462.3,341.1 463.1,341.0 463.9,341.4 464.7,341.5 465.5,341.2 466.3,340.7 467.1,341.2 467.9,341.0 468.7,340.9 469.5,340.6 470.3,341.3 471.1,341.4 471.9,341.1 472.7,341.2 473.5,341.6 474.3,341.6 475.1,341.1 475.9,340.2 476.7,341.2 477.5,341.1 478.3,341.2 479.1,340.9 479.9,340.7 480.7,341.2 481.5,340.9 482.3,341.1 483.1,341.2 483.9,341.1 484.7,340.6 485.5,341.2 486.3,340.9 487.1,341.0 487.9,341.2 488.7,340.6 489.5,340.9 490.3,340.5 491.1,340.9 491.9,341.1 492.7,341.0 493.5,340.9 494.3,341.2 495.1,340.9 495.9,340.5 496.7,341.3 497.5,341.1 498.3,341.2 499.1,340.9 499.9,340.9 500.7,340.8 501.5,340.4 502.3,340.9 503.1,340.8 503.9,341.5 504.7,340.4 505.5,341.0 506.3,340.9 507.1,341.0 507.9,340.9 508.7,341.1 509.5,341.2 510.3,340.5 511.1,341.2 511.9,340.9 512.7,340.7 513.5,340.4 514.3,340.4 515.1,341.0 515.9,340.6 516.7,340.6" fill="none" stroke="#e0643a" stroke-width="0.65" stroke-linejoin="round"/><path d="M37.5,367.7 38.3,368.0 39.1,367.3 39.9,368.1 40.7,368.2 41.5,367.6 42.3,367.9 43.1,367.8 43.9,367.5 44.7,367.3 45.5,367.0 46.3,368.4 47.1,368.4 47.9,369.9 48.7,370.0 49.5,370.3 50.3,370.3 51.1,371.1 51.9,370.4 52.7,371.0 53.5,370.2 54.3,370.3 55.1,369.5 55.9,370.8 56.7,369.8 57.5,369.5 58.3,369.8 59.1,369.1 59.9,369.5 60.7,368.8 61.5,369.3 62.3,368.8 63.1,368.5 63.9,369.0 64.7,368.8 65.5,369.5 66.3,369.4 67.1,369.7 67.9,369.6 68.7,369.5 69.5,369.7 70.3,370.1 71.1,369.8 71.9,369.7 72.7,369.8 73.5,370.3 74.3,370.4 75.1,371.7 75.9,371.0 76.7,371.5 77.5,372.1 78.3,372.9 79.1,372.9 79.9,373.1 80.7,373.4 81.5,373.8 82.3,374.4 83.1,373.8 83.9,374.2 84.7,374.1 85.5,374.5 86.3,374.6 87.1,374.1 87.9,375.5 88.7,374.8 89.5,374.6 90.3,374.6 91.1,374.9 91.9,375.0 92.7,375.3 93.5,375.2 94.3,375.4 95.1,374.8 95.9,375.1 96.7,375.1 97.5,375.6 98.3,375.8 99.1,375.2 99.9,375.7 100.7,376.1 101.5,376.1 102.3,375.2 103.1,375.5 103.9,375.0 104.7,374.3 105.5,374.6 106.3,373.0 107.1,372.8 107.9,372.7 108.7,372.3 109.5,372.0 110.3,372.5 111.1,372.5 111.9,372.3 112.7,372.4 113.5,372.0 114.3,371.6 115.1,372.8 115.9,371.7 116.7,372.8 117.5,372.0 118.3,372.1 119.1,372.1 119.9,372.7 120.7,372.5 121.5,373.8 122.3,373.9 123.1,374.2 123.9,374.2 124.7,374.4 125.5,374.1 126.3,374.4 127.1,373.7 127.9,372.4 128.7,373.2 129.5,371.6 130.3,372.9 131.1,371.8 131.9,372.6 132.7,373.0 133.5,373.0 134.3,372.8 135.1,373.8 135.9,372.9 136.7,373.2 137.5,374.2 138.3,373.4 139.1,373.7 139.9,373.7 140.7,373.2 141.5,373.1 142.3,372.8 143.1,372.7 143.9,372.8 144.7,372.6 145.5,372.4 146.3,372.7 147.1,372.4 147.9,372.5 148.7,372.7 149.5,373.6 150.3,374.1 151.1,373.8 151.9,373.3 152.7,373.9 153.5,374.1 154.3,373.7 155.1,373.3 155.9,373.1 156.7,372.7 157.5,371.6 158.3,372.0 159.1,371.5 159.9,371.7 160.7,372.0 161.5,372.1 162.3,371.6 163.1,371.0 163.9,371.0 164.7,371.2 165.5,370.6 166.3,370.8 167.1,370.9 167.9,371.0 168.7,370.5 169.5,370.6 170.3,370.9 171.1,370.5 171.9,369.8 172.7,370.5 173.5,370.5 174.3,370.2 175.1,370.3 175.9,369.8 176.7,370.7 177.5,370.4 178.3,370.0 179.1,370.3 179.9,370.2 180.7,369.9 181.5,369.2 182.3,369.1 183.1,370.8 183.9,369.7 184.7,369.9 185.5,370.2 186.3,369.9 187.1,370.5 187.9,369.8 188.7,370.4 189.5,369.5 190.3,370.5 191.1,370.6 191.9,370.5 192.7,370.6 193.5,370.6 194.3,370.9 195.1,371.0 195.9,370.3 196.7,371.1 197.5,370.5 198.3,370.9 199.1,370.8 199.9,371.1 200.7,370.7 201.5,370.9 202.3,370.5 203.1,370.2 203.9,370.7 204.7,370.4 205.5,370.2 206.3,370.2 207.1,369.3 207.9,369.8 208.7,369.0 209.5,369.3 210.3,369.0 211.1,369.0 211.9,368.9 212.7,368.5 213.5,368.1 214.3,368.6 215.1,368.7 215.9,368.6 216.7,369.0 217.5,368.3 218.3,369.2 219.1,369.4 219.9,369.0 220.7,369.9 221.5,369.9 222.3,369.3 223.1,369.5 223.9,369.8 224.7,369.9 225.5,369.9 226.3,369.2 227.1,369.1 227.9,369.3 228.7,369.4 229.5,369.1 230.3,369.2 231.1,369.5 231.9,369.4 232.7,369.1 233.5,368.6 234.3,368.8 235.1,369.1 235.9,369.2 236.7,369.2 237.5,368.4 238.3,368.5 239.1,368.2 239.9,367.5 240.7,368.1 241.5,367.8 242.3,368.8 243.1,368.4 243.9,367.9 244.7,368.1 245.5,368.2 246.3,368.5 247.1,368.1 247.9,368.3 248.7,367.9 249.5,368.1 250.3,368.1 251.1,367.9 251.9,367.6 252.7,368.0 253.5,367.5 254.3,368.1 255.1,367.6 255.9,367.5 256.7,368.4 257.5,367.6 258.3,367.8 259.1,367.4 259.9,367.6 260.7,367.8 261.5,367.6 262.3,368.4 263.1,367.8 263.9,367.7 264.7,368.7 265.5,368.8 266.3,368.1 267.1,369.0 267.9,369.8 268.7,369.5 269.5,370.0 270.3,370.3 271.1,369.8 271.9,370.5 272.7,371.1 273.5,371.3 274.3,370.8 275.1,370.7 275.9,370.9 276.7,370.7 277.5,370.7 278.3,370.2 279.1,370.4 279.9,370.5 280.7,370.5 281.5,369.6 282.3,370.4 283.1,370.1 283.9,370.0 284.7,369.3 285.5,369.9 286.3,369.2 287.1,368.8 287.9,369.7 288.7,369.5 289.5,369.4 290.3,369.3 291.1,369.1 291.9,369.3 292.7,369.0 293.5,369.1 294.3,369.2 295.1,368.4 295.9,368.2 296.7,368.3 297.5,367.2 298.3,367.3 299.1,367.5 299.9,367.0 300.7,368.2 301.5,368.7 302.3,368.2 303.1,368.7 303.9,369.7 304.7,370.1 305.5,369.3 306.3,370.1 307.1,369.9 307.9,369.4 308.7,369.9 309.5,369.8 310.3,370.0 311.1,370.0 311.9,369.9 312.7,370.0 313.5,369.9 314.3,370.2 315.1,370.3 315.9,370.3 316.7,369.7 317.5,369.7 318.3,369.8 319.1,370.5 319.9,370.2 320.7,369.8 321.5,369.7 322.3,369.8 323.1,370.4 323.9,370.4 324.7,371.2 325.5,372.1 326.3,372.0 327.1,372.8 327.9,372.4 328.7,373.4 329.5,373.5 330.3,373.0 331.1,373.6 331.9,372.7 332.7,372.1 333.5,371.8 334.3,371.8 335.1,370.6 335.9,370.8 336.7,370.2 337.5,370.6 338.3,370.2 339.1,370.3 339.9,370.6 340.7,370.3 341.5,370.5 342.3,370.5 343.1,370.3 343.9,370.2 344.7,370.1 345.5,370.3 346.3,370.5 347.1,370.8 347.9,370.8 348.7,370.0 349.5,370.6 350.3,370.8 351.1,371.3 351.9,371.4 352.7,370.8 353.5,371.6 354.3,371.1 355.1,371.6 355.9,371.6 356.7,371.8 357.5,372.5 358.3,371.8 359.1,371.8 359.9,372.0 360.7,372.4 361.5,371.4 362.3,372.6 363.1,371.7 363.9,371.7 364.7,372.0 365.5,372.2 366.3,372.9 367.1,372.3 367.9,371.8 368.7,371.9 369.5,371.6 370.3,372.1 371.1,371.9 371.9,371.1 372.7,371.2 373.5,369.6 374.3,369.6 375.1,369.1 375.9,369.1 376.7,368.7 377.5,369.7 378.3,369.1 379.1,369.5 379.9,370.0 380.7,370.3 381.5,370.2 382.3,369.1 383.1,369.9 383.9,370.0 384.7,370.0 385.5,370.1 386.3,370.2 387.1,370.7 387.9,370.5 388.7,370.3 389.5,370.2 390.3,370.8 391.1,370.1 391.9,370.7 392.7,370.0 393.5,369.7 394.3,369.7 395.1,369.2 395.9,369.3 396.7,368.3 397.5,367.9 398.3,369.3 399.1,368.9 399.9,368.3 400.7,370.4 401.5,369.9 402.3,371.7 403.1,372.0 403.9,371.9 404.7,371.6 405.5,371.2 406.3,371.7 407.1,371.1 407.9,371.4 408.7,370.8 409.5,370.1 410.3,370.3 411.1,370.4 411.9,370.0 412.7,370.1 413.5,369.5 414.3,370.2 415.1,369.3 415.9,369.5 416.7,368.6 417.5,369.3 418.3,369.3 419.1,368.8 419.9,368.4 420.7,368.0 421.5,368.4 422.3,368.4 423.1,367.8 423.9,368.4 424.7,368.7 425.5,368.3 426.3,369.0 427.1,368.8 427.9,369.5 428.7,368.7 429.5,369.5 430.3,369.5 431.1,368.9 431.9,369.4 432.7,369.5 433.5,370.2 434.3,369.8 435.1,370.0 435.9,370.1 436.7,370.9 437.5,369.9 438.3,370.7 439.1,369.9 439.9,369.4 440.7,369.7 441.5,369.6 442.3,369.9 443.1,369.5 443.9,369.7 444.7,370.7 445.5,370.1 446.3,370.1 447.1,370.6 447.9,369.4 448.7,370.2 449.5,369.8 450.3,370.0 451.1,369.8 451.9,370.0 452.7,370.4 453.5,370.4 454.3,370.1 455.1,370.3 455.9,369.6 456.7,369.0 457.5,370.4 458.3,370.7 459.1,370.2 459.9,369.8 460.7,370.0 461.5,370.4 462.3,369.6 463.1,370.0 463.9,370.2 464.7,369.6 465.5,370.7 466.3,370.3 467.1,370.6 467.9,369.6 468.7,370.1 469.5,370.5 470.3,370.2 471.1,370.4 471.9,369.4 472.7,370.0 473.5,369.3 474.3,369.8 475.1,370.1 475.9,370.0 476.7,369.6 477.5,370.1 478.3,370.2 479.1,370.0 479.9,370.3 480.7,370.4 481.5,370.4 482.3,369.9 483.1,370.2 483.9,369.8 484.7,370.0 485.5,370.4 486.3,370.0 487.1,369.8 487.9,369.8 488.7,370.2 489.5,370.6 490.3,370.3 491.1,369.9 491.9,370.3 492.7,370.3 493.5,370.5 494.3,369.8 495.1,370.2 495.9,369.9 496.7,369.8 497.5,370.4 498.3,370.2 499.1,370.0 499.9,370.5 500.7,370.1 501.5,369.7 502.3,370.3 503.1,369.7 503.9,369.7 504.7,369.9 505.5,369.9 506.3,370.3 507.1,369.9 507.9,369.4 508.7,369.8 509.5,370.1 510.3,370.0 511.1,370.0 511.9,369.6 512.7,369.9 513.5,370.2 514.3,370.2 515.1,369.7 515.9,369.7 516.7,369.7" fill="none" stroke="#4a88c8" stroke-width="0.6" stroke-linejoin="round"/></g><rect x="200.5" y="61.5" width="287.2" height="323.5" fill="#3a3a3a" fill-opacity="0.437"/><rect x="2" y="88.7" width="567.5" height="1.4" fill="#d9d9d9"/><rect x="200.5" y="88.7" width="287.2" height="1.4" fill="#e2e2e2"/><rect x="2" y="119.2" width="567.5" height="1.4" fill="#d9d9d9"/><rect x="200.5" y="119.2" width="287.2" height="1.4" fill="#e2e2e2"/><rect x="2" y="148.0" width="567.5" height="1.4" fill="#d9d9d9"/><rect x="200.5" y="148.0" width="287.2" height="1.4" fill="#e2e2e2"/><rect x="2" y="177.5" width="567.5" height="1.4" fill="#d9d9d9"/><rect x="200.5" y="177.5" width="287.2" height="1.4" fill="#e2e2e2"/><rect x="2" y="207.9" width="567.5" height="1.4" fill="#d9d9d9"/><rect x="200.5" y="207.9" width="287.2" height="1.4" fill="#e2e2e2"/><rect x="2" y="237.1" width="567.5" height="1.4" fill="#d9d9d9"/><rect x="200.5" y="237.1" width="287.2" height="1.4" fill="#e2e2e2"/><rect x="2" y="266.6" width="567.5" height="1.4" fill="#d9d9d9"/><rect x="200.5" y="266.6" width="287.2" height="1.4" fill="#e2e2e2"/><rect x="2" y="296.3" width="567.5" height="1.4" fill="#d9d9d9"/><rect x="200.5" y="296.3" width="287.2" height="1.4" fill="#e2e2e2"/><rect x="2" y="325.6" width="567.5" height="1.4" fill="#d9d9d9"/><rect x="200.5" y="325.6" width="287.2" height="1.4" fill="#e2e2e2"/><rect x="2" y="355.1" width="567.5" height="1.4" fill="#d9d9d9"/><rect x="200.5" y="355.1" width="287.2" height="1.4" fill="#e2e2e2"/><rect x="2" y="60.8" width="567.5" height="0.9" fill="#d4d4d4"/><rect x="2" y="384.6" width="567.5" height="0.8" fill="#cfcfcf"/><circle cx="204.0" cy="63.0" r="1.35" fill="#6c6c6c"/><circle cx="209.3" cy="63.0" r="1.35" fill="#6c6c6c"/><circle cx="214.8" cy="63.0" r="1.35" fill="#33338c"/><circle cx="220.4" cy="63.0" r="1.35" fill="#33338c"/><circle cx="225.7" cy="63.0" r="1.35" fill="#33338c"/><circle cx="231.1" cy="63.0" r="1.35" fill="#33338c"/><circle cx="236.6" cy="63.0" r="1.35" fill="#33338c"/><circle cx="242.0" cy="63.0" r="1.35" fill="#33338c"/><circle cx="247.6" cy="63.0" r="1.35" fill="#33338c"/><circle cx="253.3" cy="63.0" r="1.35" fill="#33338c"/><circle cx="258.9" cy="63.0" r="1.35" fill="#33338c"/><circle cx="264.6" cy="63.0" r="1.35" fill="#33338c"/><circle cx="270.5" cy="63.0" r="1.35" fill="#33338c"/><circle cx="276.0" cy="63.0" r="1.35" fill="#33338c"/><circle cx="281.7" cy="63.0" r="1.35" fill="#33338c"/><circle cx="287.2" cy="63.0" r="1.35" fill="#33338c"/><circle cx="292.8" cy="63.0" r="1.35" fill="#33338c"/><circle cx="298.2" cy="63.0" r="1.35" fill="#33338c"/><circle cx="303.8" cy="63.0" r="1.35" fill="#33338c"/><circle cx="309.5" cy="63.0" r="1.35" fill="#33338c"/><circle cx="314.8" cy="63.0" r="1.35" fill="#33338c"/><circle cx="320.1" cy="63.0" r="1.35" fill="#33338c"/><circle cx="325.6" cy="63.0" r="1.35" fill="#33338c"/><circle cx="331.2" cy="63.0" r="1.35" fill="#33338c"/><circle cx="336.5" cy="63.0" r="1.35" fill="#33338c"/><circle cx="342.1" cy="63.0" r="1.35" fill="#33338c"/><circle cx="347.6" cy="63.0" r="1.35" fill="#33338c"/><circle cx="353.1" cy="63.0" r="1.35" fill="#33338c"/><circle cx="358.7" cy="63.0" r="1.35" fill="#33338c"/><circle cx="364.2" cy="63.0" r="1.35" fill="#33338c"/><circle cx="369.9" cy="63.0" r="1.35" fill="#33338c"/><circle cx="375.3" cy="63.0" r="1.35" fill="#33338c"/><circle cx="380.7" cy="63.0" r="1.35" fill="#33338c"/><circle cx="386.1" cy="63.0" r="1.35" fill="#33338c"/><circle cx="391.7" cy="63.0" r="1.35" fill="#33338c"/><circle cx="397.2" cy="63.0" r="1.35" fill="#33338c"/><circle cx="402.7" cy="63.0" r="1.35" fill="#33338c"/><circle cx="408.2" cy="63.0" r="1.35" fill="#33338c"/><circle cx="413.5" cy="63.0" r="1.35" fill="#33338c"/><circle cx="418.8" cy="63.0" r="1.35" fill="#33338c"/><circle cx="424.5" cy="63.0" r="1.35" fill="#33338c"/><circle cx="430.0" cy="63.0" r="1.35" fill="#33338c"/><circle cx="435.7" cy="63.0" r="1.35" fill="#33338c"/><circle cx="441.3" cy="63.0" r="1.35" fill="#33338c"/><circle cx="446.9" cy="63.0" r="1.35" fill="#33338c"/><circle cx="452.5" cy="63.0" r="1.35" fill="#33338c"/><circle cx="458.0" cy="63.0" r="1.35" fill="#33338c"/><circle cx="463.5" cy="63.0" r="1.35" fill="#33338c"/><circle cx="468.9" cy="63.0" r="1.35" fill="#33338c"/><circle cx="474.5" cy="63.0" r="1.35" fill="#33338c"/><circle cx="479.8" cy="63.0" r="1.35" fill="#33338c"/><circle cx="485.3" cy="63.0" r="1.35" fill="#33338c"/><line x1="200.5" y1="356" x2="200.5" y2="385" stroke="#333" stroke-width="0.5"/></svg>
<div class="t" style="left:182.8px;top:368.2px;font-size:4.6px;color:#222;transform:rotate(-90deg);transform-origin:center;width:30px;text-align:center;">Increase Pace</div>
<div class="t" style="left:34.00px;top:65.74px;font-size:20px;color:#4a4a4a;font-weight:normal;transform-origin:0 0;transform:scale(0.2208,0.2400) translateX(-100%);filter:grayscale(1);">1</div>
<div class="t" style="left:34.00px;top:74.74px;font-size:20px;color:#4a4a4a;font-weight:normal;transform-origin:0 0;transform:scale(0.2208,0.2400) translateX(-100%);filter:grayscale(1);">0</div>
<div class="t" style="left:34.00px;top:83.74px;font-size:20px;color:#4a4a4a;font-weight:normal;transform-origin:0 0;transform:scale(0.2208,0.2400) translateX(-100%);filter:grayscale(1);">-1</div>
<div class="t" style="left:-42.50px;top:63.20px;width:100px;height:20px;line-height:20px;text-align:center;font-size:20px;color:#333;transform:rotate(-90deg) scale(0.21);transform-origin:50px 10px;filter:grayscale(1);">V</div>
<div class="t" style="left:34.00px;top:92.24px;font-size:20px;color:#4a4a4a;font-weight:normal;transform-origin:0 0;transform:scale(0.2208,0.2400) translateX(-100%);filter:grayscale(1);">1</div>
<div class="t" style="left:34.00px;top:102.24px;font-size:20px;color:#4a4a4a;font-weight:normal;transform-origin:0 0;transform:scale(0.2208,0.2400) translateX(-100%);filter:grayscale(1);">0</div>
<div class="t" style="left:34.00px;top:111.74px;font-size:20px;color:#4a4a4a;font-weight:normal;transform-origin:0 0;transform:scale(0.2208,0.2400) translateX(-100%);filter:grayscale(1);">-1</div>
<div class="t" style="left:-42.50px;top:91.30px;width:100px;height:20px;line-height:20px;text-align:center;font-size:20px;color:#333;transform:rotate(-90deg) scale(0.21);transform-origin:50px 10px;filter:grayscale(1);">V</div>
<div class="t" style="left:34.00px;top:125.34px;font-size:20px;color:#4a4a4a;font-weight:normal;transform-origin:0 0;transform:scale(0.2208,0.2400) translateX(-100%);filter:grayscale(1);">0.2</div>
<div class="t" style="left:34.00px;top:137.04px;font-size:20px;color:#4a4a4a;font-weight:normal;transform-origin:0 0;transform:scale(0.2208,0.2400) translateX(-100%);filter:grayscale(1);">0.0</div>
<div class="t" style="left:-42.50px;top:121.80px;width:100px;height:20px;line-height:20px;text-align:center;font-size:20px;color:#333;transform:rotate(-90deg) scale(0.21);transform-origin:50px 10px;filter:grayscale(1);">g</div>
<div class="t" style="left:34.00px;top:147.54px;font-size:20px;color:#4a4a4a;font-weight:normal;transform-origin:0 0;transform:scale(0.2208,0.2400) translateX(-100%);filter:grayscale(1);">-0.2</div>
<div class="t" style="left:34.00px;top:155.74px;font-size:20px;color:#4a4a4a;font-weight:normal;transform-origin:0 0;transform:scale(0.2208,0.2400) translateX(-100%);filter:grayscale(1);">-0.4</div>
<div class="t" style="left:34.00px;top:162.94px;font-size:20px;color:#4a4a4a;font-weight:normal;transform-origin:0 0;transform:scale(0.2208,0.2400) translateX(-100%);filter:grayscale(1);">-0.6</div>
<div class="t" style="left:34.00px;top:170.24px;font-size:20px;color:#4a4a4a;font-weight:normal;transform-origin:0 0;transform:scale(0.2208,0.2400) translateX(-100%);filter:grayscale(1);">-0.8</div>
<div class="t" style="left:-42.50px;top:150.60px;width:100px;height:20px;line-height:20px;text-align:center;font-size:20px;color:#333;transform:rotate(-90deg) scale(0.21);transform-origin:50px 10px;filter:grayscale(1);">g</div>
<div class="t" style="left:34.00px;top:181.34px;font-size:20px;color:#4a4a4a;font-weight:normal;transform-origin:0 0;transform:scale(0.2208,0.2400) translateX(-100%);filter:grayscale(1);">-0.8</div>
<div class="t" style="left:34.00px;top:188.74px;font-size:20px;color:#4a4a4a;font-weight:normal;transform-origin:0 0;transform:scale(0.2208,0.2400) translateX(-100%);filter:grayscale(1);">-0.9</div>
<div class="t" style="left:34.00px;top:195.94px;font-size:20px;color:#4a4a4a;font-weight:normal;transform-origin:0 0;transform:scale(0.2208,0.2400) translateX(-100%);filter:grayscale(1);">-1.0</div>
<div class="t" style="left:34.00px;top:203.14px;font-size:20px;color:#4a4a4a;font-weight:normal;transform-origin:0 0;transform:scale(0.2208,0.2400) translateX(-100%);filter:grayscale(1);">-1.1</div>
<div class="t" style="left:-42.50px;top:180.10px;width:100px;height:20px;line-height:20px;text-align:center;font-size:20px;color:#333;transform:rotate(-90deg) scale(0.21);transform-origin:50px 10px;filter:grayscale(1);">g</div>
<div class="t" style="left:34.00px;top:212.54px;font-size:20px;color:#4a4a4a;font-weight:normal;transform-origin:0 0;transform:scale(0.2208,0.2400) translateX(-100%);filter:grayscale(1);">530</div>
<div class="t" style="left:34.00px;top:220.24px;font-size:20px;color:#4a4a4a;font-weight:normal;transform-origin:0 0;transform:scale(0.2208,0.2400) translateX(-100%);filter:grayscale(1);">520</div>
<div class="t" style="left:34.00px;top:227.94px;font-size:20px;color:#4a4a4a;font-weight:normal;transform-origin:0 0;transform:scale(0.2208,0.2400) translateX(-100%);filter:grayscale(1);">510</div>
<div class="t" style="left:34.00px;top:241.74px;font-size:20px;color:#4a4a4a;font-weight:normal;transform-origin:0 0;transform:scale(0.2208,0.2400) translateX(-100%);filter:grayscale(1);">35</div>
<div class="t" style="left:34.00px;top:248.94px;font-size:20px;color:#4a4a4a;font-weight:normal;transform-origin:0 0;transform:scale(0.2208,0.2400) translateX(-100%);filter:grayscale(1);">30</div>
<div class="t" style="left:34.00px;top:256.04px;font-size:20px;color:#4a4a4a;font-weight:normal;transform-origin:0 0;transform:scale(0.2208,0.2400) translateX(-100%);filter:grayscale(1);">25</div>
<div class="t" style="left:34.00px;top:263.04px;font-size:20px;color:#4a4a4a;font-weight:normal;transform-origin:0 0;transform:scale(0.2208,0.2400) translateX(-100%);filter:grayscale(1);">20</div>
<div class="t" style="left:-42.50px;top:239.70px;width:100px;height:20px;line-height:20px;text-align:center;font-size:20px;color:#333;transform:rotate(-90deg) scale(0.21);transform-origin:50px 10px;filter:grayscale(1);">BPM</div>
<div class="t" style="left:34.00px;top:269.04px;font-size:20px;color:#4a4a4a;font-weight:normal;transform-origin:0 0;transform:scale(0.2208,0.2400) translateX(-100%);filter:grayscale(1);">120</div>
<div class="t" style="left:34.00px;top:281.94px;font-size:20px;color:#4a4a4a;font-weight:normal;transform-origin:0 0;transform:scale(0.2208,0.2400) translateX(-100%);filter:grayscale(1);">110</div>
<div class="t" style="left:-42.50px;top:269.20px;width:100px;height:20px;line-height:20px;text-align:center;font-size:20px;color:#333;transform:rotate(-90deg) scale(0.21);transform-origin:50px 10px;filter:grayscale(1);">BPM</div>
<div class="t" style="left:34.00px;top:304.04px;font-size:20px;color:#4a4a4a;font-weight:normal;transform-origin:0 0;transform:scale(0.2208,0.2400) translateX(-100%);filter:grayscale(1);">0</div>
<div class="t" style="left:34.00px;top:318.24px;font-size:20px;color:#4a4a4a;font-weight:normal;transform-origin:0 0;transform:scale(0.2208,0.2400) translateX(-100%);filter:grayscale(1);">-60</div>
<div class="t" style="left:-42.50px;top:298.90px;width:100px;height:20px;line-height:20px;text-align:center;font-size:20px;color:#333;transform:rotate(-90deg) scale(0.21);transform-origin:50px 10px;filter:grayscale(1);">L/s</div>
<div class="t" style="left:34.00px;top:328.74px;font-size:20px;color:#4a4a4a;font-weight:normal;transform-origin:0 0;transform:scale(0.2208,0.2400) translateX(-100%);filter:grayscale(1);">4.6</div>
<div class="t" style="left:34.00px;top:337.74px;font-size:20px;color:#4a4a4a;font-weight:normal;transform-origin:0 0;transform:scale(0.2208,0.2400) translateX(-100%);filter:grayscale(1);">4.4</div>
<div class="t" style="left:34.00px;top:346.64px;font-size:20px;color:#4a4a4a;font-weight:normal;transform-origin:0 0;transform:scale(0.2208,0.2400) translateX(-100%);filter:grayscale(1);">4.2</div>
<div class="t" style="left:-42.50px;top:328.20px;width:100px;height:20px;line-height:20px;text-align:center;font-size:20px;color:#333;transform:rotate(-90deg) scale(0.21);transform-origin:50px 10px;filter:grayscale(1);">%CO2</div>
<div class="t" style="left:34.00px;top:357.94px;font-size:20px;color:#4a4a4a;font-weight:normal;transform-origin:0 0;transform:scale(0.2208,0.2400) translateX(-100%);filter:grayscale(1);">17</div>
<div class="t" style="left:34.00px;top:369.74px;font-size:20px;color:#4a4a4a;font-weight:normal;transform-origin:0 0;transform:scale(0.2208,0.2400) translateX(-100%);filter:grayscale(1);">16</div>
<div class="t" style="left:34.00px;top:382.14px;font-size:20px;color:#4a4a4a;font-weight:normal;transform-origin:0 0;transform:scale(0.2208,0.2400) translateX(-100%);filter:grayscale(1);">15</div>
<div class="t" style="left:-42.50px;top:357.70px;width:100px;height:20px;line-height:20px;text-align:center;font-size:20px;color:#333;transform:rotate(-90deg) scale(0.21);transform-origin:50px 10px;filter:grayscale(1);">%O2</div>
<svg width="768" height="432" style="left:0;top:0"><line x1="36" x2="37.5" y1="68" y2="68" stroke="#777" stroke-width="0.5"/><line x1="36" x2="37.5" y1="77" y2="77" stroke="#777" stroke-width="0.5"/><line x1="36" x2="37.5" y1="86" y2="86" stroke="#777" stroke-width="0.5"/><rect x="4.8" y="63.6" width="5" height="4.4" fill="#e2e2e2" stroke="#c6c6c6" stroke-width="0.4"/><path d="M6.2,65.1 L8.4,65.1 L7.3,66.6 Z" fill="#222"/><rect x="4.8" y="75.8" width="5" height="4.6" fill="#e2e2e2" stroke="#c6c6c6" stroke-width="0.4"/><path d="M5.8,78.1 H8.8 M7.3,76.6 V79.6" stroke="#222" stroke-width="0.8"/><rect x="4.8" y="83.0" width="5" height="4.6" fill="#e2e2e2" stroke="#c6c6c6" stroke-width="0.4"/><path d="M5.8,85.3 H8.8" stroke="#333" stroke-width="0.7"/><line x1="36" x2="37.5" y1="94.5" y2="94.5" stroke="#777" stroke-width="0.5"/><line x1="36" x2="37.5" y1="104.5" y2="104.5" stroke="#777" stroke-width="0.5"/><line x1="36" x2="37.5" y1="114" y2="114" stroke="#777" stroke-width="0.5"/><rect x="4.8" y="91.7" width="5" height="4.4" fill="#e2e2e2" stroke="#c6c6c6" stroke-width="0.4"/><path d="M6.2,93.2 L8.4,93.2 L7.3,94.7 Z" fill="#222"/><rect x="4.8" y="103.9" width="5" height="4.6" fill="#e2e2e2" stroke="#c6c6c6" stroke-width="0.4"/><path d="M5.8,106.2 H8.8 M7.3,104.7 V107.7" stroke="#222" stroke-width="0.8"/><rect x="4.8" y="111.1" width="5" height="4.6" fill="#e2e2e2" stroke="#c6c6c6" stroke-width="0.4"/><path d="M5.8,113.4 H8.8" stroke="#333" stroke-width="0.7"/><line x1="36" x2="37.5" y1="127.6" y2="127.6" stroke="#777" stroke-width="0.5"/><line x1="36" x2="37.5" y1="139.3" y2="139.3" stroke="#777" stroke-width="0.5"/><rect x="4.8" y="122.2" width="5" height="4.4" fill="#e2e2e2" stroke="#c6c6c6" stroke-width="0.4"/><path d="M6.2,123.7 L8.4,123.7 L7.3,125.2 Z" fill="#222"/><rect x="4.8" y="134.4" width="5" height="4.6" fill="#e2e2e2" stroke="#c6c6c6" stroke-width="0.4"/><path d="M5.8,136.7 H8.8 M7.3,135.2 V138.2" stroke="#222" stroke-width="0.8"/><rect x="4.8" y="141.6" width="5" height="4.6" fill="#e2e2e2" stroke="#c6c6c6" stroke-width="0.4"/><path d="M5.8,143.9 H8.8" stroke="#333" stroke-width="0.7"/><line x1="36" x2="37.5" y1="149.8" y2="149.8" stroke="#777" stroke-width="0.5"/><line x1="36" x2="37.5" y1="158" y2="158" stroke="#777" stroke-width="0.5"/><line x1="36" x2="37.5" y1="165.2" y2="165.2" stroke="#777" stroke-width="0.5"/><line x1="36" x2="37.5" y1="172.5" y2="172.5" stroke="#777" stroke-width="0.5"/><rect x="4.8" y="151.0" width="5" height="4.4" fill="#e2e2e2" stroke="#c6c6c6" stroke-width="0.4"/><path d="M6.2,152.5 L8.4,152.5 L7.3,154.0 Z" fill="#222"/><rect x="4.8" y="163.2" width="5" height="4.6" fill="#e2e2e2" stroke="#c6c6c6" stroke-width="0.4"/><path d="M5.8,165.5 H8.8 M7.3,164.0 V167.0" stroke="#222" stroke-width="0.8"/><rect x="4.8" y="170.4" width="5" height="4.6" fill="#e2e2e2" stroke="#c6c6c6" stroke-width="0.4"/><path d="M5.8,172.7 H8.8" stroke="#333" stroke-width="0.7"/><line x1="36" x2="37.5" y1="183.6" y2="183.6" stroke="#777" stroke-width="0.5"/><line x1="36" x2="37.5" y1="191" y2="191" stroke="#777" stroke-width="0.5"/><line x1="36" x2="37.5" y1="198.2" y2="198.2" stroke="#777" stroke-width="0.5"/><line x1="36" x2="37.5" y1="205.4" y2="205.4" stroke="#777" stroke-width="0.5"/><rect x="4.8" y="180.5" width="5" height="4.4" fill="#e2e2e2" stroke="#c6c6c6" stroke-width="0.4"/><path d="M6.2,182.0 L8.4,182.0 L7.3,183.5 Z" fill="#222"/><rect x="4.8" y="192.7" width="5" height="4.6" fill="#e2e2e2" stroke="#c6c6c6" stroke-width="0.4"/><path d="M5.8,195.0 H8.8 M7.3,193.5 V196.5" stroke="#222" stroke-width="0.8"/><rect x="4.8" y="199.9" width="5" height="4.6" fill="#e2e2e2" stroke="#c6c6c6" stroke-width="0.4"/><path d="M5.8,202.2 H8.8" stroke="#333" stroke-width="0.7"/><line x1="36" x2="37.5" y1="214.8" y2="214.8" stroke="#777" stroke-width="0.5"/><line x1="36" x2="37.5" y1="222.5" y2="222.5" stroke="#777" stroke-width="0.5"/><line x1="36" x2="37.5" y1="230.2" y2="230.2" stroke="#777" stroke-width="0.5"/><rect x="4.8" y="210.9" width="5" height="4.4" fill="#e2e2e2" stroke="#c6c6c6" stroke-width="0.4"/><path d="M6.2,212.4 L8.4,212.4 L7.3,213.9 Z" fill="#222"/><rect x="4.8" y="223.1" width="5" height="4.6" fill="#e2e2e2" stroke="#c6c6c6" stroke-width="0.4"/><path d="M5.8,225.4 H8.8 M7.3,223.9 V226.9" stroke="#222" stroke-width="0.8"/><rect x="4.8" y="230.3" width="5" height="4.6" fill="#e2e2e2" stroke="#c6c6c6" stroke-width="0.4"/><path d="M5.8,232.6 H8.8" stroke="#333" stroke-width="0.7"/><line x1="36" x2="37.5" y1="244" y2="244" stroke="#777" stroke-width="0.5"/><line x1="36" x2="37.5" y1="251.2" y2="251.2" stroke="#777" stroke-width="0.5"/><line x1="36" x2="37.5" y1="258.3" y2="258.3" stroke="#777" stroke-width="0.5"/><line x1="36" x2="37.5" y1="265.3" y2="265.3" stroke="#777" stroke-width="0.5"/><rect x="4.8" y="240.1" width="5" height="4.4" fill="#e2e2e2" stroke="#c6c6c6" stroke-width="0.4"/><path d="M6.2,241.6 L8.4,241.6 L7.3,243.1 Z" fill="#222"/><rect x="4.8" y="252.3" width="5" height="4.6" fill="#e2e2e2" stroke="#c6c6c6" stroke-width="0.4"/><path d="M5.8,254.6 H8.8 M7.3,253.1 V256.1" stroke="#222" stroke-width="0.8"/><rect x="4.8" y="259.5" width="5" height="4.6" fill="#e2e2e2" stroke="#c6c6c6" stroke-width="0.4"/><path d="M5.8,261.8 H8.8" stroke="#333" stroke-width="0.7"/><line x1="36" x2="37.5" y1="271.3" y2="271.3" stroke="#777" stroke-width="0.5"/><line x1="36" x2="37.5" y1="284.2" y2="284.2" stroke="#777" stroke-width="0.5"/><rect x="4.8" y="269.6" width="5" height="4.4" fill="#e2e2e2" stroke="#c6c6c6" stroke-width="0.4"/><path d="M6.2,271.1 L8.4,271.1 L7.3,272.6 Z" fill="#222"/><rect x="4.8" y="281.8" width="5" height="4.6" fill="#e2e2e2" stroke="#c6c6c6" stroke-width="0.4"/><path d="M5.8,284.1 H8.8 M7.3,282.6 V285.6" stroke="#222" stroke-width="0.8"/><rect x="4.8" y="289.0" width="5" height="4.6" fill="#e2e2e2" stroke="#c6c6c6" stroke-width="0.4"/><path d="M5.8,291.3 H8.8" stroke="#333" stroke-width="0.7"/><line x1="36" x2="37.5" y1="306.3" y2="306.3" stroke="#777" stroke-width="0.5"/><line x1="36" x2="37.5" y1="320.5" y2="320.5" stroke="#777" stroke-width="0.5"/><rect x="4.8" y="299.3" width="5" height="4.4" fill="#e2e2e2" stroke="#c6c6c6" stroke-width="0.4"/><path d="M6.2,300.8 L8.4,300.8 L7.3,302.3 Z" fill="#222"/><rect x="4.8" y="311.5" width="5" height="4.6" fill="#e2e2e2" stroke="#c6c6c6" stroke-width="0.4"/><path d="M5.8,313.8 H8.8 M7.3,312.3 V315.3" stroke="#222" stroke-width="0.8"/><rect x="4.8" y="318.7" width="5" height="4.6" fill="#e2e2e2" stroke="#c6c6c6" stroke-width="0.4"/><path d="M5.8,321.0 H8.8" stroke="#333" stroke-width="0.7"/><line x1="36" x2="37.5" y1="331" y2="331" stroke="#777" stroke-width="0.5"/><line x1="36" x2="37.5" y1="340" y2="340" stroke="#777" stroke-width="0.5"/><line x1="36" x2="37.5" y1="348.9" y2="348.9" stroke="#777" stroke-width="0.5"/><rect x="4.8" y="328.6" width="5" height="4.4" fill="#e2e2e2" stroke="#c6c6c6" stroke-width="0.4"/><path d="M6.2,330.1 L8.4,330.1 L7.3,331.6 Z" fill="#222"/><rect x="4.8" y="340.8" width="5" height="4.6" fill="#e2e2e2" stroke="#c6c6c6" stroke-width="0.4"/><path d="M5.8,343.1 H8.8 M7.3,341.6 V344.6" stroke="#222" stroke-width="0.8"/><rect x="4.8" y="348.0" width="5" height="4.6" fill="#e2e2e2" stroke="#c6c6c6" stroke-width="0.4"/><path d="M5.8,350.3 H8.8" stroke="#333" stroke-width="0.7"/><line x1="36" x2="37.5" y1="360.2" y2="360.2" stroke="#777" stroke-width="0.5"/><line x1="36" x2="37.5" y1="372" y2="372" stroke="#777" stroke-width="0.5"/><line x1="36" x2="37.5" y1="384.4" y2="384.4" stroke="#777" stroke-width="0.5"/><rect x="4.8" y="358.1" width="5" height="4.4" fill="#e2e2e2" stroke="#c6c6c6" stroke-width="0.4"/><path d="M6.2,359.6 L8.4,359.6 L7.3,361.1 Z" fill="#222"/><rect x="4.8" y="370.3" width="5" height="4.6" fill="#e2e2e2" stroke="#c6c6c6" stroke-width="0.4"/><path d="M5.8,372.6 H8.8 M7.3,371.1 V374.1" stroke="#222" stroke-width="0.8"/><rect x="4.8" y="377.5" width="5" height="4.6" fill="#e2e2e2" stroke="#c6c6c6" stroke-width="0.4"/><path d="M5.8,379.8 H8.8" stroke="#333" stroke-width="0.7"/></svg>
<div class="r" style="left:1px;top:49.6px;width:2.5px;height:355px;background:#e2e8ee;"></div>
<svg width="768" height="432" style="left:0;top:0"><rect x="518.7" y="52.4" width="5.8" height="6.3" fill="#dcdcdc"/><path d="M520.3,55 L523,55 L521.65,56.6Z" fill="#111"/><rect x="519.4" y="63.4" width="5" height="5.5" fill="#dcdcdc"/><path d="M520.7,65.5 L523.1,65.5 L521.9,66.9Z" fill="#888"/><circle cx="564.5" cy="67.1" r="2.5" fill="#9a9a9a"/><circle cx="564" cy="66.5" r="1.1" fill="#ffffff" fill-opacity="0.35"/><rect x="518.5" y="71.6" width="49" height="7" fill="#e3e3e3" stroke="#cfcfcf" stroke-width="0.4"/><rect x="519.6" y="72.8" width="5.4" height="4.6" fill="#d42c3c"/><path d="M563.2,74.3 L566.6,74.3 L564.9,76.2Z" fill="#111"/><rect x="519.4" y="91.5" width="5" height="5.5" fill="#dcdcdc"/><path d="M520.7,93.6 L523.1,93.6 L521.9,95.0Z" fill="#888"/><circle cx="564.5" cy="95.2" r="2.5" fill="#9a9a9a"/><circle cx="564" cy="94.6" r="1.1" fill="#ffffff" fill-opacity="0.35"/><rect x="518.5" y="99.7" width="49" height="7" fill="#e3e3e3" stroke="#cfcfcf" stroke-width="0.4"/><rect x="519.6" y="100.9" width="5.4" height="4.6" fill="#3a5ab0"/><path d="M563.2,102.4 L566.6,102.4 L564.9,104.3Z" fill="#111"/><rect x="519.4" y="122.0" width="5" height="5.5" fill="#dcdcdc"/><path d="M520.7,124.1 L523.1,124.1 L521.9,125.5Z" fill="#888"/><circle cx="564.5" cy="125.7" r="2.5" fill="#9a9a9a"/><circle cx="564" cy="125.1" r="1.1" fill="#ffffff" fill-opacity="0.35"/><rect x="518.5" y="130.2" width="49" height="7" fill="#e3e3e3" stroke="#cfcfcf" stroke-width="0.4"/><rect x="519.6" y="131.4" width="5.4" height="4.6" fill="#2a8a4a"/><path d="M563.2,132.9 L566.6,132.9 L564.9,134.8Z" fill="#111"/><rect x="519.4" y="150.8" width="5" height="5.5" fill="#dcdcdc"/><path d="M520.7,152.9 L523.1,152.9 L521.9,154.3Z" fill="#888"/><circle cx="564.5" cy="154.5" r="2.5" fill="#9a9a9a"/><circle cx="564" cy="153.9" r="1.1" fill="#ffffff" fill-opacity="0.35"/><rect x="518.5" y="159.0" width="49" height="7" fill="#e3e3e3" stroke="#cfcfcf" stroke-width="0.4"/><rect x="519.6" y="160.2" width="5.4" height="4.6" fill="#d040a0"/><path d="M563.2,161.7 L566.6,161.7 L564.9,163.6Z" fill="#111"/><rect x="519.4" y="180.3" width="5" height="5.5" fill="#dcdcdc"/><path d="M520.7,182.4 L523.1,182.4 L521.9,183.8Z" fill="#888"/><circle cx="564.5" cy="184.0" r="2.5" fill="#9a9a9a"/><circle cx="564" cy="183.4" r="1.1" fill="#ffffff" fill-opacity="0.35"/><rect x="518.5" y="188.5" width="49" height="7" fill="#e3e3e3" stroke="#cfcfcf" stroke-width="0.4"/><rect x="519.6" y="189.7" width="5.4" height="4.6" fill="#4a3aa0"/><path d="M563.2,191.2 L566.6,191.2 L564.9,193.1Z" fill="#111"/><rect x="519.4" y="210.7" width="5" height="5.5" fill="#dcdcdc"/><path d="M520.7,212.8 L523.1,212.8 L521.9,214.2Z" fill="#888"/><circle cx="564.5" cy="214.4" r="2.5" fill="#9a9a9a"/><circle cx="564" cy="213.8" r="1.1" fill="#ffffff" fill-opacity="0.35"/><rect x="518.5" y="218.9" width="49" height="7" fill="#e3e3e3" stroke="#cfcfcf" stroke-width="0.4"/><rect x="519.6" y="220.1" width="5.4" height="4.6" fill="#3aaa7a"/><path d="M563.2,221.6 L566.6,221.6 L564.9,223.5Z" fill="#111"/><rect x="519.4" y="239.9" width="5" height="5.5" fill="#dcdcdc"/><path d="M520.7,242.0 L523.1,242.0 L521.9,243.4Z" fill="#888"/><circle cx="564.5" cy="243.6" r="2.5" fill="#3aa040"/><circle cx="564" cy="243.0" r="1.1" fill="#ffffff" fill-opacity="0.35"/><rect x="518.5" y="248.1" width="49" height="7" fill="#e3e3e3" stroke="#cfcfcf" stroke-width="0.4"/><rect x="519.6" y="249.3" width="5.4" height="4.6" fill="#b08a3a"/><path d="M563.2,250.8 L566.6,250.8 L564.9,252.7Z" fill="#111"/><rect x="519.4" y="269.4" width="5" height="5.5" fill="#dcdcdc"/><path d="M520.7,271.5 L523.1,271.5 L521.9,272.9Z" fill="#888"/><circle cx="564.5" cy="273.1" r="2.5" fill="#3aa040"/><circle cx="564" cy="272.5" r="1.1" fill="#ffffff" fill-opacity="0.35"/><rect x="518.5" y="277.6" width="49" height="7" fill="#e3e3e3" stroke="#cfcfcf" stroke-width="0.4"/><rect x="519.6" y="278.8" width="5.4" height="4.6" fill="#6a4ab0"/><path d="M563.2,280.3 L566.6,280.3 L564.9,282.2Z" fill="#111"/><rect x="519.4" y="299.1" width="5" height="5.5" fill="#dcdcdc"/><path d="M520.7,301.2 L523.1,301.2 L521.9,302.6Z" fill="#888"/><circle cx="564.5" cy="302.8" r="2.5" fill="#9a9a9a"/><circle cx="564" cy="302.2" r="1.1" fill="#ffffff" fill-opacity="0.35"/><rect x="518.5" y="307.3" width="49" height="7" fill="#e3e3e3" stroke="#cfcfcf" stroke-width="0.4"/><rect x="519.6" y="308.5" width="5.4" height="4.6" fill="#2a7a3a"/><path d="M563.2,310.0 L566.6,310.0 L564.9,311.9Z" fill="#111"/><rect x="519.4" y="328.4" width="5" height="5.5" fill="#dcdcdc"/><path d="M520.7,330.5 L523.1,330.5 L521.9,331.9Z" fill="#888"/><circle cx="564.5" cy="332.1" r="2.5" fill="#9a9a9a"/><circle cx="564" cy="331.5" r="1.1" fill="#ffffff" fill-opacity="0.35"/><rect x="518.5" y="336.6" width="49" height="7" fill="#e3e3e3" stroke="#cfcfcf" stroke-width="0.4"/><rect x="519.6" y="337.8" width="5.4" height="4.6" fill="#e06030"/><path d="M563.2,339.3 L566.6,339.3 L564.9,341.2Z" fill="#111"/><rect x="519.4" y="357.9" width="5" height="5.5" fill="#dcdcdc"/><path d="M520.7,360.0 L523.1,360.0 L521.9,361.4Z" fill="#888"/><circle cx="564.5" cy="361.6" r="2.5" fill="#9a9a9a"/><circle cx="564" cy="361.0" r="1.1" fill="#ffffff" fill-opacity="0.35"/><rect x="518.5" y="366.1" width="49" height="7" fill="#e3e3e3" stroke="#cfcfcf" stroke-width="0.4"/><rect x="519.6" y="367.3" width="5.4" height="4.6" fill="#3a8ad0"/><path d="M563.2,368.8 L566.6,368.8 L564.9,370.7Z" fill="#111"/></svg>
<div class="t" style="left:527.80px;top:53.48px;font-size:20px;color:#2a2a2a;font-weight:normal;transform-origin:0 0;transform:scale(0.2169,0.2465);filter:grayscale(1);">256 /s</div>
<div class="t" style="left:527.00px;top:64.18px;font-size:20px;color:#2a2a2a;font-weight:normal;transform-origin:0 0;transform:scale(0.2360,0.2682);filter:grayscale(1);">No Sampling</div>
<div class="t" style="left:527.80px;top:72.98px;font-size:20px;color:#222;font-weight:normal;transform-origin:0 0;transform:scale(0.2146,0.2682);">ECG 1</div>
<div class="t" style="left:527.00px;top:92.28px;font-size:20px;color:#2a2a2a;font-weight:normal;transform-origin:0 0;transform:scale(0.2360,0.2682);filter:grayscale(1);">No Sampling</div>
<div class="t" style="left:527.80px;top:101.08px;font-size:20px;color:#222;font-weight:normal;transform-origin:0 0;transform:scale(0.2146,0.2682);">ECG 2</div>
<div class="t" style="left:527.00px;top:122.78px;font-size:20px;color:#2a2a2a;font-weight:normal;transform-origin:0 0;transform:scale(0.2360,0.2682);filter:grayscale(1);">No Sampling</div>
<div class="t" style="left:527.80px;top:131.58px;font-size:20px;color:#222;font-weight:normal;transform-origin:0 0;transform:scale(0.2146,0.2682);">ACCEL X</div>
<div class="t" style="left:527.00px;top:151.58px;font-size:20px;color:#2a2a2a;font-weight:normal;transform-origin:0 0;transform:scale(0.2360,0.2682);filter:grayscale(1);">No Sampling</div>
<div class="t" style="left:527.80px;top:160.38px;font-size:20px;color:#222;font-weight:normal;transform-origin:0 0;transform:scale(0.2146,0.2682);">ACCEL Y</div>
<div class="t" style="left:527.00px;top:181.08px;font-size:20px;color:#2a2a2a;font-weight:normal;transform-origin:0 0;transform:scale(0.2360,0.2682);filter:grayscale(1);">No Sampling</div>
<div class="t" style="left:527.80px;top:189.88px;font-size:20px;color:#222;font-weight:normal;transform-origin:0 0;transform:scale(0.2146,0.2682);">ACCEL Z</div>
<div class="t" style="left:527.00px;top:211.48px;font-size:20px;color:#2a2a2a;font-weight:normal;transform-origin:0 0;transform:scale(0.2360,0.2682);filter:grayscale(1);">No Sampling</div>
<div class="t" style="left:527.80px;top:220.28px;font-size:20px;color:#222;font-weight:normal;transform-origin:0 0;transform:scale(0.2146,0.2682);">Chest Expansion</div>
<div class="t" style="left:527.00px;top:240.68px;font-size:20px;color:#2a2a2a;font-weight:normal;transform-origin:0 0;transform:scale(0.2360,0.2682);filter:grayscale(1);">No Sampling</div>
<div class="t" style="left:527.80px;top:249.48px;font-size:20px;color:#222;font-weight:normal;transform-origin:0 0;transform:scale(0.2146,0.2682);">Respiration Rate</div>
<div class="t" style="left:527.00px;top:270.18px;font-size:20px;color:#2a2a2a;font-weight:normal;transform-origin:0 0;transform:scale(0.2360,0.2682);filter:grayscale(1);">No Sampling</div>
<div class="t" style="left:527.80px;top:278.98px;font-size:20px;color:#222;font-weight:normal;transform-origin:0 0;transform:scale(0.2146,0.2682);">Heart Rate</div>
<div class="t" style="left:527.00px;top:299.88px;font-size:20px;color:#2a2a2a;font-weight:normal;transform-origin:0 0;transform:scale(0.2360,0.2682);filter:grayscale(1);">No Sampling</div>
<div class="t" style="left:527.80px;top:308.68px;font-size:20px;color:#222;font-weight:normal;transform-origin:0 0;transform:scale(0.2146,0.2682);">Flow</div>
<div class="t" style="left:527.00px;top:329.18px;font-size:20px;color:#2a2a2a;font-weight:normal;transform-origin:0 0;transform:scale(0.2360,0.2682);filter:grayscale(1);">No Sampling</div>
<div class="t" style="left:527.80px;top:337.98px;font-size:20px;color:#222;font-weight:normal;transform-origin:0 0;transform:scale(0.2146,0.2682);">CO2</div>
<div class="t" style="left:527.00px;top:358.68px;font-size:20px;color:#2a2a2a;font-weight:normal;transform-origin:0 0;transform:scale(0.2360,0.2682);filter:grayscale(1);">No Sampling</div>
<div class="t" style="left:527.80px;top:367.48px;font-size:20px;color:#222;font-weight:normal;transform-origin:0 0;transform:scale(0.2146,0.2682);">O2</div>
<div class="r" style="left:37.5px;top:385.3px;width:532px;height:8px;background:#ffffff;"></div>
<div class="t" style="left:65.90px;top:387.35px;font-size:20px;color:#333;font-weight:normal;transform-origin:0 0;transform:scale(0.2180,0.2180) translateX(-50%);">27:30</div>
<div class="t" style="left:117.20px;top:387.35px;font-size:20px;color:#333;font-weight:normal;transform-origin:0 0;transform:scale(0.2180,0.2180) translateX(-50%);">27:35</div>
<div class="t" style="left:168.50px;top:387.35px;font-size:20px;color:#333;font-weight:normal;transform-origin:0 0;transform:scale(0.2180,0.2180) translateX(-50%);">27:40</div>
<div class="t" style="left:219.80px;top:387.35px;font-size:20px;color:#333;font-weight:normal;transform-origin:0 0;transform:scale(0.2180,0.2180) translateX(-50%);">27:45</div>
<div class="t" style="left:271.10px;top:387.35px;font-size:20px;color:#333;font-weight:normal;transform-origin:0 0;transform:scale(0.2180,0.2180) translateX(-50%);">27:50</div>
<div class="t" style="left:322.40px;top:387.35px;font-size:20px;color:#333;font-weight:normal;transform-origin:0 0;transform:scale(0.2180,0.2180) translateX(-50%);">27:55</div>
<div class="t" style="left:373.70px;top:387.35px;font-size:20px;color:#333;font-weight:normal;transform-origin:0 0;transform:scale(0.2180,0.2180) translateX(-50%);">28:00</div>
<div class="t" style="left:425.00px;top:387.35px;font-size:20px;color:#333;font-weight:normal;transform-origin:0 0;transform:scale(0.2180,0.2180) translateX(-50%);">28:05</div>
<div class="t" style="left:476.30px;top:387.35px;font-size:20px;color:#333;font-weight:normal;transform-origin:0 0;transform:scale(0.2180,0.2180) translateX(-50%);">28:10</div>
<div class="r" style="left:3.5px;top:385.3px;width:34px;height:17px;background:#f0f0f0;"></div>
<div class="r" style="left:37.5px;top:393.3px;width:532px;height:10px;background:#f3f3f3;border-top:0.5px solid #e0e0e0"></div>
<div class="r" style="left:2px;top:403.2px;width:568px;height:1.8px;background:#c8d4e0;"></div>
<svg width="768" height="432" style="left:0;top:0"><path d="M42.2,396.6 L40.8,398.2 L42.2,399.8" stroke="#333" stroke-width="0.6" fill="none"/><path d="M17.8,391.2 L18.6,392.3 L21.4,392.3 L22.2,391.2 L22.4,394.5 L21,396.6 L19,396.6 L17.6,394.5 Z" fill="#1e1e1e"/><rect x="19" y="394" width="2" height="0.7" fill="#eee"/><rect x="287.2" y="394.6" width="6.4" height="7.6" fill="#d8d8d8"/><path d="M462.6,396.5 L464.1,398.2 L462.6,399.9" stroke="#333" stroke-width="0.6" fill="none"/><rect x="467.5" y="394.5" width="12" height="7.5" fill="#e0e0e0" stroke="#c8c8c8" stroke-width="0.4"/><rect x="469" y="396" width="5" height="4.5" fill="none" stroke="#333" stroke-width="0.5"/><path d="M475,398.2 L478,398.2 M477,396.5 L478.5,398.2 L477,400" stroke="#333" stroke-width="0.6" fill="none"/><rect x="481.5" y="394.5" width="6" height="7.5" fill="#e0e0e0"/><path d="M483,398.2 H486.3" stroke="#333" stroke-width="0.6"/><rect x="489.5" y="394.5" width="19" height="7.5" fill="#e6e6e6"/><rect x="510.5" y="394.5" width="6.5" height="7.5" fill="#e0e0e0"/><path d="M511.8,400.5 L515.8,400.5 L513.8,396.5Z" fill="#222"/><rect x="519" y="387.5" width="14" height="14.5" fill="#cfe4f6" stroke="#5a9ad6" stroke-width="0.8"/><rect x="521" y="390" width="10" height="8" fill="#7fb0dc"/><path d="M521.5,392 L531,392" stroke="#2a4a7a" stroke-width="0.7"/><rect x="534.5" y="386" width="29" height="15.5" fill="#d9d9d9"/><path d="M563,403 L569,397 M565,403 L569,399 M567,403 L569,401" stroke="#b0b0b0" stroke-width="0.5"/><rect x="197" y="388.8" width="7" height="4.6" fill="#fff" stroke="#888" stroke-width="0.5"/></svg>
<div class="t" style="left:499.50px;top:396.29px;font-size:20px;color:#333;font-weight:normal;transform-origin:0 0;transform:scale(0.1974,0.2244) translateX(-50%);">10:1</div>
<div class="t" style="left:200.50px;top:389.41px;font-size:20px;color:#222;font-weight:normal;transform-origin:0 0;transform:scale(0.1900,0.1900) translateX(-50%);">1</div>
<div class="t" style="left:540.50px;top:391.76px;font-size:20px;color:#ececec;font-weight:normal;transform-origin:0 0;transform:scale(0.2600,0.2600);filter:grayscale(1);">&#9654;  Start</div>
<div class="r" style="left:445.2px;top:199.2px;width:2.2px;height:42.5px;background:rgba(60,60,60,0.35);"></div>
<div class="r" style="left:447.2px;top:198.2px;width:69.2px;height:11.300000000000011px;background:#ffffff;"></div>
<div class="r" style="left:447.2px;top:209.5px;width:69.2px;height:31.19999999999999px;background:#ececec;border-bottom:0.8px solid #9a9a9a;border-right:0.5px solid #cfcfcf"></div>
<div class="r" style="left:508.3px;top:201.0px;width:7.5px;height:7px;background:#d2424a;"></div>
<div class="t" style="left:512.00px;top:202.15px;font-size:20px;color:#fff;font-weight:normal;transform-origin:0 0;transform:scale(0.2500,0.2500) translateX(-50%);">&#215;</div>
<div class="t" style="left:450.00px;top:201.91px;font-size:20px;color:#2a2a2a;font-weight:normal;transform-origin:0 0;transform:scale(0.2330,0.2330);filter:grayscale(1);">Chart View - Respiration ...</div>
<div class="r" style="left:448.3px;top:210.5px;width:7px;height:6px;background:#dcdcdc;border:0.5px solid #c4c4c4"></div>
<div class="t" style="left:481.30px;top:221.45px;font-size:20px;color:#c9a24c;font-weight:normal;transform-origin:0 0;transform:scale(0.3977,0.4520) translateX(-50%);">No Sampling</div>
<div class="r" style="left:445.2px;top:242.5px;width:2.2px;height:48.69999999999999px;background:rgba(60,60,60,0.35);"></div>
<div class="r" style="left:447.2px;top:241.5px;width:69.2px;height:10.199999999999989px;background:#ffffff;"></div>
<div class="r" style="left:447.2px;top:251.7px;width:69.2px;height:38.5px;background:#ececec;border-bottom:0.8px solid #9a9a9a;border-right:0.5px solid #cfcfcf"></div>
<div class="r" style="left:508.3px;top:244.3px;width:7.5px;height:7px;background:#d2424a;"></div>
<div class="t" style="left:512.00px;top:245.45px;font-size:20px;color:#fff;font-weight:normal;transform-origin:0 0;transform:scale(0.2500,0.2500) translateX(-50%);">&#215;</div>
<div class="t" style="left:450.00px;top:245.21px;font-size:20px;color:#2a2a2a;font-weight:normal;transform-origin:0 0;transform:scale(0.2330,0.2330);filter:grayscale(1);">Chart View - Heart Rate</div>
<div class="r" style="left:448.3px;top:252.7px;width:7px;height:6px;background:#dcdcdc;border:0.5px solid #c4c4c4"></div>
<div class="t" style="left:481.30px;top:267.30px;font-size:20px;color:#6a5ab4;font-weight:normal;transform-origin:0 0;transform:scale(0.3977,0.4520) translateX(-50%);">No Sampling</div>
<div class="r" style="left:445.2px;top:291.5px;width:2.2px;height:45.0px;background:rgba(60,60,60,0.35);"></div>
<div class="r" style="left:447.2px;top:290.5px;width:69.2px;height:10.300000000000011px;background:#ffffff;"></div>
<div class="r" style="left:447.2px;top:300.8px;width:69.2px;height:34.69999999999999px;background:#ececec;border-bottom:0.8px solid #9a9a9a;border-right:0.5px solid #cfcfcf"></div>
<div class="r" style="left:508.3px;top:293.3px;width:7.5px;height:7px;background:#d2424a;"></div>
<div class="t" style="left:512.00px;top:294.45px;font-size:20px;color:#fff;font-weight:normal;transform-origin:0 0;transform:scale(0.2500,0.2500) translateX(-50%);">&#215;</div>
<div class="t" style="left:450.00px;top:294.21px;font-size:20px;color:#2a2a2a;font-weight:normal;transform-origin:0 0;transform:scale(0.2330,0.2330);filter:grayscale(1);">Chart View - O2</div>
<div class="r" style="left:448.3px;top:301.8px;width:7px;height:6px;background:#dcdcdc;border:0.5px solid #c4c4c4"></div>
<div class="t" style="left:481.30px;top:314.50px;font-size:20px;color:#4b92d2;font-weight:normal;transform-origin:0 0;transform:scale(0.3977,0.4520) translateX(-50%);">No Sampling</div>
<div class="r" style="left:445.2px;top:338.5px;width:2.2px;height:46.69999999999999px;background:rgba(60,60,60,0.35);"></div>
<div class="r" style="left:447.2px;top:337.5px;width:69.2px;height:10.5px;background:#ffffff;"></div>
<div class="r" style="left:447.2px;top:348px;width:69.2px;height:36.19999999999999px;background:#ececec;border-bottom:0.8px solid #9a9a9a;border-right:0.5px solid #cfcfcf"></div>
<div class="r" style="left:508.3px;top:340.3px;width:7.5px;height:7px;background:#d2424a;"></div>
<div class="t" style="left:512.00px;top:341.45px;font-size:20px;color:#fff;font-weight:normal;transform-origin:0 0;transform:scale(0.2500,0.2500) translateX(-50%);">&#215;</div>
<div class="t" style="left:450.00px;top:341.21px;font-size:20px;color:#2a2a2a;font-weight:normal;transform-origin:0 0;transform:scale(0.2330,0.2330);filter:grayscale(1);">Chart View - CO2</div>
<div class="r" style="left:448.3px;top:349px;width:7px;height:6px;background:#dcdcdc;border:0.5px solid #c4c4c4"></div>
<div class="t" style="left:481.30px;top:362.45px;font-size:20px;color:#e36c3c;font-weight:normal;transform-origin:0 0;transform:scale(0.3977,0.4520) translateX(-50%);">No Sampling</div>
<div class="r" style="left:572px;top:37px;width:1.2px;height:368px;background:#7f8a96;"></div>
<div class="r" style="left:573.2px;top:37px;width:194.8px;height:368px;background:#c8d5e2;"></div>
<div class="r" style="left:573.5px;top:37.6px;width:191px;height:13.4px;background:linear-gradient(#dfe8f1,#e6ecf3);"></div>
<svg width="768" height="60" style="left:0;top:0"><rect x="577" y="42.5" width="4.5" height="5.2" fill="#3b5a8c"/><path d="M578,46.5 L579.3,43.6 L580.6,46.5" stroke="#dfe8f4" stroke-width="0.5" fill="none"/><path d="M736.9,45 H741" stroke="#777" stroke-width="0.7"/><rect x="746" y="42.6" width="4.6" height="4.4" fill="none" stroke="#666" stroke-width="0.7"/><path d="M757,42.8 L761.3,47 M761.3,42.8 L757,47" stroke="#666" stroke-width="0.7"/></svg>
<div class="t" style="left:584.80px;top:42.47px;font-size:20px;color:#34465a;font-weight:normal;transform-origin:0 0;transform:scale(0.2364,0.2686);">Equivital and Metabolic.adicht: Data Pad View*</div>
<div class="r" style="left:576.5px;top:51px;width:188px;height:11.2px;background:#f0f0f0;"></div>
<div class="t" style="left:606.50px;top:54.41px;font-size:20px;color:#3a3a3a;font-weight:normal;transform-origin:0 0;transform:scale(0.2425,0.2756);filter:grayscale(1);">7,170 points from t=27:43.1641 to t=2(</div>
<div class="r" style="left:576.5px;top:62.2px;width:188px;height:161px;background:#ffffff;"></div>
<div class="r" style="left:576.5px;top:62.2px;width:8.5px;height:30px;background:#f7f7f7;"></div>
<div class="t" style="left:600.50px;top:64.61px;font-size:20px;color:#3d5a86;font-weight:normal;transform-origin:0 0;transform:scale(0.2328,0.2328) translateX(-50%);">A</div>
<div class="t" style="left:600.50px;top:70.01px;font-size:20px;color:#3d5a86;font-weight:normal;transform-origin:0 0;transform:scale(0.2328,0.2328) translateX(-50%);">ECG 1</div>
<div class="t" style="left:600.50px;top:75.71px;font-size:20px;color:#3d5a86;font-weight:normal;transform-origin:0 0;transform:scale(0.2328,0.2328) translateX(-50%);">Average</div>
<div class="t" style="left:600.50px;top:81.01px;font-size:20px;color:#3d5a86;font-weight:normal;transform-origin:0 0;transform:scale(0.2328,0.2328) translateX(-50%);">Cyclic Rate</div>
<div class="t" style="left:600.50px;top:86.61px;font-size:20px;color:#3d5a86;font-weight:normal;transform-origin:0 0;transform:scale(0.2328,0.2328) translateX(-50%);">BPM</div>
<div class="t" style="left:631.15px;top:64.61px;font-size:20px;color:#3d5a86;font-weight:normal;transform-origin:0 0;transform:scale(0.2328,0.2328) translateX(-50%);">B</div>
<div class="t" style="left:631.15px;top:70.01px;font-size:20px;color:#3d5a86;font-weight:normal;transform-origin:0 0;transform:scale(0.2328,0.2328) translateX(-50%);">ACCEL X</div>
<div class="t" style="left:631.15px;top:75.71px;font-size:20px;color:#3d5a86;font-weight:normal;transform-origin:0 0;transform:scale(0.2328,0.2328) translateX(-50%);">Maximum -</div>
<div class="t" style="left:631.15px;top:81.01px;font-size:20px;color:#3d5a86;font-weight:normal;transform-origin:0 0;transform:scale(0.2328,0.2328) translateX(-50%);">Minimum</div>
<div class="t" style="left:631.15px;top:86.61px;font-size:20px;color:#3d5a86;font-weight:normal;transform-origin:0 0;transform:scale(0.2328,0.2328) translateX(-50%);">g</div>
<div class="t" style="left:661.40px;top:64.61px;font-size:20px;color:#3d5a86;font-weight:normal;transform-origin:0 0;transform:scale(0.2328,0.2328) translateX(-50%);">C</div>
<div class="t" style="left:661.40px;top:70.01px;font-size:20px;color:#3d5a86;font-weight:normal;transform-origin:0 0;transform:scale(0.2328,0.2328) translateX(-50%);">ACCEL Y</div>
<div class="t" style="left:661.40px;top:75.71px;font-size:20px;color:#3d5a86;font-weight:normal;transform-origin:0 0;transform:scale(0.2328,0.2328) translateX(-50%);">Maximum -</div>
<div class="t" style="left:661.40px;top:81.01px;font-size:20px;color:#3d5a86;font-weight:normal;transform-origin:0 0;transform:scale(0.2328,0.2328) translateX(-50%);">Minimum</div>
<div class="t" style="left:661.40px;top:86.61px;font-size:20px;color:#3d5a86;font-weight:normal;transform-origin:0 0;transform:scale(0.2328,0.2328) translateX(-50%);">g</div>
<div class="t" style="left:691.50px;top:64.61px;font-size:20px;color:#3d5a86;font-weight:normal;transform-origin:0 0;transform:scale(0.2328,0.2328) translateX(-50%);">D</div>
<div class="t" style="left:691.50px;top:70.01px;font-size:20px;color:#3d5a86;font-weight:normal;transform-origin:0 0;transform:scale(0.2328,0.2328) translateX(-50%);">ACCEL Z</div>
<div class="t" style="left:691.50px;top:75.71px;font-size:20px;color:#3d5a86;font-weight:normal;transform-origin:0 0;transform:scale(0.2328,0.2328) translateX(-50%);">Maximum -</div>
<div class="t" style="left:691.50px;top:81.01px;font-size:20px;color:#3d5a86;font-weight:normal;transform-origin:0 0;transform:scale(0.2328,0.2328) translateX(-50%);">Minimum</div>
<div class="t" style="left:691.50px;top:86.61px;font-size:20px;color:#3d5a86;font-weight:normal;transform-origin:0 0;transform:scale(0.2328,0.2328) translateX(-50%);">g</div>
<div class="t" style="left:721.50px;top:62.01px;font-size:20px;color:#3d5a86;font-weight:normal;transform-origin:0 0;transform:scale(0.2328,0.2328) translateX(-50%);">-</div>
<div class="t" style="left:721.50px;top:67.01px;font-size:20px;color:#3d5a86;font-weight:normal;transform-origin:0 0;transform:scale(0.2328,0.2328) translateX(-50%);">Chest</div>
<div class="t" style="left:721.50px;top:72.81px;font-size:20px;color:#3d5a86;font-weight:normal;transform-origin:0 0;transform:scale(0.2328,0.2328) translateX(-50%);">Expansion</div>
<div class="t" style="left:721.50px;top:78.61px;font-size:20px;color:#3d5a86;font-weight:normal;transform-origin:0 0;transform:scale(0.2328,0.2328) translateX(-50%);">Avg Cyc</div>
<div class="t" style="left:721.50px;top:83.61px;font-size:20px;color:#3d5a86;font-weight:normal;transform-origin:0 0;transform:scale(0.2328,0.2328) translateX(-50%);">Rate</div>
<div class="t" style="left:721.50px;top:88.81px;font-size:20px;color:#3d5a86;font-weight:normal;transform-origin:0 0;transform:scale(0.2328,0.2328) translateX(-50%);">BPM</div>
<div class="t" style="left:750.50px;top:72.57px;font-size:20px;color:#555;font-weight:normal;transform-origin:0 0;transform:scale(0.2800,0.2800) translateX(-50%);">F</div>
<div class="r" style="left:706.5px;top:90.6px;width:30px;height:1.7px;background:#ffffff;"></div>
<div class="t" style="left:579.30px;top:94.52px;font-size:20px;color:#333;font-weight:normal;transform-origin:0 0;transform:scale(0.2439,0.3049);">1</div>
<div class="t" style="left:587.20px;top:94.52px;font-size:20px;color:#2a2a2a;font-weight:normal;transform-origin:0 0;transform:scale(0.2439,0.3049);filter:grayscale(1);">114.5722</div>
<div class="t" style="left:616.80px;top:94.52px;font-size:20px;color:#2a2a2a;font-weight:normal;transform-origin:0 0;transform:scale(0.2439,0.3049);filter:grayscale(1);">0.3932</div>
<div class="t" style="left:647.10px;top:94.52px;font-size:20px;color:#2a2a2a;font-weight:normal;transform-origin:0 0;transform:scale(0.2439,0.3049);filter:grayscale(1);">0.622</div>
<div class="t" style="left:677.30px;top:94.52px;font-size:20px;color:#2a2a2a;font-weight:normal;transform-origin:0 0;transform:scale(0.2439,0.3049);filter:grayscale(1);">0.289</div>
<div class="t" style="left:707.30px;top:94.52px;font-size:20px;color:#2a2a2a;font-weight:normal;transform-origin:0 0;transform:scale(0.2439,0.3049);filter:grayscale(1);">26.4958</div>
<div class="t" style="left:579.30px;top:101.70px;font-size:20px;color:#333;font-weight:normal;transform-origin:0 0;transform:scale(0.2439,0.3049);">2</div>
<div class="t" style="left:587.20px;top:101.70px;font-size:20px;color:#2a2a2a;font-weight:normal;transform-origin:0 0;transform:scale(0.2439,0.3049);filter:grayscale(1);">ECG 1</div>
<div class="t" style="left:616.80px;top:101.70px;font-size:20px;color:#2a2a2a;font-weight:normal;transform-origin:0 0;transform:scale(0.2439,0.3049);filter:grayscale(1);">ACCEL X</div>
<div class="t" style="left:647.10px;top:101.70px;font-size:20px;color:#2a2a2a;font-weight:normal;transform-origin:0 0;transform:scale(0.2439,0.3049);filter:grayscale(1);">ACCEL Y</div>
<div class="t" style="left:677.30px;top:101.70px;font-size:20px;color:#2a2a2a;font-weight:normal;transform-origin:0 0;transform:scale(0.2439,0.3049);filter:grayscale(1);">ACCEL Z</div>
<div class="t" style="left:707.30px;top:101.70px;font-size:20px;color:#2a2a2a;font-weight:normal;transform-origin:0 0;transform:scale(0.2439,0.3049);filter:grayscale(1);">Chest Expans</div>
<div class="t" style="left:579.30px;top:108.88px;font-size:20px;color:#333;font-weight:normal;transform-origin:0 0;transform:scale(0.2439,0.3049);">3</div>
<div class="t" style="left:587.20px;top:108.88px;font-size:20px;color:#2a2a2a;font-weight:normal;transform-origin:0 0;transform:scale(0.2439,0.3049);filter:grayscale(1);">Avg Rate</div>
<div class="t" style="left:616.80px;top:108.88px;font-size:20px;color:#2a2a2a;font-weight:normal;transform-origin:0 0;transform:scale(0.2439,0.3049);filter:grayscale(1);">Max - Min</div>
<div class="t" style="left:647.10px;top:108.88px;font-size:20px;color:#2a2a2a;font-weight:normal;transform-origin:0 0;transform:scale(0.2439,0.3049);filter:grayscale(1);">Max - Min</div>
<div class="t" style="left:677.30px;top:108.88px;font-size:20px;color:#2a2a2a;font-weight:normal;transform-origin:0 0;transform:scale(0.2439,0.3049);filter:grayscale(1);">Max - Min</div>
<div class="t" style="left:707.30px;top:108.88px;font-size:20px;color:#2a2a2a;font-weight:normal;transform-origin:0 0;transform:scale(0.2439,0.3049);filter:grayscale(1);">Avg Rate</div>
<div class="t" style="left:579.30px;top:116.06px;font-size:20px;color:#333;font-weight:normal;transform-origin:0 0;transform:scale(0.2439,0.3049);">4</div>
<div class="t" style="left:587.20px;top:116.06px;font-size:20px;color:#2a2a2a;font-weight:normal;transform-origin:0 0;transform:scale(0.2439,0.3049);filter:grayscale(1);">BPM</div>
<div class="t" style="left:616.80px;top:116.06px;font-size:20px;color:#2a2a2a;font-weight:normal;transform-origin:0 0;transform:scale(0.2439,0.3049);filter:grayscale(1);">g</div>
<div class="t" style="left:647.10px;top:116.06px;font-size:20px;color:#2a2a2a;font-weight:normal;transform-origin:0 0;transform:scale(0.2439,0.3049);filter:grayscale(1);">g</div>
<div class="t" style="left:677.30px;top:116.06px;font-size:20px;color:#2a2a2a;font-weight:normal;transform-origin:0 0;transform:scale(0.2439,0.3049);filter:grayscale(1);">g</div>
<div class="t" style="left:707.30px;top:116.06px;font-size:20px;color:#2a2a2a;font-weight:normal;transform-origin:0 0;transform:scale(0.2439,0.3049);filter:grayscale(1);">BPM</div>
<div class="t" style="left:579.30px;top:123.24px;font-size:20px;color:#333;font-weight:normal;transform-origin:0 0;transform:scale(0.2439,0.3049);">5</div>
<div class="t" style="left:587.20px;top:123.24px;font-size:20px;color:#2a2a2a;font-weight:normal;transform-origin:0 0;transform:scale(0.2439,0.3049);filter:grayscale(1);">110.4649</div>
<div class="t" style="left:616.80px;top:123.24px;font-size:20px;color:#2a2a2a;font-weight:normal;transform-origin:0 0;transform:scale(0.2439,0.3049);filter:grayscale(1);">0.2115</div>
<div class="t" style="left:647.10px;top:123.24px;font-size:20px;color:#2a2a2a;font-weight:normal;transform-origin:0 0;transform:scale(0.2439,0.3049);filter:grayscale(1);">0.5722</div>
<div class="t" style="left:677.30px;top:123.24px;font-size:20px;color:#2a2a2a;font-weight:normal;transform-origin:0 0;transform:scale(0.2439,0.3049);filter:grayscale(1);">0.2595</div>
<div class="t" style="left:707.30px;top:123.24px;font-size:20px;color:#2a2a2a;font-weight:normal;transform-origin:0 0;transform:scale(0.2439,0.3049);filter:grayscale(1);">11.9208</div>
<div class="t" style="left:579.30px;top:130.42px;font-size:20px;color:#333;font-weight:normal;transform-origin:0 0;transform:scale(0.2439,0.3049);">6</div>
<div class="t" style="left:587.20px;top:130.42px;font-size:20px;color:#2a2a2a;font-weight:normal;transform-origin:0 0;transform:scale(0.2439,0.3049);filter:grayscale(1);">114.6757</div>
<div class="t" style="left:616.80px;top:130.42px;font-size:20px;color:#2a2a2a;font-weight:normal;transform-origin:0 0;transform:scale(0.2439,0.3049);filter:grayscale(1);">0.143</div>
<div class="t" style="left:647.10px;top:130.42px;font-size:20px;color:#2a2a2a;font-weight:normal;transform-origin:0 0;transform:scale(0.2439,0.3049);filter:grayscale(1);">0.1853</div>
<div class="t" style="left:677.30px;top:130.42px;font-size:20px;color:#2a2a2a;font-weight:normal;transform-origin:0 0;transform:scale(0.2439,0.3049);filter:grayscale(1);">0.1265</div>
<div class="t" style="left:707.30px;top:130.42px;font-size:20px;color:#2a2a2a;font-weight:normal;transform-origin:0 0;transform:scale(0.2439,0.3049);filter:grayscale(1);">23.7377</div>
<div class="t" style="left:579.30px;top:137.60px;font-size:20px;color:#333;font-weight:normal;transform-origin:0 0;transform:scale(0.2439,0.3049);">7</div>
<div class="t" style="left:587.20px;top:137.60px;font-size:20px;color:#2a2a2a;font-weight:normal;transform-origin:0 0;transform:scale(0.2439,0.3049);filter:grayscale(1);">115.9081</div>
<div class="t" style="left:616.80px;top:137.60px;font-size:20px;color:#2a2a2a;font-weight:normal;transform-origin:0 0;transform:scale(0.2439,0.3049);filter:grayscale(1);">0.1462</div>
<div class="t" style="left:647.10px;top:137.60px;font-size:20px;color:#2a2a2a;font-weight:normal;transform-origin:0 0;transform:scale(0.2439,0.3049);filter:grayscale(1);">0.1862</div>
<div class="t" style="left:677.30px;top:137.60px;font-size:20px;color:#2a2a2a;font-weight:normal;transform-origin:0 0;transform:scale(0.2439,0.3049);filter:grayscale(1);">0.2402</div>
<div class="t" style="left:707.30px;top:137.60px;font-size:20px;color:#2a2a2a;font-weight:normal;transform-origin:0 0;transform:scale(0.2439,0.3049);filter:grayscale(1);">42.3637</div>
<div class="t" style="left:579.30px;top:144.78px;font-size:20px;color:#333;font-weight:normal;transform-origin:0 0;transform:scale(0.2439,0.3049);">8</div>
<div class="t" style="left:587.20px;top:144.78px;font-size:20px;color:#2a2a2a;font-weight:normal;transform-origin:0 0;transform:scale(0.2439,0.3049);filter:grayscale(1);">112.3878</div>
<div class="t" style="left:616.80px;top:144.78px;font-size:20px;color:#2a2a2a;font-weight:normal;transform-origin:0 0;transform:scale(0.2439,0.3049);filter:grayscale(1);">0.1253</div>
<div class="t" style="left:647.10px;top:144.78px;font-size:20px;color:#2a2a2a;font-weight:normal;transform-origin:0 0;transform:scale(0.2439,0.3049);filter:grayscale(1);">0.2052</div>
<div class="t" style="left:677.30px;top:144.78px;font-size:20px;color:#2a2a2a;font-weight:normal;transform-origin:0 0;transform:scale(0.2439,0.3049);filter:grayscale(1);">0.1538</div>
<div class="t" style="left:707.30px;top:144.78px;font-size:20px;color:#2a2a2a;font-weight:normal;transform-origin:0 0;transform:scale(0.2439,0.3049);filter:grayscale(1);">17.7473</div>
<div class="t" style="left:579.30px;top:151.96px;font-size:20px;color:#333;font-weight:normal;transform-origin:0 0;transform:scale(0.2439,0.3049);">9</div>
<div class="t" style="left:587.20px;top:151.96px;font-size:20px;color:#2a2a2a;font-weight:normal;transform-origin:0 0;transform:scale(0.2439,0.3049);filter:grayscale(1);">119.1572</div>
<div class="t" style="left:616.80px;top:151.96px;font-size:20px;color:#2a2a2a;font-weight:normal;transform-origin:0 0;transform:scale(0.2439,0.3049);filter:grayscale(1);">0.163</div>
<div class="t" style="left:647.10px;top:151.96px;font-size:20px;color:#2a2a2a;font-weight:normal;transform-origin:0 0;transform:scale(0.2439,0.3049);filter:grayscale(1);">0.2007</div>
<div class="t" style="left:677.30px;top:151.96px;font-size:20px;color:#2a2a2a;font-weight:normal;transform-origin:0 0;transform:scale(0.2439,0.3049);filter:grayscale(1);">0.198</div>
<div class="t" style="left:707.30px;top:151.96px;font-size:20px;color:#2a2a2a;font-weight:normal;transform-origin:0 0;transform:scale(0.2439,0.3049);filter:grayscale(1);">13.1294</div>
<div class="t" style="left:579.30px;top:159.14px;font-size:20px;color:#333;font-weight:normal;transform-origin:0 0;transform:scale(0.2439,0.3049);">10</div>
<div class="t" style="left:579.30px;top:166.32px;font-size:20px;color:#333;font-weight:normal;transform-origin:0 0;transform:scale(0.2439,0.3049);">11</div>
<div class="t" style="left:579.30px;top:173.50px;font-size:20px;color:#333;font-weight:normal;transform-origin:0 0;transform:scale(0.2439,0.3049);">12</div>
<div class="t" style="left:579.30px;top:180.68px;font-size:20px;color:#333;font-weight:normal;transform-origin:0 0;transform:scale(0.2439,0.3049);">13</div>
<div class="t" style="left:579.30px;top:187.86px;font-size:20px;color:#333;font-weight:normal;transform-origin:0 0;transform:scale(0.2439,0.3049);">14</div>
<div class="t" style="left:579.30px;top:195.04px;font-size:20px;color:#333;font-weight:normal;transform-origin:0 0;transform:scale(0.2439,0.3049);">15</div>
<div class="t" style="left:579.30px;top:202.22px;font-size:20px;color:#333;font-weight:normal;transform-origin:0 0;transform:scale(0.2439,0.3049);">16</div>
<div class="t" style="left:579.30px;top:209.40px;font-size:20px;color:#333;font-weight:normal;transform-origin:0 0;transform:scale(0.2439,0.3049);">17</div>
<div class="t" style="left:579.30px;top:216.58px;font-size:20px;color:#333;font-weight:normal;transform-origin:0 0;transform:scale(0.2439,0.3049);">18</div>
<svg width="768" height="432" style="left:0;top:0"><rect x="578.2" y="53" width="9.4" height="7.3" fill="#dde6ef" stroke="#8aa0b8" stroke-width="0.6"/><rect x="579.8" y="55.6" width="6.2" height="2" fill="#4a5a7a"/><rect x="589.4" y="53" width="9" height="7.3" fill="#e8e8e8" stroke="#9aa4b0" stroke-width="0.6"/><rect x="591.8" y="55" width="4" height="3.2" fill="none" stroke="#555" stroke-width="0.5"/><rect x="696" y="53" width="11.5" height="7.5" fill="#e4e4e4" stroke="#cfcfcf" stroke-width="0.5"/><rect x="698" y="54.5" width="3" height="4.5" fill="#c8c8c8"/><rect x="709.8" y="52.5" width="0.5" height="9" fill="#c8c8c8"/><rect x="712.4" y="53" width="11" height="7.5" fill="#fafafa" stroke="#999" stroke-width="0.5"/><path d="M715,57 H721 M719.5,55 V59" stroke="#555" stroke-width="0.5"/><rect x="725" y="53" width="11" height="7.5" fill="#e8e8e8" stroke="#999" stroke-width="0.5"/><rect x="726.5" y="54.5" width="4.5" height="4.5" fill="none" stroke="#666" stroke-width="0.5"/><path d="M732.5,56.3 L735,56.3 L733.75,57.8Z" fill="#111"/><rect x="737.5" y="53" width="11.2" height="7.5" fill="#cfe0c8" stroke="#9ab09a" stroke-width="0.5"/><path d="M739,56.5 L742,54.5 L742,58.5Z" fill="#3aa040"/><rect x="741" y="55.8" width="2.5" height="1.5" fill="#3aa040"/><path d="M745,56.3 L747.5,56.3 L746.25,57.8Z" fill="#111"/><rect x="751" y="53" width="11.5" height="7.5" fill="#cde0ee" stroke="#98aec0" stroke-width="0.5"/><rect x="752.5" y="54.5" width="5" height="4" fill="#6ab0d8"/><path d="M758.5,56.3 L761,56.3 L759.75,57.8Z" fill="#111"/><path d="M580,90 L583.5,90 L583.5,86.5Z" fill="#cfcfcf"/><line x1="576.5" x2="757" y1="100.78" y2="100.78" stroke="#e2e2e2" stroke-width="0.5"/><line x1="576.5" x2="757" y1="107.96" y2="107.96" stroke="#e2e2e2" stroke-width="0.5"/><line x1="576.5" x2="757" y1="115.14" y2="115.14" stroke="#e2e2e2" stroke-width="0.5"/><line x1="576.5" x2="757" y1="122.32" y2="122.32" stroke="#e2e2e2" stroke-width="0.5"/><line x1="576.5" x2="757" y1="129.50" y2="129.50" stroke="#e2e2e2" stroke-width="0.5"/><line x1="576.5" x2="757" y1="136.68" y2="136.68" stroke="#e2e2e2" stroke-width="0.5"/><line x1="576.5" x2="757" y1="143.86" y2="143.86" stroke="#e2e2e2" stroke-width="0.5"/><line x1="576.5" x2="757" y1="151.04" y2="151.04" stroke="#e2e2e2" stroke-width="0.5"/><line x1="576.5" x2="757" y1="158.22" y2="158.22" stroke="#e2e2e2" stroke-width="0.5"/><line x1="576.5" x2="757" y1="165.40" y2="165.40" stroke="#e2e2e2" stroke-width="0.5"/><line x1="576.5" x2="757" y1="172.58" y2="172.58" stroke="#e2e2e2" stroke-width="0.5"/><line x1="576.5" x2="757" y1="179.76" y2="179.76" stroke="#e2e2e2" stroke-width="0.5"/><line x1="576.5" x2="757" y1="186.94" y2="186.94" stroke="#e2e2e2" stroke-width="0.5"/><line x1="576.5" x2="757" y1="194.12" y2="194.12" stroke="#e2e2e2" stroke-width="0.5"/><line x1="576.5" x2="757" y1="201.30" y2="201.30" stroke="#e2e2e2" stroke-width="0.5"/><line x1="576.5" x2="757" y1="208.48" y2="208.48" stroke="#e2e2e2" stroke-width="0.5"/><line x1="576.5" x2="757" y1="215.66" y2="215.66" stroke="#e2e2e2" stroke-width="0.5"/><line x1="576.5" x2="757" y1="222.84" y2="222.84" stroke="#e2e2e2" stroke-width="0.5"/><line x1="576.5" x2="757" y1="100.1" y2="100.1" stroke="#6a6a6a" stroke-width="0.6"/><line x1="585" x2="585" y1="62.2" y2="223" stroke="#d4d4d4" stroke-width="0.5"/><line x1="616" x2="616" y1="62.2" y2="223" stroke="#d4d4d4" stroke-width="0.5"/><line x1="646.3" x2="646.3" y1="62.2" y2="223" stroke="#d4d4d4" stroke-width="0.5"/><line x1="676.5" x2="676.5" y1="62.2" y2="223" stroke="#d4d4d4" stroke-width="0.5"/><line x1="706.5" x2="706.5" y1="62.2" y2="223" stroke="#d4d4d4" stroke-width="0.5"/><line x1="736.5" x2="736.5" y1="62.2" y2="223" stroke="#d4d4d4" stroke-width="0.5"/><rect x="585.8" y="158.22" width="171.2" height="7.18" fill="#e2e2f2" stroke="#2a2a3a" stroke-width="0.8"/><line x1="616" x2="616" y1="158.72" y2="164.90" stroke="#c8c8d8" stroke-width="0.5"/><line x1="646.3" x2="646.3" y1="158.72" y2="164.90" stroke="#c8c8d8" stroke-width="0.5"/><line x1="676.5" x2="676.5" y1="158.72" y2="164.90" stroke="#c8c8d8" stroke-width="0.5"/><line x1="706.5" x2="706.5" y1="158.72" y2="164.90" stroke="#c8c8d8" stroke-width="0.5"/><line x1="736.5" x2="736.5" y1="158.72" y2="164.90" stroke="#c8c8d8" stroke-width="0.5"/><rect x="757" y="100.5" width="7.5" height="122.5" fill="#f0f0f0"/><rect x="757.8" y="107.5" width="6" height="37.5" fill="#cdcdcd"/><path d="M759,104.5 L760.6,103 L762.2,104.5" stroke="#aaa" stroke-width="0.5" fill="none"/><path d="M759,218.6 L760.6,220.2 L762.2,218.6" stroke="#aaa" stroke-width="0.5" fill="none"/><rect x="576.5" y="223" width="188" height="6.6" fill="#f0f0f0"/><rect x="593" y="223.3" width="14.2" height="5.8" fill="#d0d0d0"/><path d="M589.6,224.6 L588.2,226.2 L589.6,227.8" stroke="#aaa" stroke-width="0.5" fill="none"/><path d="M753.4,224.6 L754.8,226.2 L753.4,227.8" stroke="#aaa" stroke-width="0.5" fill="none"/><rect x="576.5" y="229.6" width="188" height="8.3" fill="#ffffff"/><rect x="577.5" y="230.4" width="10.5" height="6.7" fill="#dfe6ee" stroke="#98a8ba" stroke-width="0.5"/><circle cx="582.7" cy="233.8" r="2.3" fill="#3a5ab0"/><rect x="588.3" y="230" width="24" height="7.6" fill="#efefef" stroke="#d0d0d0" stroke-width="0.4"/><rect x="613" y="230.4" width="9.4" height="6.8" fill="#f0f0f0" stroke="#ccc" stroke-width="0.4"/><rect x="615" y="232" width="5" height="4" fill="#e8c050"/><rect x="617" y="233" width="3" height="3" fill="#4a90d0"/></svg>
<div class="t" style="left:582.70px;top:231.78px;font-size:20px;color:#fff;font-weight:bold;transform-origin:0 0;transform:scale(0.2250,0.2250) translateX(-50%);">?</div>
<div class="t" style="left:590.70px;top:231.57px;font-size:20px;color:#333;font-weight:normal;transform-origin:0 0;transform:scale(0.2278,0.2589);">Data Pad</div>
<div class="r" style="left:573.5px;top:240.5px;width:191px;height:12.8px;background:linear-gradient(#b9cde3,#bed1e5);"></div>
<svg width="768" height="260" style="left:0;top:0"><rect x="576.5" y="244.2" width="4.5" height="5.2" fill="#3b5a8c"/><path d="M577.5,248.3 L578.8,245.3 L580.1,248.3" stroke="#dfe8f4" stroke-width="0.5" fill="none"/><path d="M736.7,247.3 H741" stroke="#555" stroke-width="0.8"/><rect x="747" y="245" width="4.8" height="4.5" fill="none" stroke="#444" stroke-width="0.8"/><path d="M757.5,245.3 L762,249.8 M762,245.3 L757.5,249.8" stroke="#444" stroke-width="0.8"/></svg>
<div class="t" style="left:584.80px;top:244.68px;font-size:20px;color:#28384c;font-weight:normal;transform-origin:0 0;transform:scale(0.2361,0.2683);">Equivital and Metabolic.adicht: HRV Power Spectrum Plot*</div>
<div class="r" style="left:573.5px;top:253.3px;width:191px;height:151px;background:#ffffff;"></div>
<svg width="768" height="432" style="left:0;top:0"><rect x="605.2" y="268.8" width="11.5" height="103.8" fill="#dcdcf4"/><rect x="616.7" y="268.8" width="31.7" height="103.8" fill="#dff1dc"/><rect x="648.4" y="268.8" width="86.4" height="103.8" fill="#fbdde0"/><line x1="605.2" x2="605.2" y1="268.8" y2="372.6" stroke="#a9cdc6" stroke-width="0.55"/><line x1="616.7" x2="616.7" y1="268.8" y2="372.6" stroke="#a9cdc6" stroke-width="0.55"/><line x1="628.2" x2="628.2" y1="268.8" y2="372.6" stroke="#a9cdc6" stroke-width="0.55"/><line x1="639.8" x2="639.8" y1="268.8" y2="372.6" stroke="#a9cdc6" stroke-width="0.55"/><line x1="651.3" x2="651.3" y1="268.8" y2="372.6" stroke="#a9cdc6" stroke-width="0.55"/><line x1="662.8" x2="662.8" y1="268.8" y2="372.6" stroke="#a9cdc6" stroke-width="0.55"/><line x1="674.3" x2="674.3" y1="268.8" y2="372.6" stroke="#a9cdc6" stroke-width="0.55"/><line x1="685.8" x2="685.8" y1="268.8" y2="372.6" stroke="#a9cdc6" stroke-width="0.55"/><line x1="697.4" x2="697.4" y1="268.8" y2="372.6" stroke="#a9cdc6" stroke-width="0.55"/><line x1="708.9" x2="708.9" y1="268.8" y2="372.6" stroke="#a9cdc6" stroke-width="0.55"/><line x1="720.4" x2="720.4" y1="268.8" y2="372.6" stroke="#a9cdc6" stroke-width="0.55"/><line x1="731.9" x2="731.9" y1="268.8" y2="372.6" stroke="#a9cdc6" stroke-width="0.55"/><line x1="743.4" x2="743.4" y1="268.8" y2="372.6" stroke="#a9cdc6" stroke-width="0.55"/><line x1="605.2" x2="749.2" y1="372.6" y2="372.6" stroke="#a9cdc6" stroke-width="0.55"/><line x1="605.2" x2="749.2" y1="362.9" y2="362.9" stroke="#a9cdc6" stroke-width="0.55"/><line x1="605.2" x2="749.2" y1="353.2" y2="353.2" stroke="#a9cdc6" stroke-width="0.55"/><line x1="605.2" x2="749.2" y1="343.5" y2="343.5" stroke="#a9cdc6" stroke-width="0.55"/><line x1="605.2" x2="749.2" y1="333.8" y2="333.8" stroke="#a9cdc6" stroke-width="0.55"/><line x1="605.2" x2="749.2" y1="324.1" y2="324.1" stroke="#a9cdc6" stroke-width="0.55"/><line x1="605.2" x2="749.2" y1="314.3" y2="314.3" stroke="#a9cdc6" stroke-width="0.55"/><line x1="605.2" x2="749.2" y1="304.6" y2="304.6" stroke="#a9cdc6" stroke-width="0.55"/><line x1="605.2" x2="749.2" y1="294.9" y2="294.9" stroke="#a9cdc6" stroke-width="0.55"/><line x1="605.2" x2="749.2" y1="285.2" y2="285.2" stroke="#a9cdc6" stroke-width="0.55"/><line x1="605.2" x2="749.2" y1="275.5" y2="275.5" stroke="#a9cdc6" stroke-width="0.55"/><line x1="605.2" x2="749.2" y1="268.8" y2="268.8" stroke="#cfe3df" stroke-width="0.5"/><line x1="749.2" x2="749.2" y1="268.8" y2="372.6" stroke="#cfe3df" stroke-width="0.5"/><line x1="616.7" x2="616.7" y1="266.8" y2="372.6" stroke="#5a8aa0" stroke-width="0.7"/><line x1="648.4" x2="648.4" y1="266.8" y2="372.6" stroke="#6a7a6a" stroke-width="0.7"/><line x1="734.8" x2="734.8" y1="266.8" y2="372.6" stroke="#a07080" stroke-width="0.7"/><line x1="605.2" x2="605.2" y1="266.8" y2="372.6" stroke="#6a6aa0" stroke-width="0.7"/><line x1="605.2" x2="749.2" y1="372.6" y2="372.6" stroke="#777" stroke-width="0.6"/><line x1="603.7" x2="605.2" y1="275.5" y2="275.5" stroke="#666" stroke-width="0.5"/><line x1="603.7" x2="605.2" y1="324.1" y2="324.1" stroke="#666" stroke-width="0.5"/><line x1="603.7" x2="605.2" y1="372.6" y2="372.6" stroke="#666" stroke-width="0.5"/><rect x="602.9" y="265.5" width="4.6" height="3.8" fill="#eaeaea" stroke="#777" stroke-width="0.4"/><rect x="612.7" y="265.5" width="4" height="3.8" fill="#eaeaea" stroke="#777" stroke-width="0.4"/><rect x="616.7" y="265.5" width="4" height="3.8" fill="#eaeaea" stroke="#777" stroke-width="0.4"/><rect x="643.9" y="265.5" width="4.5" height="3.8" fill="#eaeaea" stroke="#777" stroke-width="0.4"/><rect x="648.4" y="265.5" width="4.5" height="3.8" fill="#eaeaea" stroke="#777" stroke-width="0.4"/><rect x="730.3" y="265.5" width="4.5" height="3.8" fill="#eaeaea" stroke="#777" stroke-width="0.4"/><rect x="734.8" y="265.5" width="4.5" height="3.8" fill="#eaeaea" stroke="#777" stroke-width="0.4"/><path d="M605.2,361.9 605.5,361.5 605.8,361.1 606.1,360.5 606.4,359.9 606.6,359.3 606.9,358.6 607.2,357.8 607.5,357.1 607.8,356.1 608.1,355.1 608.4,353.8 608.7,352.5 609.0,351.2 609.2,349.8 609.5,348.5 609.8,347.3 610.1,346.2 610.4,345.4 610.7,344.6 611.0,343.8 611.3,343.1 611.5,342.3 611.8,341.6 612.1,341.0 612.4,340.5 612.7,340.1 613.0,339.8 613.3,339.6 613.6,339.6 613.9,339.8 614.1,340.1 614.4,340.6 614.7,341.1 615.0,341.7 615.3,342.4 615.6,343.1 615.9,343.8 616.2,344.5 616.5,345.3 616.7,346.2 617.0,347.2 617.3,348.3 617.6,349.5 617.9,350.7" fill="none" stroke="#d84a7a" stroke-width="0.6" stroke-linejoin="round"/><path d="M616.7,346.2 617.0,347.2 617.3,348.3 617.6,349.5 617.9,350.7 618.2,351.8 618.5,352.9 618.8,354.0 619.1,354.9 619.3,355.6 619.6,356.1 619.9,356.6 620.2,357.0 620.5,357.5 620.8,357.9 621.1,358.3 621.4,358.7 621.6,359.0 621.9,359.3 622.2,359.6 622.5,359.9 622.8,360.1 623.1,360.2 623.4,360.4 623.7,360.4 624.0,360.5 624.2,360.3 624.5,360.0 624.8,359.5 625.1,358.8 625.4,358.0 625.7,357.1 626.0,356.0 626.3,354.9 626.6,353.6 626.8,352.3 627.1,350.9 627.4,349.5 627.7,348.1 628.0,346.3 628.3,344.1 628.6,341.6 628.9,338.7 629.2,335.5 629.4,332.2 629.7,328.8 630.0,325.3 630.3,321.7 630.6,318.3 630.9,315.0 631.2,311.8 631.5,308.5 631.7,305.0 632.0,301.3 632.3,297.6 632.6,294.0 632.9,290.5 633.2,287.4 633.5,284.7 633.8,282.6 634.1,281.1 634.3,279.8 634.6,278.6 634.9,277.6 635.2,276.7 635.5,276.0 635.8,275.6 636.1,275.5 636.4,275.8 636.7,276.3 636.9,277.1 637.2,278.1 637.5,279.2 637.8,280.4 638.1,281.6 638.4,283.2 638.7,285.3 639.0,287.8 639.3,290.7 639.5,293.7 639.8,297.0 640.1,300.3 640.4,303.7 640.7,307.0 641.0,310.1 641.3,313.1 641.6,316.2 641.8,319.3 642.1,322.6 642.4,325.9 642.7,329.2 643.0,332.5 643.3,335.6 643.6,338.7 643.9,341.6 644.2,344.3 644.4,346.7 644.7,348.9 645.0,350.9 645.3,352.8 645.6,354.6 645.9,356.3 646.2,357.9 646.5,359.4 646.8,360.8 647.0,362.1 647.3,363.2 647.6,364.4 647.9,365.5 648.2,366.6 648.5,367.4 648.8,368.0" fill="none" stroke="#d0604e" stroke-width="0.6" stroke-linejoin="round"/><path d="M648.5,367.4 648.8,368.0 649.1,368.3 649.4,368.5 649.6,368.6 649.9,368.8 650.2,368.9 650.5,369.0 650.8,369.1 651.1,369.2 651.4,369.3 651.7,369.3 651.9,369.4 652.2,369.4 652.5,369.5 652.8,369.5 653.1,369.5 653.4,369.6 653.7,369.6 654.0,369.7 654.3,369.7 654.5,369.7 654.8,369.7 655.1,369.8 655.4,369.8 655.7,369.8 656.0,369.8 656.3,369.9 656.6,369.9 656.9,369.9 657.1,369.9 657.4,370.0 657.7,370.0 658.0,370.0 658.3,370.0 658.6,370.0 658.9,370.0 659.2,370.0 659.5,370.1 659.7,370.1 660.0,370.1 660.3,370.1 660.6,370.1 660.9,370.1 661.2,370.1 661.5,370.1 661.8,370.1 662.0,370.2 662.3,370.2 662.6,370.2 662.9,370.2 663.2,370.2 663.5,370.2 663.8,370.2 664.1,370.2 664.4,370.2 664.6,370.2 664.9,370.2 665.2,370.3 665.5,370.3 665.8,370.3 666.1,370.3 666.4,370.3 666.7,370.3 667.0,370.3 667.2,370.3 667.5,370.3 667.8,370.2 668.1,370.2 668.4,370.1 668.7,370.1 669.0,370.0 669.3,369.9 669.6,369.8 669.8,369.7 670.1,369.6 670.4,369.5 670.7,369.4 671.0,369.3 671.3,369.2 671.6,369.1 671.9,369.0 672.1,368.9 672.4,368.8 672.7,368.7 673.0,368.7 673.3,368.6 673.6,368.6 673.9,368.5 674.2,368.5 674.5,368.5 674.7,368.5 675.0,368.6 675.3,368.6 675.6,368.6 675.9,368.7 676.2,368.7 676.5,368.8 676.8,368.9 677.1,368.9 677.3,369.0 677.6,369.1 677.9,369.2 678.2,369.3 678.5,369.3 678.8,369.4 679.1,369.5 679.4,369.6 679.7,369.7 679.9,369.8 680.2,369.8 680.5,369.9 680.8,370.0 681.1,370.0 681.4,370.1 681.7,370.1 682.0,370.1 682.3,370.2 682.5,370.2 682.8,370.3 683.1,370.3 683.4,370.3 683.7,370.4 684.0,370.4 684.3,370.5 684.6,370.5 684.8,370.5 685.1,370.6 685.4,370.6 685.7,370.6 686.0,370.7 686.3,370.7 686.6,370.7 686.9,370.8 687.2,370.8 687.4,370.8 687.7,370.9 688.0,370.9 688.3,370.9 688.6,370.9 688.9,370.9 689.2,371.0 689.5,371.0 689.8,371.0 690.0,371.0 690.3,371.0 690.6,371.0 690.9,371.0 691.2,371.0 691.5,371.0 691.8,371.0 692.1,371.0 692.4,371.0 692.6,371.0 692.9,371.0 693.2,371.0 693.5,371.0 693.8,371.0 694.1,371.0 694.4,371.0 694.7,370.9 694.9,370.9 695.2,370.9 695.5,370.9 695.8,370.9 696.1,370.8 696.4,370.8 696.7,370.8 697.0,370.8 697.3,370.8 697.5,370.7 697.8,370.7 698.1,370.7 698.4,370.7 698.7,370.7 699.0,370.7 699.3,370.7 699.6,370.7 699.9,370.7 700.1,370.7 700.4,370.7 700.7,370.7 701.0,370.7 701.3,370.7 701.6,370.7 701.9,370.7 702.2,370.7 702.5,370.8 702.7,370.8 703.0,370.8 703.3,370.8 703.6,370.9 703.9,370.9 704.2,370.9 704.5,371.0 704.8,371.0 705.0,371.0 705.3,371.1 705.6,371.1 705.9,371.1 706.2,371.2 706.5,371.2 706.8,371.2 707.1,371.3 707.4,371.3 707.6,371.3 707.9,371.4 708.2,371.4 708.5,371.4 708.8,371.4 709.1,371.4 709.4,371.5 709.7,371.5 710.0,371.5 710.2,371.5 710.5,371.5 710.8,371.6 711.1,371.6 711.4,371.6 711.7,371.6 712.0,371.6 712.3,371.6 712.6,371.7 712.8,371.7 713.1,371.7 713.4,371.7 713.7,371.7 714.0,371.7 714.3,371.8 714.6,371.8 714.9,371.8 715.1,371.8 715.4,371.8 715.7,371.8 716.0,371.8 716.3,371.9 716.6,371.9 716.9,371.9 717.2,371.9 717.5,371.9 717.7,371.9 718.0,371.9 718.3,371.9 718.6,372.0 718.9,372.0 719.2,372.0 719.5,372.0 719.8,372.0 720.1,372.0 720.3,372.0 720.6,372.0 720.9,372.0 721.2,372.0 721.5,372.0 721.8,372.1 722.1,372.1 722.4,372.1 722.7,372.1 722.9,372.1 723.2,372.1 723.5,372.1 723.8,372.1 724.1,372.1 724.4,372.1 724.7,372.1 725.0,372.1 725.2,372.1 725.5,372.2 725.8,372.2 726.1,372.2 726.4,372.2 726.7,372.2 727.0,372.2 727.3,372.2 727.6,372.2 727.8,372.2 728.1,372.2 728.4,372.2 728.7,372.2 729.0,372.2 729.3,372.2 729.6,372.2 729.9,372.2 730.2,372.2 730.4,372.3 730.7,372.3 731.0,372.3 731.3,372.3 731.6,372.3 731.9,372.3 732.2,372.3 732.5,372.3 732.8,372.3 733.0,372.3 733.3,372.3 733.6,372.3 733.9,372.3 734.2,372.3 734.5,372.3 734.8,372.3 735.1,372.3 735.3,372.3 735.6,372.3 735.9,372.3 736.2,372.3 736.5,372.3 736.8,372.3 737.1,372.3 737.4,372.3 737.7,372.3 737.9,372.3 738.2,372.3 738.5,372.3 738.8,372.3 739.1,372.4 739.4,372.4 739.7,372.4 740.0,372.4 740.3,372.4 740.5,372.4 740.8,372.4 741.1,372.4 741.4,372.4 741.7,372.4 742.0,372.4 742.3,372.4 742.6,372.4 742.9,372.4 743.1,372.4 743.4,372.4 743.7,372.4 744.0,372.4 744.3,372.4 744.6,372.4 744.9,372.4 745.2,372.4 745.4,372.4 745.7,372.4 746.0,372.4 746.3,372.4 746.6,372.4 746.9,372.4 747.2,372.4 747.5,372.4 747.8,372.4 748.0,372.4 748.3,372.4 748.6,372.4 748.9,372.4 749.2,372.4" fill="none" stroke="#d84a6a" stroke-width="0.6" stroke-linejoin="round"/><rect x="577.5" y="268.6" width="5.5" height="5" fill="#e4e4e4" stroke="#c4c4c4" stroke-width="0.4"/><path d="M579,270.4 L581.6,270.4 L580.3,272Z" fill="#111"/><rect x="576.8" y="360.5" width="5.5" height="5" fill="#e4e4e4"/><path d="M577.8,363 H581.3 M579.55,361.3 V364.7" stroke="#111" stroke-width="0.7"/><rect x="576.8" y="367" width="5.5" height="5" fill="#e4e4e4"/><path d="M577.8,369.5 H581.3" stroke="#444" stroke-width="0.7"/><rect x="605" y="396.5" width="5" height="4.8" fill="#e2e2e2" stroke="#c8c8c8" stroke-width="0.4"/><path d="M606,398.9 H609" stroke="#333" stroke-width="0.6"/><rect x="611" y="396.5" width="5" height="4.8" fill="#e2e2e2" stroke="#c8c8c8" stroke-width="0.4"/><path d="M612,398.9 H615 M613.5,397.4 V400.4" stroke="#333" stroke-width="0.6"/><rect x="743.5" y="396.5" width="5.5" height="5" fill="#e4e4e4" stroke="#c4c4c4" stroke-width="0.4"/><path d="M745,398.4 L747.6,398.4 L746.3,400Z" fill="#111"/><path d="M757,403.5 L763.5,397 M759.5,403.5 L763.5,399.5 M762,403.5 L763.5,402" stroke="#bbb" stroke-width="0.5"/></svg>
<div class="t" style="left:603.00px;top:273.26px;font-size:20px;color:#444;font-weight:normal;transform-origin:0 0;transform:scale(0.2700,0.2700) translateX(-100%);">100</div>
<div class="t" style="left:603.00px;top:321.81px;font-size:20px;color:#444;font-weight:normal;transform-origin:0 0;transform:scale(0.2700,0.2700) translateX(-100%);">50</div>
<div class="t" style="left:603.00px;top:370.36px;font-size:20px;color:#444;font-weight:normal;transform-origin:0 0;transform:scale(0.2700,0.2700) translateX(-100%);">0</div>
<div class="t" style="left:663.20px;top:374.06px;font-size:20px;color:#444;font-weight:normal;transform-origin:0 0;transform:scale(0.2700,0.2700) translateX(-50%);">0.2</div>
<div class="t" style="left:719.70px;top:374.06px;font-size:20px;color:#444;font-weight:normal;transform-origin:0 0;transform:scale(0.2700,0.2700) translateX(-50%);">0.4</div>
<div class="t" style="left:660.00px;top:394.59px;font-size:20px;color:#333;font-weight:normal;transform-origin:0 0;transform:scale(0.2446,0.2779);">Frequency (Hz)</div>
<div class="t" style="left:565.5px;top:318px;width:30px;text-align:center;font-size:5.6px;color:#444;transform:rotate(-90deg);">Power (&#956;s&#178;)</div>
<div class="r" style="left:764.5px;top:37px;width:3.5px;height:368px;background:#c5d3e2;"></div>
<div class="r" style="left:766.3px;top:37px;width:0.8px;height:368px;background:#9fb0c2;"></div>
<div class="r" style="left:0px;top:405px;width:768px;height:11px;background:#eef0f3;border-top:0.5px solid #d8dde4"></div>
<div class="r" style="left:13.5px;top:406.6px;width:60.5px;height:8.4px;background:#cde0f4;border:0.6px solid #8fb4dc"></div>
<svg width="120" height="432" style="left:0;top:0"><circle cx="17.6" cy="410.8" r="2.6" fill="#f0c040"/><path d="M3.5,412 Q5,407.5 8.5,409 M6,413.5 Q8.5,414 9.5,410.5" stroke="#5a8ac8" stroke-width="0.7" fill="none"/></svg>
<div class="t" style="left:22.70px;top:408.24px;font-size:20px;color:#1e2e48;font-weight:normal;transform-origin:0 0;transform:scale(0.2393,0.2719);">Equivital and Metabolic</div>
<div class="r" style="left:646px;top:405.5px;width:0.5px;height:10px;background:#d8d8d8;"></div>
<div class="r" style="left:716.4px;top:405.5px;width:0.5px;height:10px;background:#d8d8d8;"></div>
<div class="r" style="left:741.2px;top:405.5px;width:0.5px;height:10px;background:#d8d8d8;"></div>
<div class="t" style="left:719.70px;top:408.68px;font-size:20px;color:#444;font-weight:normal;transform-origin:0 0;transform:scale(0.2168,0.2464);">70.00 GB</div>
<div class="r" style="left:0px;top:416px;width:768px;height:16px;background:#1e1e1e;"></div>
<div class="r" style="left:19.3px;top:416px;width:137.5px;height:16px;background:#3b3b3b;"></div>
<svg width="768" height="432" style="left:0;top:0"><path d="M6.3,421.3 L9.3,420.9 L9.3,423.7 L6.3,423.7Z M9.9,420.8 L12.9,420.4 L12.9,423.7 L9.9,423.7Z M6.3,424.3 L9.3,424.3 L9.3,427.1 L6.3,426.7Z M9.9,424.3 L12.9,424.3 L12.9,427.6 L9.9,427.2Z" fill="#ffffff"/><rect x="163.5" y="421" width="5.5" height="6" fill="none" stroke="#ddd" stroke-width="0.8"/><path d="M162,422 V426 M170.5,422 V426" stroke="#ddd" stroke-width="0.6"/><path d="M189,424.5 H184.5 Q184.7,421.3 186.8,421.3 Q189,421.3 189,424.5 M188.6,427.2 Q187.6,428 186.6,428 Q183.3,428 183.3,424.5 Q183.3,420 187,420 Q190.4,420 190.4,424.5" fill="none" stroke="#2a8ae0" stroke-width="1.1"/><rect x="201.5" y="421.5" width="7.5" height="6" fill="#f0c850"/><rect x="201.5" y="420.5" width="3.5" height="1.5" fill="#e0b040"/><rect x="202" y="423" width="6.5" height="4" fill="#7ab0e0" opacity="0.6"/><path d="M221.5,422.5 H229 L228.3,428.5 H222.2Z" fill="#fff"/><path d="M223.5,422.5 Q225.25,419.5 227,422.5" fill="none" stroke="#fff" stroke-width="0.6"/><rect x="223.4" y="424" width="1.6" height="1.6" fill="#1e1e1e"/><rect x="225.6" y="424" width="1.6" height="1.6" fill="#1e1e1e"/><rect x="223.4" y="426.2" width="1.6" height="1.6" fill="#1e1e1e"/><rect x="225.6" y="426.2" width="1.6" height="1.6" fill="#1e1e1e"/><rect x="241.5" y="420.8" width="7.5" height="7" rx="0.8" fill="#e8a060"/><path d="M244,422.5 L247.2,424.3 L244,426.1Z" fill="#fff"/><rect x="255" y="416" width="19.5" height="16" fill="#3a3f48"/><rect x="255" y="431" width="19.5" height="1" fill="#7aaae0"/><path d="M258.5,424.5 H261 L262,421.5 L263.5,427 L264.8,423.5 L266,424.5 H271" stroke="#6aa8e8" stroke-width="1.1" fill="none"/><path d="M263,419.8 V421 M267,426.5 V428.5" stroke="#6aa8e8" stroke-width="0.8"/><path d="M677.6,425.7 L679.5,423.6 L681.4,425.7" stroke="#ddd" stroke-width="0.7" fill="none"/><rect x="688" y="422.5" width="6" height="4.5" fill="#ddd"/><rect x="688" y="421.5" width="2.5" height="1.2" fill="#ddd"/><rect x="698.5" y="421.5" width="6" height="4.3" fill="none" stroke="#ddd" stroke-width="0.7"/><path d="M700.5,427.8 H703 M701.8,425.8 V427.8" stroke="#ddd" stroke-width="0.6"/><path d="M708,423.2 H709.4 L711.2,421.6 V427.8 L709.4,426.2 H708Z" fill="none" stroke="#ddd" stroke-width="0.6"/><path d="M712.4,422.8 Q713.4,424.7 712.4,426.6" stroke="#ddd" stroke-width="0.6" fill="none"/><path d="M717.5,421.3 H724.5 V426 H720.3 L718.8,427.8 V426 H717.5Z" fill="#eee"/><path d="M718.8,422.8 H723.2 M718.8,424.3 H722" stroke="#333" stroke-width="0.5"/></svg>
<div class="t" style="left:23.90px;top:421.45px;font-size:20px;color:#a8a8a8;font-weight:normal;transform-origin:0 0;transform:scale(0.2948,0.3350);filter:grayscale(1);">Search the web and Windows</div>
<div class="t" style="left:725.80px;top:422.14px;font-size:20px;color:#e8e8e8;font-weight:normal;transform-origin:0 0;transform:scale(0.2120,0.2409);filter:grayscale(1);">ENG</div>
<div class="t" style="left:742.70px;top:418.73px;font-size:20px;color:#e8e8e8;font-weight:normal;transform-origin:0 0;transform:scale(0.2313,0.2629);filter:grayscale(1);">12:00 PM</div>
<div class="t" style="left:743.30px;top:425.17px;font-size:20px;color:#e8e8e8;font-weight:normal;transform-origin:0 0;transform:scale(0.2275,0.2585);filter:grayscale(1);">5/3/2016</div>
</body></html>
